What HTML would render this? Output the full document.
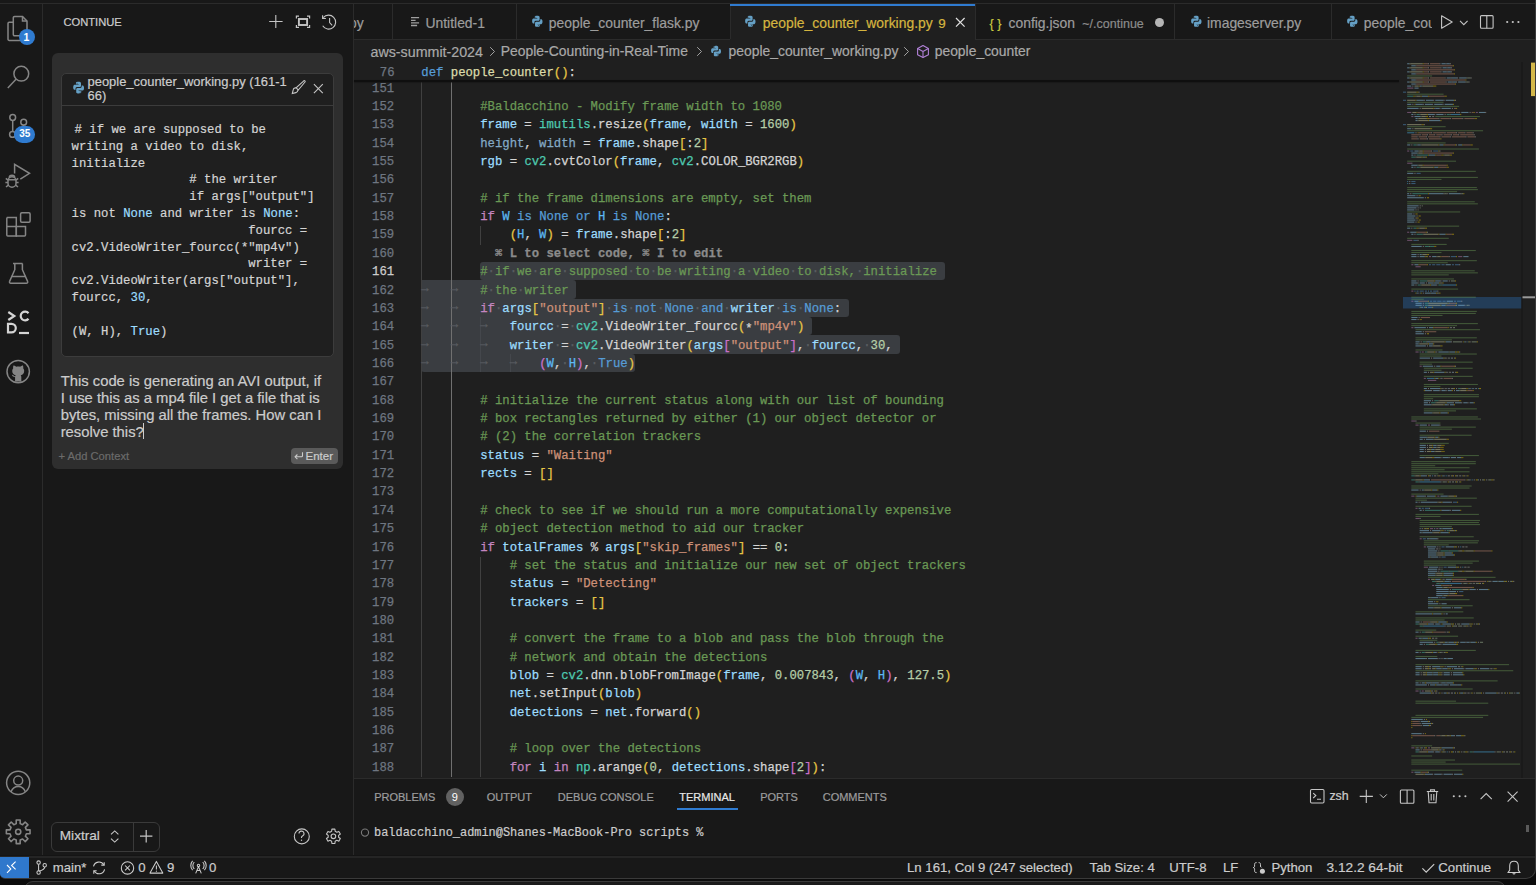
<!DOCTYPE html>
<html><head><meta charset="utf-8">
<style>
*{box-sizing:border-box;margin:0;padding:0}
html,body{width:1536px;height:885px;overflow:hidden;background:#0c0c0c;font-family:"Liberation Sans",sans-serif}
.abs{position:absolute}
#win{position:absolute;left:0;top:0;width:1536px;height:879px;background:#181818;border-bottom-left-radius:5px;border-bottom-right-radius:10px;overflow:hidden;border-right:1px solid #3a3a3a;border-bottom:1px solid #3a3a3a}
#behind{position:absolute;left:24px;top:881px;width:1482px;height:20px;background:#1b1b1b;border:1px solid #3a3a3a;border-radius:9px}
.hl{position:absolute;height:1px;background:#2b2b2b}
.vl{position:absolute;width:1px;background:#2b2b2b}
.ui{position:absolute;white-space:pre;font-family:"Liberation Sans",sans-serif;line-height:1}
.mono{font-family:"Liberation Mono",monospace}
#editor{position:absolute;left:354px;top:62px;width:1182px;height:716px;background:#1f1f1f;overflow:hidden}
.cl,.ln{position:absolute;white-space:pre;font-family:"Liberation Mono",monospace;font-size:12.28px;height:18.356px;line-height:18.356px}
.cl{left:421.3px;color:#d4d4d4;-webkit-text-stroke:0.25px currentColor}
.ln{left:353.2px;width:41px;text-align:right;color:#6e7681;-webkit-text-stroke:0.25px currentColor}
.ln.act{color:#cccccc}
.sel{position:absolute;background:#3a3d41;border-radius:3px}
.ig,.iga{position:absolute;width:1px;background:#404040}
.iga{background:#707070}
.ws{color:#5a5d62}
.arw{position:relative;top:-1.8px}
.igs{position:absolute;width:1px;background:#44474c}
.hint{color:#8b8b8b;font-weight:bold}
svg{position:absolute;overflow:visible}
.t{position:absolute;white-space:pre;line-height:1;-webkit-text-stroke:0.2px currentColor}
.r{position:absolute}
.badge{position:absolute;background:#2f7bd0;color:#fff;font-weight:bold;font-size:10.5px;text-align:center;line-height:16px;font-family:"Liberation Sans",sans-serif}
</style></head>
<body>
<div id="behind"></div>
<div id="win">
  <div class="hl" style="left:0;top:3px;width:1536px"></div>
  <div class="vl" style="left:42px;top:4px;height:852px"></div>
  <div class="vl" style="left:353px;top:4px;height:852px"></div>
<svg style="left:6px;top:15px;" width="24" height="28" viewBox="0 0 24 28"><g fill="none" stroke="#858585" stroke-width="1.5"><path d="M8.5 1.5h8l4.5 4.5v13.5a1.2 1.2 0 0 1-1.2 1.2H8.5a1.2 1.2 0 0 1-1.2-1.2V2.7a1.2 1.2 0 0 1 1.2-1.2z"/><path d="M16.5 1.5v4.5h4.5"/><path d="M7.3 7.2H3.2a1.2 1.2 0 0 0-1.2 1.2v15.8a1.2 1.2 0 0 0 1.2 1.2h11.4a1.2 1.2 0 0 0 1.2-1.2v-3"/></g></svg>
<div class="badge" style="left:18.5px;top:28.6px;width:16px;height:16px;border-radius:8px">1</div>
<svg style="left:0px;top:55px;" width="42" height="40" viewBox="0 55 42 40"><g fill="none" stroke="#858585" stroke-width="1.5"><circle cx="21.3" cy="73.7" r="7.4"/><path d="M16 79.3L7.8 88"/></g></svg>
<svg style="left:0px;top:105px;" width="42" height="45" viewBox="0 105 42 45"><g fill="none" stroke="#858585" stroke-width="1.5"><circle cx="12.7" cy="117.5" r="2.9"/><circle cx="23.7" cy="122.2" r="2.9"/><circle cx="12.5" cy="134.4" r="2.9"/><path d="M12.7 120.4v11.1"/><path d="M23.7 125.1c0 4-4 5.5-9 7.5"/></g></svg>
<div class="badge" style="left:14.4px;top:126.2px;width:20.6px;height:16.6px;border-radius:8.3px;font-size:10px;line-height:16.6px">35</div>
<svg style="left:0px;top:158px;" width="42" height="35" viewBox="0 158 42 35"><g fill="none" stroke="#858585" stroke-width="1.5"><path d="M14.6 173.6V164.4L29.5 173.3 20.3 179.2"/><path d="M8 180.8a4 4 0 0 1 8 0v2.4a4 4 0 0 1-8 0z"/><path d="M9.3 177.6a2.7 2.4 0 0 1 5.4 0M8 179.8h8M8 180.2l-2.2-1.8M16 180.2l2.2-1.8M8 182.6h-2.6M16 182.6h2.6M8.3 185.2l-2.3 1.8M15.7 185.2l2.3 1.8"/></g></svg>
<svg style="left:0px;top:208px;" width="42" height="32" viewBox="0 208 42 32"><g fill="none" stroke="#858585" stroke-width="1.5"><path d="M6.8 226.5h9.5v9.5H7.8a1 1 0 0 1-1-1zM6.8 217.5h9.5v9H6.8v-8a1 1 0 0 1 1-1z"/><path d="M16.3 226.5h9.2v8.5a1 1 0 0 1-1 1h-8.2z"/><rect x="20.6" y="212.8" width="9.5" height="9.5" rx="1.2"/></g></svg>
<svg style="left:0px;top:258px;" width="42" height="30" viewBox="0 258 42 30"><g fill="none" stroke="#858585" stroke-width="1.5"><path d="M13 263.5h9.5M14.8 263.5v6.2L9.6 281.3a1.3 1.3 0 0 0 1.2 1.9h15.6a1.3 1.3 0 0 0 1.2-1.9l-5.2-11.6v-6.2"/><path d="M11.5 276.5h14.5"/></g></svg>
<svg style="left:0px;top:305px;" width="42" height="34" viewBox="0 305 42 34"><g fill="none" stroke="#d4d4d4" stroke-width="2.2"><path d="M8.3 312l6 4-6 4"/><path d="M28.5 313.2a4.4 4.4 0 1 0 0 5.6"/><path d="M8 323.8h3.5a4.3 4.3 0 0 1 0 8.6H8z"/><path d="M19 333h10"/></g></svg>
<svg style="left:0px;top:355px;" width="42" height="34" viewBox="0 355 42 34"><defs><clipPath id="ghc"><circle cx="18.2" cy="371.6" r="11.2"/></clipPath></defs><circle cx="18.2" cy="371.6" r="11.2" fill="none" stroke="#858585" stroke-width="1.5"/><g clip-path="url(#ghc)"><path fill="#858585" transform="translate(8.2 361.6) scale(1.25)" d="M5.5 16V12.6C3.8 12.3 3.1 11.5 2.9 10.6L4 10.8C4.5 11.6 5 11.9 5.6 11.8C5.7 11.4 5.8 11.1 6 10.9C4.2 10.6 3.2 9.4 3.2 7.4C3.2 6.6 3.5 5.9 4 5.3C3.9 4.9 3.8 4.1 4.2 3.1C5 3.1 5.8 3.6 6.4 4.1C7.4 3.8 8.6 3.8 9.6 4.1C10.2 3.6 11 3.1 11.8 3.1C12.2 4.1 12.1 4.9 12 5.3C12.5 5.9 12.8 6.6 12.8 7.4C12.8 9.4 11.8 10.6 10 10.9C10.3 11.2 10.5 11.7 10.5 12.3V16Z"/></g></svg>
<svg style="left:0px;top:765px;" width="42" height="36" viewBox="0 765 42 36"><g fill="none" stroke="#858585" stroke-width="1.5"><circle cx="18.2" cy="782.8" r="11.6"/><circle cx="18.2" cy="780.6" r="4.5"/><path d="M11 792c1.3-3.4 4-5.4 7.2-5.4s5.9 2 7.2 5.4"/></g></svg>
<svg style="left:0px;top:815px;" width="42" height="36" viewBox="0 815 42 36"><g fill="none" stroke="#858585" stroke-width="1.6" stroke-linejoin="round"><circle cx="18.2" cy="831.8" r="2.6"/><path d="M16.24 823.63 L16.23 819.96 L20.17 819.96 L20.16 823.63 L22.59 824.64 L25.18 822.04 L27.96 824.82 L25.36 827.41 L26.37 829.84 L30.04 829.83 L30.04 833.77 L26.37 833.76 L25.36 836.19 L27.96 838.78 L25.18 841.56 L22.59 838.96 L20.16 839.97 L20.17 843.64 L16.23 843.64 L16.24 839.97 L13.81 838.96 L11.22 841.56 L8.44 838.78 L11.04 836.19 L10.03 833.76 L6.36 833.77 L6.36 829.83 L10.03 829.84 L11.04 827.41 L8.44 824.82 L11.22 822.04 L13.81 824.64Z"/></g></svg>
<div class="t" style="left:63.40px;top:17.12px;font-size:11.2px;color:#cccccc;font-family:"Liberation Sans",sans-serif;">CONTINUE</div>
<svg style="left:266px;top:12px;" width="20" height="20" viewBox="266 12 20 20"><g fill="none" stroke="#c5c5c5" stroke-width="1.1"><path d="M275.8 15v13M269.2 21.5h13.4"/></g></svg>
<svg style="left:292px;top:12px;" width="22" height="20" viewBox="292 12 22 20"><g fill="none" stroke="#c5c5c5" stroke-width="1.2"><path d="M296.4 18.6v-2.4h2.6M307 16.2h2.6v2.4M309.6 25v2.4H307M299 27.4h-2.6V25"/></g><rect x="298.9" y="19" width="8.2" height="6" fill="none" stroke="#c5c5c5" stroke-width="1.9"/></svg>
<svg style="left:318px;top:12px;" width="22" height="20" viewBox="318 12 22 20"><g fill="none" stroke="#c5c5c5" stroke-width="1.1"><path d="M323.3 17.6a7 7 0 1 1-0.6 8.2"/><path d="M322.6 15.2v3.3h3.3"/><path d="M329.6 18v4.5l2.6 2.8"/></g></svg>
<div class="r" style="left:52.2px;top:53px;width:290.8px;height:416px;background:#2e2e2e;border-radius:6px"></div>
<div class="r" style="left:60.5px;top:72.6px;width:273.5px;height:284.6px;background:#1f1f1f;border:1px solid #3c3c3c;border-radius:5px"></div>
<div class="r" style="left:61.5px;top:105.3px;width:271.5px;height:1px;background:#3c3c3c;"></div>
<svg style="left:71.965px;top:80.865px" width="13.225" height="13.225" viewBox="0 0 16 16"><path fill="#65a0c5" d="M7.9 1C4.6 1 4.8 2.4 4.8 2.4V3.9h3.2v.5H3.5S1.4 4.2 1.4 7.5s1.8 3.2 1.8 3.2h1.1V9.2s-.1-1.8 1.8-1.8h3.1s1.7 0 1.7-1.7V2.8S11.2 1 7.9 1zM6.1 2.1c.3 0 .6.3.6.6s-.3.6-.6.6-.6-.3-.6-.6.3-.6.6-.6z"/><path fill="#65a0c5" d="M8.1 15c3.3 0 3.1-1.4 3.1-1.4v-1.5H8v-.5h4.5s2.1.2 2.1-3.1-1.8-3.2-1.8-3.2h-1.1v1.5s.1 1.8-1.8 1.8H6.8s-1.7 0-1.7 1.7v2.9S4.8 15 8.1 15zm1.8-1.1c-.3 0-.6-.3-.6-.6s.3-.6.6-.6.6.3.6.6-.3.6-.6.6z"/></svg>
<div class="t" style="left:87.50px;top:76.24px;font-size:12.95px;color:#cccccc;font-family:"Liberation Sans",sans-serif;">people_counter_working.py (161-1</div>
<div class="t" style="left:87.50px;top:90.44px;font-size:12.95px;color:#cccccc;font-family:"Liberation Sans",sans-serif;">66)</div>
<svg style="left:288px;top:78px;" width="20" height="20" viewBox="288 78 20 20"><g fill="none" stroke="#c5c5c5" stroke-width="1.1"><path d="M303.8 80.8c.8-.6 1.8.4 1.2 1.2l-6.7 8-2.2-2.2z"/><path d="M296 87.9c-1.2-.3-2.6.6-2.8 2l-.9 3.6 3.6-.9c1.3-.3 2.2-1.7 1.9-2.9"/></g></svg>
<svg style="left:310px;top:82px;" width="14" height="14" viewBox="310 82 14 14"><g fill="none" stroke="#c5c5c5" stroke-width="1.1"><path d="M313.9 84.2l8.9 8.9M322.8 84.2l-8.9 8.9"/></g></svg>
<div class="t mono" style="left:74.60px;top:121.00px;height:18px;line-height:18px;font-size:12.28px;color:#d4d4d4"># if we are supposed to be</div>
<div class="t mono" style="left:71.60px;top:137.80px;height:18px;line-height:18px;font-size:12.28px;color:#d4d4d4">writing a video to disk,</div>
<div class="t mono" style="left:71.60px;top:154.60px;height:18px;line-height:18px;font-size:12.28px;color:#d4d4d4">initialize</div>
<div class="t mono" style="left:71.60px;top:171.40px;height:18px;line-height:18px;font-size:12.28px;color:#d4d4d4">                # the writer</div>
<div class="t mono" style="left:71.60px;top:188.20px;height:18px;line-height:18px;font-size:12.28px;color:#d4d4d4">                if args["output"]</div>
<div class="t mono" style="left:71.60px;top:205.00px;height:18px;line-height:18px;font-size:12.28px;color:#d4d4d4">is not </div>
<div class="t mono" style="left:123.19px;top:205.00px;height:18px;line-height:18px;font-size:12.28px;color:#9cdcfe">None</div>
<div class="t mono" style="left:152.67px;top:205.00px;height:18px;line-height:18px;font-size:12.28px;color:#d4d4d4"> and writer is </div>
<div class="t mono" style="left:263.22px;top:205.00px;height:18px;line-height:18px;font-size:12.28px;color:#9cdcfe">None</div>
<div class="t mono" style="left:292.70px;top:205.00px;height:18px;line-height:18px;font-size:12.28px;color:#d4d4d4">:</div>
<div class="t mono" style="left:71.60px;top:221.80px;height:18px;line-height:18px;font-size:12.28px;color:#d4d4d4">                        fourcc =</div>
<div class="t mono" style="left:71.60px;top:238.60px;height:18px;line-height:18px;font-size:12.28px;color:#d4d4d4">cv2.VideoWriter_fourcc(*"mp4v")</div>
<div class="t mono" style="left:71.60px;top:255.40px;height:18px;line-height:18px;font-size:12.28px;color:#d4d4d4">                        writer =</div>
<div class="t mono" style="left:71.60px;top:272.20px;height:18px;line-height:18px;font-size:12.28px;color:#d4d4d4">cv2.VideoWriter(args["output"],</div>
<div class="t mono" style="left:71.60px;top:289.00px;height:18px;line-height:18px;font-size:12.28px;color:#d4d4d4">fourcc, </div>
<div class="t mono" style="left:130.56px;top:289.00px;height:18px;line-height:18px;font-size:12.28px;color:#9cdcfe">30</div>
<div class="t mono" style="left:145.30px;top:289.00px;height:18px;line-height:18px;font-size:12.28px;color:#d4d4d4">,</div>
<div class="t mono" style="left:71.60px;top:322.60px;height:18px;line-height:18px;font-size:12.28px;color:#d4d4d4">(W, H), </div>
<div class="t mono" style="left:130.56px;top:322.60px;height:18px;line-height:18px;font-size:12.28px;color:#9cdcfe">True</div>
<div class="t mono" style="left:160.04px;top:322.60px;height:18px;line-height:18px;font-size:12.28px;color:#d4d4d4">)</div>
<div class="t" style="left:60.70px;top:374.47px;font-size:14.8px;color:#cccccc;font-family:"Liberation Sans",sans-serif;">This code is generating an AVI output, if</div>
<div class="t" style="left:60.70px;top:391.27px;font-size:14.8px;color:#cccccc;font-family:"Liberation Sans",sans-serif;">I use this as a mp4 file I get a file that is</div>
<div class="t" style="left:60.70px;top:408.07px;font-size:14.8px;color:#cccccc;font-family:"Liberation Sans",sans-serif;">bytes, missing all the frames. How can I</div>
<div class="t" style="left:60.70px;top:424.87px;font-size:14.8px;color:#cccccc;font-family:"Liberation Sans",sans-serif;">resolve this?</div>
<div class="r" style="left:143px;top:423px;width:1px;height:16px;background:#cccccc;"></div>
<div class="t" style="left:58.50px;top:450.52px;font-size:11.2px;color:#6b6b6b;font-family:"Liberation Sans",sans-serif;">+ Add Context</div>
<div class="r" style="left:291px;top:448.3px;width:47px;height:15.7px;background:#5a5a5a;border-radius:4px"></div>
<div class="t" style="left:305.50px;top:450.57px;font-size:11.5px;color:#cccccc;font-family:"Liberation Sans",sans-serif;">Enter</div>
<svg style="left:293px;top:450px;" width="12" height="12" viewBox="293 450 12 12"><g fill="none" stroke="#cccccc" stroke-width="1.1"><path d="M302.5 452.2v3.6a1 1 0 0 1-1 1h-6.4"/><path d="M297.4 454.5l-2.3 2.3 2.3 2.3"/></g></svg>
<div class="r" style="left:51px;top:821.6px;width:108.8px;height:30.2px;background:transparent;border:1px solid #3a3a3a;border-radius:6px"></div>
<div class="r" style="left:133.3px;top:822px;width:1px;height:29px;background:#3a3a3a;"></div>
<div class="t" style="left:59.80px;top:829.49px;font-size:13.6px;color:#cccccc;font-family:"Liberation Sans",sans-serif;">Mixtral</div>
<svg style="left:108px;top:826px;" width="14" height="20" viewBox="108 826 14 20"><g fill="none" stroke="#c5c5c5" stroke-width="1.1"><path d="M111 834.4l3.7-3.5 3.7 3.5M111 838.6l3.7 3.5 3.7-3.5"/></g></svg>
<svg style="left:138px;top:828px;" width="16" height="16" viewBox="138 828 16 16"><g fill="none" stroke="#c5c5c5" stroke-width="1.2"><path d="M146.2 830v12.4M140 836.2h12.4"/></g></svg>
<svg style="left:292px;top:826px;" width="20" height="20" viewBox="292 826 20 20"><circle cx="301.8" cy="836.4" r="7.5" fill="none" stroke="#c5c5c5" stroke-width="1.1"/><path d="M299 833.6a2.5 2.5 0 1 1 3.5 2.3c-.8.4-1 .9-1 1.6v.6" fill="none" stroke="#c5c5c5" stroke-width="1.1"/><circle cx="301.5" cy="840.3" r=".7" fill="#c5c5c5"/></svg>
<svg style="left:324px;top:826px;" width="20" height="20" viewBox="324 826 20 20"><g fill="none" stroke="#c5c5c5" stroke-width="1.1" stroke-linejoin="round"><circle cx="333.4" cy="836.3" r="2.3"/><path d="M331.63 831.30 L331.88 829.16 L334.92 829.16 L335.17 831.30 L336.84 832.27 L338.82 831.42 L340.34 834.04 L338.61 835.33 L338.61 837.27 L340.34 838.56 L338.82 841.18 L336.84 840.33 L335.17 841.30 L334.92 843.44 L331.88 843.44 L331.63 841.30 L329.96 840.33 L327.98 841.18 L326.46 838.56 L328.19 837.27 L328.19 835.33 L326.46 834.04 L327.98 831.42 L329.96 832.27Z"/></g></svg>
  <div class="abs" style="left:354px;top:40px;width:1182px;height:738px;background:#1f1f1f"></div>
  <div class="abs" style="left:354px;top:4px;width:1182px;height:35px;background:#181818"></div>
  <div class="hl" style="left:354px;top:39px;width:1182px"></div>
<div style="position:absolute;left:354px;top:0;width:1182px;height:40px;overflow:hidden"><div style="position:absolute;left:-354px;top:0;width:1536px;height:40px">
<div class="r" style="left:392px;top:4px;width:1px;height:35px;background:#2b2b2b;"></div>
<div class="r" style="left:515.5px;top:4px;width:1px;height:35px;background:#2b2b2b;"></div>
<div class="r" style="left:1174px;top:4px;width:1px;height:35px;background:#2b2b2b;"></div>
<div class="r" style="left:1330.5px;top:4px;width:1px;height:35px;background:#2b2b2b;"></div>
<div class="r" style="left:730px;top:4px;width:245px;height:36px;background:#1f1f1f;"></div>
<div class="r" style="left:729.5px;top:4px;width:1px;height:35px;background:#2b2b2b;"></div>
<div class="r" style="left:974.5px;top:4px;width:1px;height:35px;background:#2b2b2b;"></div>
<div class="r" style="left:730px;top:4px;width:245px;height:1.5px;background:#2f7bd0;"></div>
<div class="t" style="left:349.00px;top:17.03px;font-size:13.9px;color:#9d9d9d;font-family:"Liberation Sans",sans-serif;">py</div>
<svg style="left:410px;top:16px;" width="10" height="11" viewBox="410 16 10 11"><g stroke="#a0a0a0" stroke-width="1.3"><path d="M411 17.6h8.1M411 20.3h4.6M411 22.9h8.1M411 25.5h6.1"/></g></svg>
<div class="t" style="left:425.50px;top:17.03px;font-size:13.9px;color:#9d9d9d;font-family:"Liberation Sans",sans-serif;">Untitled-1</div>
<svg style="left:531.01px;top:14.91px" width="12.649999999999999" height="12.649999999999999" viewBox="0 0 16 16"><path fill="#65a0c5" d="M7.9 1C4.6 1 4.8 2.4 4.8 2.4V3.9h3.2v.5H3.5S1.4 4.2 1.4 7.5s1.8 3.2 1.8 3.2h1.1V9.2s-.1-1.8 1.8-1.8h3.1s1.7 0 1.7-1.7V2.8S11.2 1 7.9 1zM6.1 2.1c.3 0 .6.3.6.6s-.3.6-.6.6-.6-.3-.6-.6.3-.6.6-.6z"/><path fill="#65a0c5" d="M8.1 15c3.3 0 3.1-1.4 3.1-1.4v-1.5H8v-.5h4.5s2.1.2 2.1-3.1-1.8-3.2-1.8-3.2h-1.1v1.5s.1 1.8-1.8 1.8H6.8s-1.7 0-1.7 1.7v2.9S4.8 15 8.1 15zm1.8-1.1c-.3 0-.6-.3-.6-.6s.3-.6.6-.6.6.3.6.6-.3.6-.6.6z"/></svg>
<div class="t" style="left:548.80px;top:17.03px;font-size:13.9px;color:#9d9d9d;font-family:"Liberation Sans",sans-serif;">people_counter_flask.py</div>
<svg style="left:744.31px;top:14.91px" width="12.649999999999999" height="12.649999999999999" viewBox="0 0 16 16"><path fill="#65a0c5" d="M7.9 1C4.6 1 4.8 2.4 4.8 2.4V3.9h3.2v.5H3.5S1.4 4.2 1.4 7.5s1.8 3.2 1.8 3.2h1.1V9.2s-.1-1.8 1.8-1.8h3.1s1.7 0 1.7-1.7V2.8S11.2 1 7.9 1zM6.1 2.1c.3 0 .6.3.6.6s-.3.6-.6.6-.6-.3-.6-.6.3-.6.6-.6z"/><path fill="#65a0c5" d="M8.1 15c3.3 0 3.1-1.4 3.1-1.4v-1.5H8v-.5h4.5s2.1.2 2.1-3.1-1.8-3.2-1.8-3.2h-1.1v1.5s.1 1.8-1.8 1.8H6.8s-1.7 0-1.7 1.7v2.9S4.8 15 8.1 15zm1.8-1.1c-.3 0-.6-.3-.6-.6s.3-.6.6-.6.6.3.6.6-.3.6-.6.6z"/></svg>
<div class="t" style="left:762.80px;top:17.03px;font-size:13.9px;color:#d5b53f;font-family:"Liberation Sans",sans-serif;">people_counter_working.py</div>
<div class="t" style="left:938.30px;top:17.46px;font-size:13.4px;color:#d5b53f;font-family:"Liberation Sans",sans-serif;">9</div>
<svg style="left:953px;top:15px;" width="14" height="14" viewBox="953 15 14 14"><g fill="none" stroke="#e0e0e0" stroke-width="1.2"><path d="M956 18l8.6 8.6M964.6 18L956 26.6"/></g></svg>
<div class="t" style="left:989.50px;top:17.72px;font-size:12.5px;color:#cbcb41;font-family:"Liberation Sans",sans-serif;font-weight:bold;letter-spacing:-1px">{ }</div>
<div class="t" style="left:1008.50px;top:17.03px;font-size:13.9px;color:#9d9d9d;font-family:"Liberation Sans",sans-serif;">config.json</div>
<div class="t" style="left:1082.30px;top:18.22px;font-size:12.5px;color:#8b8b8b;font-family:"Liberation Sans",sans-serif;">~/.continue</div>
<div class="r" style="left:1155px;top:18px;width:9px;height:9px;background:#b5b5b5;border-radius:50%"></div>
<svg style="left:1189.51px;top:14.91px" width="12.649999999999999" height="12.649999999999999" viewBox="0 0 16 16"><path fill="#65a0c5" d="M7.9 1C4.6 1 4.8 2.4 4.8 2.4V3.9h3.2v.5H3.5S1.4 4.2 1.4 7.5s1.8 3.2 1.8 3.2h1.1V9.2s-.1-1.8 1.8-1.8h3.1s1.7 0 1.7-1.7V2.8S11.2 1 7.9 1zM6.1 2.1c.3 0 .6.3.6.6s-.3.6-.6.6-.6-.3-.6-.6.3-.6.6-.6z"/><path fill="#65a0c5" d="M8.1 15c3.3 0 3.1-1.4 3.1-1.4v-1.5H8v-.5h4.5s2.1.2 2.1-3.1-1.8-3.2-1.8-3.2h-1.1v1.5s.1 1.8-1.8 1.8H6.8s-1.7 0-1.7 1.7v2.9S4.8 15 8.1 15zm1.8-1.1c-.3 0-.6-.3-.6-.6s.3-.6.6-.6.6.3.6.6-.3.6-.6.6z"/></svg>
<div class="t" style="left:1207.00px;top:17.03px;font-size:13.9px;color:#9d9d9d;font-family:"Liberation Sans",sans-serif;">imageserver.py</div>
<svg style="left:1345.51px;top:14.91px" width="12.649999999999999" height="12.649999999999999" viewBox="0 0 16 16"><path fill="#65a0c5" d="M7.9 1C4.6 1 4.8 2.4 4.8 2.4V3.9h3.2v.5H3.5S1.4 4.2 1.4 7.5s1.8 3.2 1.8 3.2h1.1V9.2s-.1-1.8 1.8-1.8h3.1s1.7 0 1.7-1.7V2.8S11.2 1 7.9 1zM6.1 2.1c.3 0 .6.3.6.6s-.3.6-.6.6-.6-.3-.6-.6.3-.6.6-.6z"/><path fill="#65a0c5" d="M8.1 15c3.3 0 3.1-1.4 3.1-1.4v-1.5H8v-.5h4.5s2.1.2 2.1-3.1-1.8-3.2-1.8-3.2h-1.1v1.5s.1 1.8-1.8 1.8H6.8s-1.7 0-1.7 1.7v2.9S4.8 15 8.1 15zm1.8-1.1c-.3 0-.6-.3-.6-.6s.3-.6.6-.6.6.3.6.6-.3.6-.6.6z"/></svg>
<div class="t" style="left:1363.8px;top:17.03px;font-size:13.9px;color:#9d9d9d;width:68px;overflow:hidden">people_counter</div>
<div class="r" style="left:1432px;top:4px;width:104px;height:35px;background:#181818;"></div>
<svg style="left:1438px;top:14px;" width="18" height="18" viewBox="1438 14 18 18"><path d="M1441.6 15.8v12.4l10.6-6.2z" fill="none" stroke="#c5c5c5" stroke-width="1.1" stroke-linejoin="round"/></svg>
<svg style="left:1458px;top:18px;" width="12" height="10" viewBox="1458 18 12 10"><path d="M1460 20.8l3.8 3.8 3.8-3.8" fill="none" stroke="#c5c5c5" stroke-width="1.1"/></svg>
<svg style="left:1478px;top:14px;" width="18" height="18" viewBox="1478 14 18 18"><g fill="none" stroke="#c5c5c5" stroke-width="1.1"><rect x="1480.5" y="15.6" width="12.6" height="12.6" rx="1"/><path d="M1486.8 15.6v12.6"/></g></svg>
<svg style="left:1504px;top:18px;" width="18" height="8" viewBox="1504 18 18 8"><g fill="#c5c5c5"><circle cx="1507.2" cy="22" r="1.1"/><circle cx="1512.8" cy="22" r="1.1"/><circle cx="1518.4" cy="22" r="1.1"/></g></svg>
</div></div>
<div class="t" style="left:370.50px;top:44.84px;font-size:14.25px;color:#a9a9a9;font-family:"Liberation Sans",sans-serif;">aws-summit-2024</div>
<svg style="left:489px;top:45px;" width="8" height="12" viewBox="489 45 8 12"><path d="M490.2 47.2l4.3 4.3-4.3 4.3" fill="none" stroke="#a9a9a9" stroke-width="0.95"/></svg>
<div class="t" style="left:500.80px;top:45.13px;font-size:13.9px;color:#a9a9a9;font-family:"Liberation Sans",sans-serif;">People-Counting-in-Real-Time</div>
<svg style="left:696px;top:45px;" width="8" height="12" viewBox="696 45 8 12"><path d="M697.2 47.2l4.3 4.3-4.3 4.3" fill="none" stroke="#a9a9a9" stroke-width="0.95"/></svg>
<svg style="left:709.8549999999999px;top:44.855px" width="12.075" height="12.075" viewBox="0 0 16 16"><path fill="#65a0c5" d="M7.9 1C4.6 1 4.8 2.4 4.8 2.4V3.9h3.2v.5H3.5S1.4 4.2 1.4 7.5s1.8 3.2 1.8 3.2h1.1V9.2s-.1-1.8 1.8-1.8h3.1s1.7 0 1.7-1.7V2.8S11.2 1 7.9 1zM6.1 2.1c.3 0 .6.3.6.6s-.3.6-.6.6-.6-.3-.6-.6.3-.6.6-.6z"/><path fill="#65a0c5" d="M8.1 15c3.3 0 3.1-1.4 3.1-1.4v-1.5H8v-.5h4.5s2.1.2 2.1-3.1-1.8-3.2-1.8-3.2h-1.1v1.5s.1 1.8-1.8 1.8H6.8s-1.7 0-1.7 1.7v2.9S4.8 15 8.1 15zm1.8-1.1c-.3 0-.6-.3-.6-.6s.3-.6.6-.6.6.3.6.6-.3.6-.6.6z"/></svg>
<div class="t" style="left:728.50px;top:45.13px;font-size:13.9px;color:#a9a9a9;font-family:"Liberation Sans",sans-serif;">people_counter_working.py</div>
<svg style="left:903px;top:45px;" width="8" height="12" viewBox="903 45 8 12"><path d="M904.2 47.2l4.3 4.3-4.3 4.3" fill="none" stroke="#a9a9a9" stroke-width="0.95"/></svg>
<svg style="left:915px;top:44px;" width="16" height="16" viewBox="915 44 16 16"><g fill="none" stroke="#b180d7" stroke-width="1.1" stroke-linejoin="round"><path d="M923 45.6l5.4 2.9v6.2l-5.4 2.9-5.4-2.9v-6.2z"/><path d="M917.6 48.5l5.4 3 5.4-3M923 51.5v6.1"/></g></svg>
<div class="t" style="left:934.70px;top:45.13px;font-size:13.9px;color:#a9a9a9;font-family:"Liberation Sans",sans-serif;">people_counter</div>
<div class="sel" style="left:480.26px;top:261.86px;width:464.31px;height:18.36px;border-radius:3px 3px 3px 3px"></div>
<div class="sel" style="left:421.30px;top:280.22px;width:154.77px;height:18.36px;border-radius:0 3px 3px 0"></div>
<div class="sel" style="left:421.30px;top:298.57px;width:427.46px;height:18.36px;border-radius:0 3px 3px 0"></div>
<div class="sel" style="left:421.30px;top:316.93px;width:390.61px;height:18.36px;border-radius:0 3px 3px 0"></div>
<div class="sel" style="left:421.30px;top:335.28px;width:479.05px;height:18.36px;border-radius:0 3px 3px 0"></div>
<div class="sel" style="left:421.30px;top:353.64px;width:213.73px;height:18.36px;border-radius:0 3px 3px 3px"></div>
<div class="ig" style="left:421.30px;top:79.60px;height:697.53px"></div>
<div class="iga" style="left:450.78px;top:79.60px;height:697.53px"></div>
<div class="ig" style="left:480.26px;top:226.45px;height:18.36px"></div>
<div class="ig" style="left:480.26px;top:556.86px;height:220.27px"></div>
<div class="igs" style="left:480.26px;top:316.93px;height:55.07px"></div>
<div class="igs" style="left:509.74px;top:353.64px;height:18.36px"></div>
<div class="ln" style="top:79.60px">151</div>
<div class="ln" style="top:97.96px">152</div>
<div class="cl" style="top:97.96px"><span style="color:#D4D4D4">        </span><span style="color:#6A9955">#Baldacchino - Modify frame width to 1080</span></div>
<div class="ln" style="top:116.31px">153</div>
<div class="cl" style="top:116.31px"><span style="color:#D4D4D4">        </span><span style="color:#9CDCFE">frame</span><span style="color:#D4D4D4"> = </span><span style="color:#4EC9B0">imutils</span><span style="color:#D4D4D4">.resize</span><span style="color:#e6c646">(</span><span style="color:#9CDCFE">frame</span><span style="color:#D4D4D4">, </span><span style="color:#9CDCFE">width</span><span style="color:#D4D4D4"> = </span><span style="color:#B5CEA8">1600</span><span style="color:#e6c646">)</span></div>
<div class="ln" style="top:134.67px">154</div>
<div class="cl" style="top:134.67px"><span style="color:#D4D4D4">        </span><span style="color:#84aac6">height</span><span style="color:#D4D4D4">, </span><span style="color:#84aac6">width</span><span style="color:#D4D4D4"> = </span><span style="color:#9CDCFE">frame</span><span style="color:#D4D4D4">.shape</span><span style="color:#e6c646">[</span><span style="color:#D4D4D4">:</span><span style="color:#B5CEA8">2</span><span style="color:#e6c646">]</span></div>
<div class="ln" style="top:153.02px">155</div>
<div class="cl" style="top:153.02px"><span style="color:#D4D4D4">        </span><span style="color:#9CDCFE">rgb</span><span style="color:#D4D4D4"> = </span><span style="color:#4EC9B0">cv2</span><span style="color:#D4D4D4">.cvtColor</span><span style="color:#e6c646">(</span><span style="color:#9CDCFE">frame</span><span style="color:#D4D4D4">, </span><span style="color:#4EC9B0">cv2</span><span style="color:#D4D4D4">.COLOR_BGR2RGB</span><span style="color:#e6c646">)</span></div>
<div class="ln" style="top:171.38px">156</div>
<div class="ln" style="top:189.74px">157</div>
<div class="cl" style="top:189.74px"><span style="color:#D4D4D4">        </span><span style="color:#6A9955"># if the frame dimensions are empty, set them</span></div>
<div class="ln" style="top:208.09px">158</div>
<div class="cl" style="top:208.09px"><span style="color:#D4D4D4">        </span><span style="color:#C586C0">if</span><span style="color:#D4D4D4"> </span><span style="color:#5cb8f2">W</span><span style="color:#D4D4D4"> </span><span style="color:#569CD6">is</span><span style="color:#D4D4D4"> </span><span style="color:#569CD6">None</span><span style="color:#D4D4D4"> </span><span style="color:#569CD6">or</span><span style="color:#D4D4D4"> </span><span style="color:#5cb8f2">H</span><span style="color:#D4D4D4"> </span><span style="color:#569CD6">is</span><span style="color:#D4D4D4"> </span><span style="color:#569CD6">None</span><span style="color:#D4D4D4">:</span></div>
<div class="ln" style="top:226.45px">159</div>
<div class="cl" style="top:226.45px"><span style="color:#D4D4D4">            </span><span style="color:#e6c646">(</span><span style="color:#5cb8f2">H</span><span style="color:#D4D4D4">, </span><span style="color:#5cb8f2">W</span><span style="color:#e6c646">)</span><span style="color:#D4D4D4"> = </span><span style="color:#9CDCFE">frame</span><span style="color:#D4D4D4">.shape</span><span style="color:#e6c646">[</span><span style="color:#D4D4D4">:</span><span style="color:#B5CEA8">2</span><span style="color:#e6c646">]</span></div>
<div class="ln" style="top:244.80px">160</div>
<div class="ln act" style="top:263.16px">161</div>
<div class="cl" style="top:263.16px">        <span style="color:#6A9955">#<span class="ws">·</span>if<span class="ws">·</span>we<span class="ws">·</span>are<span class="ws">·</span>supposed<span class="ws">·</span>to<span class="ws">·</span>be<span class="ws">·</span>writing<span class="ws">·</span>a<span class="ws">·</span>video<span class="ws">·</span>to<span class="ws">·</span>disk,<span class="ws">·</span>initialize</span></div>
<div class="ln" style="top:281.52px">162</div>
<div class="cl" style="top:281.52px"><span class="ws arw">→</span>   <span class="ws arw">→</span>   <span style="color:#6A9955">#<span class="ws">·</span>the<span class="ws">·</span>writer</span></div>
<div class="ln" style="top:299.87px">163</div>
<div class="cl" style="top:299.87px"><span class="ws arw">→</span>   <span class="ws arw">→</span>   <span style="color:#C586C0">if</span><span style="color:#D4D4D4"><span class="ws">·</span></span><span style="color:#9CDCFE">args</span><span style="color:#e6c646">[</span><span style="color:#CE9178">&quot;output&quot;</span><span style="color:#e6c646">]</span><span style="color:#D4D4D4"><span class="ws">·</span></span><span style="color:#569CD6">is</span><span style="color:#D4D4D4"><span class="ws">·</span></span><span style="color:#569CD6">not</span><span style="color:#D4D4D4"><span class="ws">·</span></span><span style="color:#569CD6">None</span><span style="color:#D4D4D4"><span class="ws">·</span></span><span style="color:#569CD6">and</span><span style="color:#D4D4D4"><span class="ws">·</span></span><span style="color:#9CDCFE">writer</span><span style="color:#D4D4D4"><span class="ws">·</span></span><span style="color:#569CD6">is</span><span style="color:#D4D4D4"><span class="ws">·</span></span><span style="color:#569CD6">None</span><span style="color:#D4D4D4">:</span></div>
<div class="ln" style="top:318.23px">164</div>
<div class="cl" style="top:318.23px"><span class="ws arw">→</span>   <span class="ws arw">→</span>   <span class="ws arw">→</span>   <span style="color:#9CDCFE">fourcc</span><span style="color:#D4D4D4"><span class="ws">·</span>=<span class="ws">·</span></span><span style="color:#4EC9B0">cv2</span><span style="color:#D4D4D4">.VideoWriter_fourcc</span><span style="color:#e6c646">(</span><span style="color:#D4D4D4;position:relative;top:2.2px">*</span><span style="color:#CE9178">&quot;mp4v&quot;</span><span style="color:#e6c646">)</span></div>
<div class="ln" style="top:336.58px">165</div>
<div class="cl" style="top:336.58px"><span class="ws arw">→</span>   <span class="ws arw">→</span>   <span class="ws arw">→</span>   <span style="color:#9CDCFE">writer</span><span style="color:#D4D4D4"><span class="ws">·</span>=<span class="ws">·</span></span><span style="color:#4EC9B0">cv2</span><span style="color:#D4D4D4">.VideoWriter</span><span style="color:#e6c646">(</span><span style="color:#9CDCFE">args</span><span style="color:#cb70c9">[</span><span style="color:#CE9178">&quot;output&quot;</span><span style="color:#cb70c9">]</span><span style="color:#D4D4D4">,<span class="ws">·</span></span><span style="color:#9CDCFE">fourcc</span><span style="color:#D4D4D4">,<span class="ws">·</span></span><span style="color:#B5CEA8">30</span><span style="color:#D4D4D4">,</span></div>
<div class="ln" style="top:354.94px">166</div>
<div class="cl" style="top:354.94px"><span class="ws arw">→</span>   <span class="ws arw">→</span>   <span class="ws arw">→</span>   <span class="ws arw">→</span>   <span style="color:#cb70c9">(</span><span style="color:#5cb8f2">W</span><span style="color:#D4D4D4">,<span class="ws">·</span></span><span style="color:#5cb8f2">H</span><span style="color:#cb70c9">)</span><span style="color:#D4D4D4">,<span class="ws">·</span></span><span style="color:#569CD6">True</span><span style="color:#e6c646">)</span></div>
<div class="ln" style="top:373.30px">167</div>
<div class="ln" style="top:391.65px">168</div>
<div class="cl" style="top:391.65px"><span style="color:#D4D4D4">        </span><span style="color:#6A9955"># initialize the current status along with our list of bounding</span></div>
<div class="ln" style="top:410.01px">169</div>
<div class="cl" style="top:410.01px"><span style="color:#D4D4D4">        </span><span style="color:#6A9955"># box rectangles returned by either (1) our object detector or</span></div>
<div class="ln" style="top:428.36px">170</div>
<div class="cl" style="top:428.36px"><span style="color:#D4D4D4">        </span><span style="color:#6A9955"># (2) the correlation trackers</span></div>
<div class="ln" style="top:446.72px">171</div>
<div class="cl" style="top:446.72px"><span style="color:#D4D4D4">        </span><span style="color:#9CDCFE">status</span><span style="color:#D4D4D4"> = </span><span style="color:#CE9178">&quot;Waiting&quot;</span></div>
<div class="ln" style="top:465.08px">172</div>
<div class="cl" style="top:465.08px"><span style="color:#D4D4D4">        </span><span style="color:#9CDCFE">rects</span><span style="color:#D4D4D4"> = </span><span style="color:#e6c646">[]</span></div>
<div class="ln" style="top:483.43px">173</div>
<div class="ln" style="top:501.79px">174</div>
<div class="cl" style="top:501.79px"><span style="color:#D4D4D4">        </span><span style="color:#6A9955"># check to see if we should run a more computationally expensive</span></div>
<div class="ln" style="top:520.14px">175</div>
<div class="cl" style="top:520.14px"><span style="color:#D4D4D4">        </span><span style="color:#6A9955"># object detection method to aid our tracker</span></div>
<div class="ln" style="top:538.50px">176</div>
<div class="cl" style="top:538.50px"><span style="color:#D4D4D4">        </span><span style="color:#C586C0">if</span><span style="color:#D4D4D4"> </span><span style="color:#9CDCFE">totalFrames</span><span style="color:#D4D4D4"> % </span><span style="color:#9CDCFE">args</span><span style="color:#e6c646">[</span><span style="color:#CE9178">&quot;skip_frames&quot;</span><span style="color:#e6c646">]</span><span style="color:#D4D4D4"> == </span><span style="color:#B5CEA8">0</span><span style="color:#D4D4D4">:</span></div>
<div class="ln" style="top:556.86px">177</div>
<div class="cl" style="top:556.86px"><span style="color:#D4D4D4">            </span><span style="color:#6A9955"># set the status and initialize our new set of object trackers</span></div>
<div class="ln" style="top:575.21px">178</div>
<div class="cl" style="top:575.21px"><span style="color:#D4D4D4">            </span><span style="color:#9CDCFE">status</span><span style="color:#D4D4D4"> = </span><span style="color:#CE9178">&quot;Detecting&quot;</span></div>
<div class="ln" style="top:593.57px">179</div>
<div class="cl" style="top:593.57px"><span style="color:#D4D4D4">            </span><span style="color:#9CDCFE">trackers</span><span style="color:#D4D4D4"> = </span><span style="color:#e6c646">[]</span></div>
<div class="ln" style="top:611.92px">180</div>
<div class="ln" style="top:630.28px">181</div>
<div class="cl" style="top:630.28px"><span style="color:#D4D4D4">            </span><span style="color:#6A9955"># convert the frame to a blob and pass the blob through the</span></div>
<div class="ln" style="top:648.64px">182</div>
<div class="cl" style="top:648.64px"><span style="color:#D4D4D4">            </span><span style="color:#6A9955"># network and obtain the detections</span></div>
<div class="ln" style="top:666.99px">183</div>
<div class="cl" style="top:666.99px"><span style="color:#D4D4D4">            </span><span style="color:#9CDCFE">blob</span><span style="color:#D4D4D4"> = </span><span style="color:#4EC9B0">cv2</span><span style="color:#D4D4D4">.dnn.blobFromImage</span><span style="color:#e6c646">(</span><span style="color:#9CDCFE">frame</span><span style="color:#D4D4D4">, </span><span style="color:#B5CEA8">0.007843</span><span style="color:#D4D4D4">, </span><span style="color:#cb70c9">(</span><span style="color:#5cb8f2">W</span><span style="color:#D4D4D4">, </span><span style="color:#5cb8f2">H</span><span style="color:#cb70c9">)</span><span style="color:#D4D4D4">, </span><span style="color:#B5CEA8">127.5</span><span style="color:#e6c646">)</span></div>
<div class="ln" style="top:685.35px">184</div>
<div class="cl" style="top:685.35px"><span style="color:#D4D4D4">            </span><span style="color:#9CDCFE">net</span><span style="color:#D4D4D4">.setInput</span><span style="color:#e6c646">(</span><span style="color:#9CDCFE">blob</span><span style="color:#e6c646">)</span></div>
<div class="ln" style="top:703.70px">185</div>
<div class="cl" style="top:703.70px"><span style="color:#D4D4D4">            </span><span style="color:#9CDCFE">detections</span><span style="color:#D4D4D4"> = </span><span style="color:#9CDCFE">net</span><span style="color:#D4D4D4">.forward</span><span style="color:#e6c646">()</span></div>
<div class="ln" style="top:722.06px">186</div>
<div class="ln" style="top:740.42px">187</div>
<div class="cl" style="top:740.42px"><span style="color:#D4D4D4">            </span><span style="color:#6A9955"># loop over the detections</span></div>
<div class="ln" style="top:758.77px">188</div>
<div class="cl" style="top:758.77px"><span style="color:#D4D4D4">            </span><span style="color:#C586C0">for</span><span style="color:#D4D4D4"> </span><span style="color:#9CDCFE">i</span><span style="color:#D4D4D4"> </span><span style="color:#C586C0">in</span><span style="color:#D4D4D4"> </span><span style="color:#4EC9B0">np</span><span style="color:#D4D4D4">.arange</span><span style="color:#e6c646">(</span><span style="color:#B5CEA8">0</span><span style="color:#D4D4D4">, </span><span style="color:#9CDCFE">detections</span><span style="color:#D4D4D4">.shape</span><span style="color:#cb70c9">[</span><span style="color:#B5CEA8">2</span><span style="color:#cb70c9">]</span><span style="color:#e6c646">)</span><span style="color:#D4D4D4">:</span></div>
<div class="cl hint" style="top:244.80px">          ⌘ L to select code, ⌘ I to edit</div>
<div class="r" style="left:354px;top:62px;width:1045px;height:18.8px;background:#1f1f1f;"></div>
<div class="r" style="left:354px;top:80.4px;width:1045px;height:1.8px;background:#0f0f0f;box-shadow:0 0.5px 1px #151515"></div>
<div class="ln" style="top:63.9px;left:353.6px">76</div>
<div class="cl" style="top:63.9px"><span style="color:#569CD6">def</span> <span style="color:#DCDCAA">people_counter</span><span style="color:#e6c646">()</span>:</div>
<svg style="left:0;top:0" width="1536" height="885" viewBox="0 0 1536 885"><rect x="1403" y="297" width="118.5" height="11.5" fill="#264f78" opacity="0.65"/><g opacity="0.45"><rect x="1407.16" y="63.20" width="2.08" height="1.1" fill="#9CDCFE"/><rect x="1409.24" y="63.20" width="1.04" height="1.1" fill="#B5CEA8"/><rect x="1410.28" y="63.20" width="12.48" height="1.1" fill="#DCDCAA"/><rect x="1422.76" y="63.20" width="1.04" height="1.1" fill="#FFD700"/><rect x="1423.80" y="63.20" width="4.16" height="1.1" fill="#CE9178"/><rect x="1427.96" y="63.20" width="1.04" height="1.1" fill="#D4D4D4"/><rect x="1430.04" y="63.20" width="9.36" height="1.1" fill="#CE9178"/><rect x="1439.40" y="63.20" width="1.04" height="1.1" fill="#D4D4D4"/><rect x="1441.48" y="63.20" width="4.16" height="1.1" fill="#9CDCFE"/><rect x="1445.64" y="63.20" width="1.04" height="1.1" fill="#D4D4D4"/><rect x="1446.68" y="63.20" width="3.12" height="1.1" fill="#9CDCFE"/><rect x="1449.80" y="63.20" width="1.04" height="1.1" fill="#D4D4D4"/><rect x="1411.32" y="65.23" width="4.16" height="1.1" fill="#9CDCFE"/><rect x="1415.48" y="65.23" width="1.04" height="1.1" fill="#D4D4D4"/><rect x="1416.52" y="65.23" width="36.40" height="1.1" fill="#CE9178"/><rect x="1452.92" y="65.23" width="1.04" height="1.1" fill="#FFD700"/><rect x="1407.16" y="67.26" width="2.08" height="1.1" fill="#9CDCFE"/><rect x="1409.24" y="67.26" width="1.04" height="1.1" fill="#B5CEA8"/><rect x="1410.28" y="67.26" width="12.48" height="1.1" fill="#DCDCAA"/><rect x="1422.76" y="67.26" width="1.04" height="1.1" fill="#FFD700"/><rect x="1423.80" y="67.26" width="4.16" height="1.1" fill="#CE9178"/><rect x="1427.96" y="67.26" width="1.04" height="1.1" fill="#D4D4D4"/><rect x="1430.04" y="67.26" width="10.40" height="1.1" fill="#CE9178"/><rect x="1440.44" y="67.26" width="1.04" height="1.1" fill="#D4D4D4"/><rect x="1442.52" y="67.26" width="4.16" height="1.1" fill="#9CDCFE"/><rect x="1446.68" y="67.26" width="1.04" height="1.1" fill="#D4D4D4"/><rect x="1447.72" y="67.26" width="3.12" height="1.1" fill="#9CDCFE"/><rect x="1450.84" y="67.26" width="1.04" height="1.1" fill="#D4D4D4"/><rect x="1411.32" y="69.29" width="4.16" height="1.1" fill="#9CDCFE"/><rect x="1415.48" y="69.29" width="1.04" height="1.1" fill="#D4D4D4"/><rect x="1416.52" y="69.29" width="37.44" height="1.1" fill="#CE9178"/><rect x="1453.96" y="69.29" width="1.04" height="1.1" fill="#FFD700"/><rect x="1407.16" y="71.32" width="2.08" height="1.1" fill="#9CDCFE"/><rect x="1409.24" y="71.32" width="1.04" height="1.1" fill="#B5CEA8"/><rect x="1410.28" y="71.32" width="12.48" height="1.1" fill="#DCDCAA"/><rect x="1422.76" y="71.32" width="1.04" height="1.1" fill="#FFD700"/><rect x="1423.80" y="71.32" width="4.16" height="1.1" fill="#CE9178"/><rect x="1427.96" y="71.32" width="1.04" height="1.1" fill="#D4D4D4"/><rect x="1430.04" y="71.32" width="10.40" height="1.1" fill="#CE9178"/><rect x="1440.44" y="71.32" width="1.04" height="1.1" fill="#D4D4D4"/><rect x="1442.52" y="71.32" width="4.16" height="1.1" fill="#9CDCFE"/><rect x="1446.68" y="71.32" width="1.04" height="1.1" fill="#D4D4D4"/><rect x="1447.72" y="71.32" width="3.12" height="1.1" fill="#9CDCFE"/><rect x="1450.84" y="71.32" width="1.04" height="1.1" fill="#D4D4D4"/><rect x="1411.32" y="73.35" width="4.16" height="1.1" fill="#9CDCFE"/><rect x="1415.48" y="73.35" width="1.04" height="1.1" fill="#D4D4D4"/><rect x="1416.52" y="73.35" width="37.44" height="1.1" fill="#CE9178"/><rect x="1453.96" y="73.35" width="1.04" height="1.1" fill="#FFD700"/><rect x="1407.16" y="75.38" width="24.96" height="1.1" fill="#6A9955"/><rect x="1407.16" y="77.41" width="2.08" height="1.1" fill="#9CDCFE"/><rect x="1409.24" y="77.41" width="1.04" height="1.1" fill="#B5CEA8"/><rect x="1410.28" y="77.41" width="12.48" height="1.1" fill="#DCDCAA"/><rect x="1422.76" y="77.41" width="1.04" height="1.1" fill="#FFD700"/><rect x="1423.80" y="77.41" width="4.16" height="1.1" fill="#CE9178"/><rect x="1427.96" y="77.41" width="1.04" height="1.1" fill="#D4D4D4"/><rect x="1430.04" y="77.41" width="14.56" height="1.1" fill="#CE9178"/><rect x="1444.60" y="77.41" width="1.04" height="1.1" fill="#D4D4D4"/><rect x="1446.68" y="77.41" width="4.16" height="1.1" fill="#9CDCFE"/><rect x="1450.84" y="77.41" width="1.04" height="1.1" fill="#D4D4D4"/><rect x="1451.88" y="77.41" width="5.20" height="1.1" fill="#9CDCFE"/><rect x="1457.08" y="77.41" width="1.04" height="1.1" fill="#D4D4D4"/><rect x="1459.16" y="77.41" width="7.28" height="1.1" fill="#9CDCFE"/><rect x="1466.44" y="77.41" width="1.04" height="1.1" fill="#D4D4D4"/><rect x="1467.48" y="77.41" width="3.12" height="1.1" fill="#B5CEA8"/><rect x="1470.60" y="77.41" width="1.04" height="1.1" fill="#D4D4D4"/><rect x="1411.32" y="79.44" width="4.16" height="1.1" fill="#9CDCFE"/><rect x="1415.48" y="79.44" width="1.04" height="1.1" fill="#D4D4D4"/><rect x="1416.52" y="79.44" width="48.88" height="1.1" fill="#CE9178"/><rect x="1465.40" y="79.44" width="1.04" height="1.1" fill="#FFD700"/><rect x="1407.16" y="81.47" width="2.08" height="1.1" fill="#9CDCFE"/><rect x="1409.24" y="81.47" width="1.04" height="1.1" fill="#B5CEA8"/><rect x="1410.28" y="81.47" width="12.48" height="1.1" fill="#DCDCAA"/><rect x="1422.76" y="81.47" width="1.04" height="1.1" fill="#FFD700"/><rect x="1423.80" y="81.47" width="4.16" height="1.1" fill="#CE9178"/><rect x="1427.96" y="81.47" width="1.04" height="1.1" fill="#D4D4D4"/><rect x="1430.04" y="81.47" width="15.60" height="1.1" fill="#CE9178"/><rect x="1445.64" y="81.47" width="1.04" height="1.1" fill="#D4D4D4"/><rect x="1447.72" y="81.47" width="4.16" height="1.1" fill="#9CDCFE"/><rect x="1451.88" y="81.47" width="1.04" height="1.1" fill="#D4D4D4"/><rect x="1452.92" y="81.47" width="3.12" height="1.1" fill="#9CDCFE"/><rect x="1456.04" y="81.47" width="1.04" height="1.1" fill="#D4D4D4"/><rect x="1458.12" y="81.47" width="7.28" height="1.1" fill="#9CDCFE"/><rect x="1465.40" y="81.47" width="1.04" height="1.1" fill="#D4D4D4"/><rect x="1466.44" y="81.47" width="2.08" height="1.1" fill="#B5CEA8"/><rect x="1468.52" y="81.47" width="1.04" height="1.1" fill="#D4D4D4"/><rect x="1411.32" y="83.50" width="4.16" height="1.1" fill="#9CDCFE"/><rect x="1415.48" y="83.50" width="1.04" height="1.1" fill="#D4D4D4"/><rect x="1416.52" y="83.50" width="38.48" height="1.1" fill="#CE9178"/><rect x="1455.00" y="83.50" width="1.04" height="1.1" fill="#FFD700"/><rect x="1407.16" y="85.53" width="4.16" height="1.1" fill="#9CDCFE"/><rect x="1412.36" y="85.53" width="1.04" height="1.1" fill="#D4D4D4"/><rect x="1414.44" y="85.53" width="4.16" height="1.1" fill="#DCDCAA"/><rect x="1418.60" y="85.53" width="1.04" height="1.1" fill="#FFD700"/><rect x="1419.64" y="85.53" width="2.08" height="1.1" fill="#9CDCFE"/><rect x="1421.72" y="85.53" width="1.04" height="1.1" fill="#B5CEA8"/><rect x="1422.76" y="85.53" width="10.40" height="1.1" fill="#DCDCAA"/><rect x="1433.16" y="85.53" width="1.04" height="1.1" fill="#FFD700"/><rect x="1434.20" y="85.53" width="1.04" height="1.1" fill="#FFD700"/><rect x="1435.24" y="85.53" width="1.04" height="1.1" fill="#FFD700"/><rect x="1407.16" y="87.56" width="6.24" height="1.1" fill="#C586C0"/><rect x="1414.44" y="87.56" width="4.16" height="1.1" fill="#9CDCFE"/><rect x="1403.00" y="91.62" width="3.12" height="1.1" fill="#569CD6"/><rect x="1407.16" y="91.62" width="9.36" height="1.1" fill="#DCDCAA"/><rect x="1416.52" y="91.62" width="1.04" height="1.1" fill="#FFD700"/><rect x="1417.56" y="91.62" width="1.04" height="1.1" fill="#FFD700"/><rect x="1418.60" y="91.62" width="1.04" height="1.1" fill="#D4D4D4"/><rect x="1407.16" y="93.65" width="36.40" height="1.1" fill="#6A9955"/><rect x="1407.16" y="95.68" width="6.24" height="1.1" fill="#4EC9B0"/><rect x="1413.40" y="95.68" width="1.04" height="1.1" fill="#FFD700"/><rect x="1414.44" y="95.68" width="1.04" height="1.1" fill="#FFD700"/><rect x="1415.48" y="95.68" width="1.04" height="1.1" fill="#B5CEA8"/><rect x="1416.52" y="95.68" width="4.16" height="1.1" fill="#DCDCAA"/><rect x="1420.68" y="95.68" width="1.04" height="1.1" fill="#FFD700"/><rect x="1421.72" y="95.68" width="6.24" height="1.1" fill="#9CDCFE"/><rect x="1427.96" y="95.68" width="1.04" height="1.1" fill="#FFD700"/><rect x="1429.00" y="95.68" width="15.60" height="1.1" fill="#CE9178"/><rect x="1444.60" y="95.68" width="1.04" height="1.1" fill="#FFD700"/><rect x="1445.64" y="95.68" width="1.04" height="1.1" fill="#FFD700"/><rect x="1403.00" y="99.74" width="3.12" height="1.1" fill="#569CD6"/><rect x="1407.16" y="99.74" width="8.32" height="1.1" fill="#DCDCAA"/><rect x="1415.48" y="99.74" width="1.04" height="1.1" fill="#FFD700"/><rect x="1416.52" y="99.74" width="7.28" height="1.1" fill="#9CDCFE"/><rect x="1423.80" y="99.74" width="1.04" height="1.1" fill="#D4D4D4"/><rect x="1425.88" y="99.74" width="7.28" height="1.1" fill="#9CDCFE"/><rect x="1433.16" y="99.74" width="1.04" height="1.1" fill="#D4D4D4"/><rect x="1435.24" y="99.74" width="8.32" height="1.1" fill="#9CDCFE"/><rect x="1443.56" y="99.74" width="1.04" height="1.1" fill="#D4D4D4"/><rect x="1445.64" y="99.74" width="8.32" height="1.1" fill="#9CDCFE"/><rect x="1453.96" y="99.74" width="1.04" height="1.1" fill="#FFD700"/><rect x="1455.00" y="99.74" width="1.04" height="1.1" fill="#D4D4D4"/><rect x="1407.16" y="101.77" width="36.40" height="1.1" fill="#6A9955"/><rect x="1407.16" y="103.80" width="4.16" height="1.1" fill="#9CDCFE"/><rect x="1412.36" y="103.80" width="1.04" height="1.1" fill="#D4D4D4"/><rect x="1414.44" y="103.80" width="1.04" height="1.1" fill="#FFD700"/><rect x="1415.48" y="103.80" width="7.28" height="1.1" fill="#9CDCFE"/><rect x="1422.76" y="103.80" width="1.04" height="1.1" fill="#D4D4D4"/><rect x="1424.84" y="103.80" width="7.28" height="1.1" fill="#9CDCFE"/><rect x="1432.12" y="103.80" width="1.04" height="1.1" fill="#D4D4D4"/><rect x="1434.20" y="103.80" width="8.32" height="1.1" fill="#9CDCFE"/><rect x="1442.52" y="103.80" width="1.04" height="1.1" fill="#D4D4D4"/><rect x="1444.60" y="103.80" width="8.32" height="1.1" fill="#9CDCFE"/><rect x="1452.92" y="103.80" width="1.04" height="1.1" fill="#FFD700"/><rect x="1407.16" y="105.83" width="52.00" height="1.1" fill="#6A9955"/><rect x="1407.16" y="107.86" width="11.44" height="1.1" fill="#9CDCFE"/><rect x="1419.64" y="107.86" width="1.04" height="1.1" fill="#D4D4D4"/><rect x="1421.72" y="107.86" width="11.44" height="1.1" fill="#DCDCAA"/><rect x="1433.16" y="107.86" width="1.04" height="1.1" fill="#FFD700"/><rect x="1434.20" y="107.86" width="1.04" height="1.1" fill="#D4D4D4"/><rect x="1435.24" y="107.86" width="4.16" height="1.1" fill="#9CDCFE"/><rect x="1439.40" y="107.86" width="1.04" height="1.1" fill="#D4D4D4"/><rect x="1441.48" y="107.86" width="9.36" height="1.1" fill="#9CDCFE"/><rect x="1451.88" y="107.86" width="1.04" height="1.1" fill="#D4D4D4"/><rect x="1453.96" y="107.86" width="2.08" height="1.1" fill="#CE9178"/><rect x="1456.04" y="107.86" width="1.04" height="1.1" fill="#FFD700"/><rect x="1407.16" y="111.92" width="4.16" height="1.1" fill="#C586C0"/><rect x="1412.36" y="111.92" width="4.16" height="1.1" fill="#DCDCAA"/><rect x="1416.52" y="111.92" width="1.04" height="1.1" fill="#FFD700"/><rect x="1417.56" y="111.92" width="36.40" height="1.1" fill="#CE9178"/><rect x="1453.96" y="111.92" width="1.04" height="1.1" fill="#D4D4D4"/><rect x="1456.04" y="111.92" width="3.12" height="1.1" fill="#CE9178"/><rect x="1459.16" y="111.92" width="1.04" height="1.1" fill="#D4D4D4"/><rect x="1461.24" y="111.92" width="7.28" height="1.1" fill="#9CDCFE"/><rect x="1469.56" y="111.92" width="1.04" height="1.1" fill="#D4D4D4"/><rect x="1471.64" y="111.92" width="2.08" height="1.1" fill="#CE9178"/><rect x="1473.72" y="111.92" width="1.04" height="1.1" fill="#FFD700"/><rect x="1475.80" y="111.92" width="2.08" height="1.1" fill="#C586C0"/><rect x="1478.92" y="111.92" width="6.24" height="1.1" fill="#9CDCFE"/><rect x="1485.16" y="111.92" width="1.04" height="1.1" fill="#D4D4D4"/><rect x="1411.32" y="113.95" width="2.08" height="1.1" fill="#9CDCFE"/><rect x="1414.44" y="113.95" width="1.04" height="1.1" fill="#D4D4D4"/><rect x="1416.52" y="113.95" width="3.12" height="1.1" fill="#4EC9B0"/><rect x="1419.64" y="113.95" width="1.04" height="1.1" fill="#B5CEA8"/><rect x="1420.68" y="113.95" width="6.24" height="1.1" fill="#DCDCAA"/><rect x="1426.92" y="113.95" width="1.04" height="1.1" fill="#FFD700"/><rect x="1427.96" y="113.95" width="6.24" height="1.1" fill="#9CDCFE"/><rect x="1434.20" y="113.95" width="1.04" height="1.1" fill="#D4D4D4"/><rect x="1436.28" y="113.95" width="7.28" height="1.1" fill="#9CDCFE"/><rect x="1444.60" y="113.95" width="1.04" height="1.1" fill="#D4D4D4"/><rect x="1446.68" y="113.95" width="3.12" height="1.1" fill="#4EC9B0"/><rect x="1449.80" y="113.95" width="1.04" height="1.1" fill="#B5CEA8"/><rect x="1450.84" y="113.95" width="9.36" height="1.1" fill="#4FC1FF"/><rect x="1460.20" y="113.95" width="1.04" height="1.1" fill="#FFD700"/><rect x="1411.32" y="115.98" width="2.08" height="1.1" fill="#C586C0"/><rect x="1414.44" y="115.98" width="6.24" height="1.1" fill="#9CDCFE"/><rect x="1420.68" y="115.98" width="1.04" height="1.1" fill="#B5CEA8"/><rect x="1421.72" y="115.98" width="4.16" height="1.1" fill="#DCDCAA"/><rect x="1425.88" y="115.98" width="1.04" height="1.1" fill="#FFD700"/><rect x="1426.92" y="115.98" width="1.04" height="1.1" fill="#FFD700"/><rect x="1429.00" y="115.98" width="1.04" height="1.1" fill="#D4D4D4"/><rect x="1430.04" y="115.98" width="1.04" height="1.1" fill="#D4D4D4"/><rect x="1432.12" y="115.98" width="1.04" height="1.1" fill="#B5CEA8"/><rect x="1433.16" y="115.98" width="1.04" height="1.1" fill="#D4D4D4"/><rect x="1435.24" y="115.98" width="44.72" height="1.1" fill="#6A9955"/><rect x="1415.48" y="118.01" width="2.08" height="1.1" fill="#9CDCFE"/><rect x="1417.56" y="118.01" width="1.04" height="1.1" fill="#B5CEA8"/><rect x="1418.60" y="118.01" width="8.32" height="1.1" fill="#DCDCAA"/><rect x="1426.92" y="118.01" width="1.04" height="1.1" fill="#FFD700"/><rect x="1427.96" y="118.01" width="1.04" height="1.1" fill="#FFD700"/><rect x="1429.00" y="118.01" width="9.36" height="1.1" fill="#CE9178"/><rect x="1438.36" y="118.01" width="1.04" height="1.1" fill="#D4D4D4"/><rect x="1440.44" y="118.01" width="9.36" height="1.1" fill="#CE9178"/><rect x="1449.80" y="118.01" width="1.04" height="1.1" fill="#D4D4D4"/><rect x="1451.88" y="118.01" width="10.40" height="1.1" fill="#CE9178"/><rect x="1462.28" y="118.01" width="1.04" height="1.1" fill="#D4D4D4"/><rect x="1464.36" y="118.01" width="10.40" height="1.1" fill="#CE9178"/><rect x="1474.76" y="118.01" width="1.04" height="1.1" fill="#FFD700"/><rect x="1475.80" y="118.01" width="1.04" height="1.1" fill="#FFD700"/><rect x="1415.48" y="120.04" width="2.08" height="1.1" fill="#9CDCFE"/><rect x="1417.56" y="120.04" width="1.04" height="1.1" fill="#B5CEA8"/><rect x="1418.60" y="120.04" width="9.36" height="1.1" fill="#DCDCAA"/><rect x="1427.96" y="120.04" width="1.04" height="1.1" fill="#FFD700"/><rect x="1429.00" y="120.04" width="11.44" height="1.1" fill="#9CDCFE"/><rect x="1440.44" y="120.04" width="1.04" height="1.1" fill="#FFD700"/><rect x="1403.00" y="124.10" width="3.12" height="1.1" fill="#569CD6"/><rect x="1407.16" y="124.10" width="14.56" height="1.1" fill="#DCDCAA"/><rect x="1421.72" y="124.10" width="1.04" height="1.1" fill="#FFD700"/><rect x="1422.76" y="124.10" width="1.04" height="1.1" fill="#FFD700"/><rect x="1423.80" y="124.10" width="1.04" height="1.1" fill="#D4D4D4"/><rect x="1407.16" y="126.13" width="38.48" height="1.1" fill="#6A9955"/><rect x="1407.16" y="128.16" width="4.16" height="1.1" fill="#9CDCFE"/><rect x="1412.36" y="128.16" width="1.04" height="1.1" fill="#D4D4D4"/><rect x="1414.44" y="128.16" width="15.60" height="1.1" fill="#DCDCAA"/><rect x="1430.04" y="128.16" width="1.04" height="1.1" fill="#FFD700"/><rect x="1431.08" y="128.16" width="1.04" height="1.1" fill="#FFD700"/><rect x="1407.16" y="130.19" width="75.92" height="1.1" fill="#6A9955"/><rect x="1407.16" y="132.22" width="7.28" height="1.1" fill="#4FC1FF"/><rect x="1415.48" y="132.22" width="1.04" height="1.1" fill="#D4D4D4"/><rect x="1417.56" y="132.22" width="1.04" height="1.1" fill="#FFD700"/><rect x="1418.60" y="132.22" width="12.48" height="1.1" fill="#CE9178"/><rect x="1431.08" y="132.22" width="1.04" height="1.1" fill="#D4D4D4"/><rect x="1433.16" y="132.22" width="11.44" height="1.1" fill="#CE9178"/><rect x="1444.60" y="132.22" width="1.04" height="1.1" fill="#D4D4D4"/><rect x="1446.68" y="132.22" width="9.36" height="1.1" fill="#CE9178"/><rect x="1456.04" y="132.22" width="1.04" height="1.1" fill="#D4D4D4"/><rect x="1458.12" y="132.22" width="6.24" height="1.1" fill="#CE9178"/><rect x="1464.36" y="132.22" width="1.04" height="1.1" fill="#D4D4D4"/><rect x="1466.44" y="132.22" width="6.24" height="1.1" fill="#CE9178"/><rect x="1472.68" y="132.22" width="1.04" height="1.1" fill="#D4D4D4"/><rect x="1411.32" y="134.25" width="8.32" height="1.1" fill="#CE9178"/><rect x="1419.64" y="134.25" width="1.04" height="1.1" fill="#D4D4D4"/><rect x="1421.72" y="134.25" width="5.20" height="1.1" fill="#CE9178"/><rect x="1426.92" y="134.25" width="1.04" height="1.1" fill="#D4D4D4"/><rect x="1429.00" y="134.25" width="5.20" height="1.1" fill="#CE9178"/><rect x="1434.20" y="134.25" width="1.04" height="1.1" fill="#D4D4D4"/><rect x="1436.28" y="134.25" width="5.20" height="1.1" fill="#CE9178"/><rect x="1441.48" y="134.25" width="1.04" height="1.1" fill="#D4D4D4"/><rect x="1443.56" y="134.25" width="7.28" height="1.1" fill="#CE9178"/><rect x="1450.84" y="134.25" width="1.04" height="1.1" fill="#D4D4D4"/><rect x="1452.92" y="134.25" width="5.20" height="1.1" fill="#CE9178"/><rect x="1458.12" y="134.25" width="1.04" height="1.1" fill="#D4D4D4"/><rect x="1460.20" y="134.25" width="13.52" height="1.1" fill="#CE9178"/><rect x="1473.72" y="134.25" width="1.04" height="1.1" fill="#D4D4D4"/><rect x="1411.32" y="136.28" width="5.20" height="1.1" fill="#CE9178"/><rect x="1416.52" y="136.28" width="1.04" height="1.1" fill="#D4D4D4"/><rect x="1418.60" y="136.28" width="7.28" height="1.1" fill="#CE9178"/><rect x="1425.88" y="136.28" width="1.04" height="1.1" fill="#D4D4D4"/><rect x="1427.96" y="136.28" width="11.44" height="1.1" fill="#CE9178"/><rect x="1439.40" y="136.28" width="1.04" height="1.1" fill="#D4D4D4"/><rect x="1441.48" y="136.28" width="8.32" height="1.1" fill="#CE9178"/><rect x="1449.80" y="136.28" width="1.04" height="1.1" fill="#D4D4D4"/><rect x="1451.88" y="136.28" width="13.52" height="1.1" fill="#CE9178"/><rect x="1465.40" y="136.28" width="1.04" height="1.1" fill="#D4D4D4"/><rect x="1467.48" y="136.28" width="7.28" height="1.1" fill="#CE9178"/><rect x="1474.76" y="136.28" width="1.04" height="1.1" fill="#D4D4D4"/><rect x="1411.32" y="138.31" width="6.24" height="1.1" fill="#CE9178"/><rect x="1417.56" y="138.31" width="1.04" height="1.1" fill="#D4D4D4"/><rect x="1419.64" y="138.31" width="7.28" height="1.1" fill="#CE9178"/><rect x="1426.92" y="138.31" width="1.04" height="1.1" fill="#D4D4D4"/><rect x="1429.00" y="138.31" width="11.44" height="1.1" fill="#CE9178"/><rect x="1440.44" y="138.31" width="1.04" height="1.1" fill="#FFD700"/><rect x="1407.16" y="142.37" width="38.48" height="1.1" fill="#6A9955"/><rect x="1407.16" y="144.40" width="3.12" height="1.1" fill="#9CDCFE"/><rect x="1411.32" y="144.40" width="1.04" height="1.1" fill="#D4D4D4"/><rect x="1413.40" y="144.40" width="3.12" height="1.1" fill="#4EC9B0"/><rect x="1416.52" y="144.40" width="1.04" height="1.1" fill="#B5CEA8"/><rect x="1417.56" y="144.40" width="3.12" height="1.1" fill="#9CDCFE"/><rect x="1420.68" y="144.40" width="1.04" height="1.1" fill="#B5CEA8"/><rect x="1421.72" y="144.40" width="16.64" height="1.1" fill="#DCDCAA"/><rect x="1438.36" y="144.40" width="1.04" height="1.1" fill="#FFD700"/><rect x="1439.40" y="144.40" width="4.16" height="1.1" fill="#9CDCFE"/><rect x="1443.56" y="144.40" width="1.04" height="1.1" fill="#FFD700"/><rect x="1444.60" y="144.40" width="10.40" height="1.1" fill="#CE9178"/><rect x="1455.00" y="144.40" width="1.04" height="1.1" fill="#FFD700"/><rect x="1456.04" y="144.40" width="1.04" height="1.1" fill="#D4D4D4"/><rect x="1458.12" y="144.40" width="4.16" height="1.1" fill="#9CDCFE"/><rect x="1462.28" y="144.40" width="1.04" height="1.1" fill="#FFD700"/><rect x="1463.32" y="144.40" width="7.28" height="1.1" fill="#CE9178"/><rect x="1470.60" y="144.40" width="1.04" height="1.1" fill="#FFD700"/><rect x="1471.64" y="144.40" width="1.04" height="1.1" fill="#FFD700"/><rect x="1407.16" y="148.46" width="71.76" height="1.1" fill="#6A9955"/><rect x="1407.16" y="150.49" width="2.08" height="1.1" fill="#C586C0"/><rect x="1410.28" y="150.49" width="3.12" height="1.1" fill="#569CD6"/><rect x="1414.44" y="150.49" width="4.16" height="1.1" fill="#9CDCFE"/><rect x="1418.60" y="150.49" width="1.04" height="1.1" fill="#B5CEA8"/><rect x="1419.64" y="150.49" width="3.12" height="1.1" fill="#DCDCAA"/><rect x="1422.76" y="150.49" width="1.04" height="1.1" fill="#FFD700"/><rect x="1423.80" y="150.49" width="7.28" height="1.1" fill="#CE9178"/><rect x="1431.08" y="150.49" width="1.04" height="1.1" fill="#D4D4D4"/><rect x="1433.16" y="150.49" width="5.20" height="1.1" fill="#569CD6"/><rect x="1438.36" y="150.49" width="1.04" height="1.1" fill="#FFD700"/><rect x="1439.40" y="150.49" width="1.04" height="1.1" fill="#D4D4D4"/><rect x="1411.32" y="152.52" width="6.24" height="1.1" fill="#9CDCFE"/><rect x="1417.56" y="152.52" width="1.04" height="1.1" fill="#B5CEA8"/><rect x="1418.60" y="152.52" width="4.16" height="1.1" fill="#DCDCAA"/><rect x="1422.76" y="152.52" width="1.04" height="1.1" fill="#FFD700"/><rect x="1423.80" y="152.52" width="29.12" height="1.1" fill="#CE9178"/><rect x="1452.92" y="152.52" width="1.04" height="1.1" fill="#FFD700"/><rect x="1411.32" y="154.55" width="2.08" height="1.1" fill="#9CDCFE"/><rect x="1414.44" y="154.55" width="1.04" height="1.1" fill="#D4D4D4"/><rect x="1416.52" y="154.55" width="11.44" height="1.1" fill="#4EC9B0"/><rect x="1427.96" y="154.55" width="1.04" height="1.1" fill="#FFD700"/><rect x="1429.00" y="154.55" width="6.24" height="1.1" fill="#9CDCFE"/><rect x="1435.24" y="154.55" width="1.04" height="1.1" fill="#FFD700"/><rect x="1436.28" y="154.55" width="5.20" height="1.1" fill="#CE9178"/><rect x="1441.48" y="154.55" width="1.04" height="1.1" fill="#FFD700"/><rect x="1442.52" y="154.55" width="1.04" height="1.1" fill="#FFD700"/><rect x="1443.56" y="154.55" width="1.04" height="1.1" fill="#B5CEA8"/><rect x="1444.60" y="154.55" width="5.20" height="1.1" fill="#DCDCAA"/><rect x="1449.80" y="154.55" width="1.04" height="1.1" fill="#FFD700"/><rect x="1450.84" y="154.55" width="1.04" height="1.1" fill="#FFD700"/><rect x="1411.32" y="156.58" width="4.16" height="1.1" fill="#4EC9B0"/><rect x="1415.48" y="156.58" width="1.04" height="1.1" fill="#B5CEA8"/><rect x="1416.52" y="156.58" width="5.20" height="1.1" fill="#DCDCAA"/><rect x="1421.72" y="156.58" width="1.04" height="1.1" fill="#FFD700"/><rect x="1422.76" y="156.58" width="3.12" height="1.1" fill="#B5CEA8"/><rect x="1425.88" y="156.58" width="1.04" height="1.1" fill="#FFD700"/><rect x="1407.16" y="160.64" width="48.88" height="1.1" fill="#6A9955"/><rect x="1407.16" y="162.67" width="4.16" height="1.1" fill="#C586C0"/><rect x="1411.32" y="162.67" width="1.04" height="1.1" fill="#D4D4D4"/><rect x="1411.32" y="164.70" width="6.24" height="1.1" fill="#9CDCFE"/><rect x="1417.56" y="164.70" width="1.04" height="1.1" fill="#B5CEA8"/><rect x="1418.60" y="164.70" width="4.16" height="1.1" fill="#DCDCAA"/><rect x="1422.76" y="164.70" width="1.04" height="1.1" fill="#FFD700"/><rect x="1423.80" y="164.70" width="22.88" height="1.1" fill="#CE9178"/><rect x="1446.68" y="164.70" width="1.04" height="1.1" fill="#FFD700"/><rect x="1411.32" y="166.73" width="2.08" height="1.1" fill="#9CDCFE"/><rect x="1414.44" y="166.73" width="1.04" height="1.1" fill="#D4D4D4"/><rect x="1416.52" y="166.73" width="3.12" height="1.1" fill="#4EC9B0"/><rect x="1419.64" y="166.73" width="1.04" height="1.1" fill="#B5CEA8"/><rect x="1420.68" y="166.73" width="12.48" height="1.1" fill="#DCDCAA"/><rect x="1433.16" y="166.73" width="1.04" height="1.1" fill="#FFD700"/><rect x="1434.20" y="166.73" width="4.16" height="1.1" fill="#9CDCFE"/><rect x="1438.36" y="166.73" width="1.04" height="1.1" fill="#FFD700"/><rect x="1439.40" y="166.73" width="7.28" height="1.1" fill="#CE9178"/><rect x="1446.68" y="166.73" width="1.04" height="1.1" fill="#FFD700"/><rect x="1447.72" y="166.73" width="1.04" height="1.1" fill="#FFD700"/><rect x="1407.16" y="170.79" width="68.64" height="1.1" fill="#6A9955"/><rect x="1407.16" y="172.82" width="6.24" height="1.1" fill="#9CDCFE"/><rect x="1414.44" y="172.82" width="1.04" height="1.1" fill="#D4D4D4"/><rect x="1416.52" y="172.82" width="4.16" height="1.1" fill="#569CD6"/><rect x="1407.16" y="176.88" width="70.72" height="1.1" fill="#6A9955"/><rect x="1407.16" y="178.91" width="34.32" height="1.1" fill="#6A9955"/><rect x="1407.16" y="180.94" width="1.04" height="1.1" fill="#4FC1FF"/><rect x="1409.24" y="180.94" width="1.04" height="1.1" fill="#D4D4D4"/><rect x="1411.32" y="180.94" width="4.16" height="1.1" fill="#569CD6"/><rect x="1407.16" y="182.97" width="1.04" height="1.1" fill="#4FC1FF"/><rect x="1409.24" y="182.97" width="1.04" height="1.1" fill="#D4D4D4"/><rect x="1411.32" y="182.97" width="4.16" height="1.1" fill="#569CD6"/><rect x="1407.16" y="187.03" width="69.68" height="1.1" fill="#6A9955"/><rect x="1407.16" y="189.06" width="70.72" height="1.1" fill="#6A9955"/><rect x="1407.16" y="191.09" width="49.92" height="1.1" fill="#6A9955"/><rect x="1407.16" y="193.12" width="2.08" height="1.1" fill="#9CDCFE"/><rect x="1410.28" y="193.12" width="1.04" height="1.1" fill="#D4D4D4"/><rect x="1412.36" y="193.12" width="15.60" height="1.1" fill="#4EC9B0"/><rect x="1427.96" y="193.12" width="1.04" height="1.1" fill="#FFD700"/><rect x="1429.00" y="193.12" width="14.56" height="1.1" fill="#9CDCFE"/><rect x="1443.56" y="193.12" width="1.04" height="1.1" fill="#D4D4D4"/><rect x="1444.60" y="193.12" width="2.08" height="1.1" fill="#B5CEA8"/><rect x="1446.68" y="193.12" width="1.04" height="1.1" fill="#D4D4D4"/><rect x="1448.76" y="193.12" width="11.44" height="1.1" fill="#9CDCFE"/><rect x="1460.20" y="193.12" width="1.04" height="1.1" fill="#D4D4D4"/><rect x="1461.24" y="193.12" width="2.08" height="1.1" fill="#B5CEA8"/><rect x="1463.32" y="193.12" width="1.04" height="1.1" fill="#FFD700"/><rect x="1407.16" y="195.15" width="8.32" height="1.1" fill="#9CDCFE"/><rect x="1416.52" y="195.15" width="1.04" height="1.1" fill="#D4D4D4"/><rect x="1418.60" y="195.15" width="1.04" height="1.1" fill="#FFD700"/><rect x="1419.64" y="195.15" width="1.04" height="1.1" fill="#FFD700"/><rect x="1407.16" y="197.18" width="16.64" height="1.1" fill="#9CDCFE"/><rect x="1424.84" y="197.18" width="1.04" height="1.1" fill="#D4D4D4"/><rect x="1426.92" y="197.18" width="1.04" height="1.1" fill="#FFD700"/><rect x="1427.96" y="197.18" width="1.04" height="1.1" fill="#FFD700"/><rect x="1407.16" y="201.24" width="67.60" height="1.1" fill="#6A9955"/><rect x="1407.16" y="203.27" width="70.72" height="1.1" fill="#6A9955"/><rect x="1407.16" y="205.30" width="11.44" height="1.1" fill="#9CDCFE"/><rect x="1419.64" y="205.30" width="1.04" height="1.1" fill="#D4D4D4"/><rect x="1421.72" y="205.30" width="1.04" height="1.1" fill="#B5CEA8"/><rect x="1407.16" y="207.33" width="9.36" height="1.1" fill="#9CDCFE"/><rect x="1417.56" y="207.33" width="1.04" height="1.1" fill="#D4D4D4"/><rect x="1419.64" y="207.33" width="1.04" height="1.1" fill="#B5CEA8"/><rect x="1407.16" y="209.36" width="7.28" height="1.1" fill="#9CDCFE"/><rect x="1415.48" y="209.36" width="1.04" height="1.1" fill="#D4D4D4"/><rect x="1417.56" y="209.36" width="1.04" height="1.1" fill="#B5CEA8"/><rect x="1407.16" y="211.39" width="53.04" height="1.1" fill="#6A9955"/><rect x="1407.16" y="213.42" width="5.20" height="1.1" fill="#9CDCFE"/><rect x="1413.40" y="213.42" width="1.04" height="1.1" fill="#D4D4D4"/><rect x="1415.48" y="213.42" width="1.04" height="1.1" fill="#FFD700"/><rect x="1416.52" y="213.42" width="1.04" height="1.1" fill="#FFD700"/><rect x="1407.16" y="215.45" width="8.32" height="1.1" fill="#9CDCFE"/><rect x="1416.52" y="215.45" width="1.04" height="1.1" fill="#D4D4D4"/><rect x="1418.60" y="215.45" width="1.04" height="1.1" fill="#FFD700"/><rect x="1419.64" y="215.45" width="1.04" height="1.1" fill="#FFD700"/><rect x="1407.16" y="217.48" width="7.28" height="1.1" fill="#9CDCFE"/><rect x="1415.48" y="217.48" width="1.04" height="1.1" fill="#D4D4D4"/><rect x="1416.52" y="217.48" width="1.04" height="1.1" fill="#FFD700"/><rect x="1417.56" y="217.48" width="1.04" height="1.1" fill="#FFD700"/><rect x="1407.16" y="219.51" width="8.32" height="1.1" fill="#9CDCFE"/><rect x="1416.52" y="219.51" width="1.04" height="1.1" fill="#D4D4D4"/><rect x="1418.60" y="219.51" width="1.04" height="1.1" fill="#FFD700"/><rect x="1419.64" y="219.51" width="1.04" height="1.1" fill="#FFD700"/><rect x="1407.16" y="221.54" width="7.28" height="1.1" fill="#9CDCFE"/><rect x="1415.48" y="221.54" width="1.04" height="1.1" fill="#D4D4D4"/><rect x="1417.56" y="221.54" width="1.04" height="1.1" fill="#FFD700"/><rect x="1418.60" y="221.54" width="1.04" height="1.1" fill="#FFD700"/><rect x="1407.16" y="225.60" width="52.00" height="1.1" fill="#6A9955"/><rect x="1407.16" y="227.63" width="3.12" height="1.1" fill="#9CDCFE"/><rect x="1411.32" y="227.63" width="1.04" height="1.1" fill="#D4D4D4"/><rect x="1413.40" y="227.63" width="3.12" height="1.1" fill="#4EC9B0"/><rect x="1416.52" y="227.63" width="1.04" height="1.1" fill="#FFD700"/><rect x="1417.56" y="227.63" width="1.04" height="1.1" fill="#FFD700"/><rect x="1418.60" y="227.63" width="1.04" height="1.1" fill="#B5CEA8"/><rect x="1419.64" y="227.63" width="5.20" height="1.1" fill="#DCDCAA"/><rect x="1424.84" y="227.63" width="1.04" height="1.1" fill="#FFD700"/><rect x="1425.88" y="227.63" width="1.04" height="1.1" fill="#FFD700"/><rect x="1407.16" y="231.69" width="2.08" height="1.1" fill="#C586C0"/><rect x="1410.28" y="231.69" width="6.24" height="1.1" fill="#9CDCFE"/><rect x="1416.52" y="231.69" width="1.04" height="1.1" fill="#FFD700"/><rect x="1417.56" y="231.69" width="8.32" height="1.1" fill="#CE9178"/><rect x="1425.88" y="231.69" width="1.04" height="1.1" fill="#FFD700"/><rect x="1426.92" y="231.69" width="1.04" height="1.1" fill="#D4D4D4"/><rect x="1411.32" y="233.72" width="2.08" height="1.1" fill="#9CDCFE"/><rect x="1414.44" y="233.72" width="1.04" height="1.1" fill="#D4D4D4"/><rect x="1416.52" y="233.72" width="6.24" height="1.1" fill="#4EC9B0"/><rect x="1422.76" y="233.72" width="1.04" height="1.1" fill="#B5CEA8"/><rect x="1423.80" y="233.72" width="14.56" height="1.1" fill="#DCDCAA"/><rect x="1438.36" y="233.72" width="1.04" height="1.1" fill="#FFD700"/><rect x="1439.40" y="233.72" width="6.24" height="1.1" fill="#9CDCFE"/><rect x="1445.64" y="233.72" width="1.04" height="1.1" fill="#FFD700"/><rect x="1446.68" y="233.72" width="5.20" height="1.1" fill="#CE9178"/><rect x="1451.88" y="233.72" width="1.04" height="1.1" fill="#FFD700"/><rect x="1452.92" y="233.72" width="1.04" height="1.1" fill="#FFD700"/><rect x="1407.16" y="237.78" width="41.60" height="1.1" fill="#6A9955"/><rect x="1407.16" y="239.81" width="5.20" height="1.1" fill="#C586C0"/><rect x="1413.40" y="239.81" width="4.16" height="1.1" fill="#569CD6"/><rect x="1417.56" y="239.81" width="1.04" height="1.1" fill="#D4D4D4"/><rect x="1411.32" y="243.87" width="35.36" height="1.1" fill="#6A9955"/><rect x="1411.32" y="245.90" width="10.40" height="1.1" fill="#9CDCFE"/><rect x="1422.76" y="245.90" width="1.04" height="1.1" fill="#D4D4D4"/><rect x="1424.84" y="245.90" width="4.16" height="1.1" fill="#4EC9B0"/><rect x="1429.00" y="245.90" width="1.04" height="1.1" fill="#B5CEA8"/><rect x="1430.04" y="245.90" width="4.16" height="1.1" fill="#4EC9B0"/><rect x="1434.20" y="245.90" width="1.04" height="1.1" fill="#FFD700"/><rect x="1435.24" y="245.90" width="1.04" height="1.1" fill="#FFD700"/><rect x="1411.32" y="249.96" width="64.48" height="1.1" fill="#6A9955"/><rect x="1411.32" y="251.99" width="30.16" height="1.1" fill="#6A9955"/><rect x="1411.32" y="254.02" width="5.20" height="1.1" fill="#9CDCFE"/><rect x="1417.56" y="254.02" width="1.04" height="1.1" fill="#D4D4D4"/><rect x="1419.64" y="254.02" width="2.08" height="1.1" fill="#9CDCFE"/><rect x="1421.72" y="254.02" width="1.04" height="1.1" fill="#B5CEA8"/><rect x="1422.76" y="254.02" width="4.16" height="1.1" fill="#DCDCAA"/><rect x="1426.92" y="254.02" width="1.04" height="1.1" fill="#FFD700"/><rect x="1427.96" y="254.02" width="1.04" height="1.1" fill="#FFD700"/><rect x="1411.32" y="256.05" width="5.20" height="1.1" fill="#9CDCFE"/><rect x="1417.56" y="256.05" width="1.04" height="1.1" fill="#D4D4D4"/><rect x="1419.64" y="256.05" width="5.20" height="1.1" fill="#9CDCFE"/><rect x="1424.84" y="256.05" width="1.04" height="1.1" fill="#FFD700"/><rect x="1425.88" y="256.05" width="1.04" height="1.1" fill="#B5CEA8"/><rect x="1426.92" y="256.05" width="1.04" height="1.1" fill="#FFD700"/><rect x="1429.00" y="256.05" width="2.08" height="1.1" fill="#C586C0"/><rect x="1432.12" y="256.05" width="4.16" height="1.1" fill="#9CDCFE"/><rect x="1436.28" y="256.05" width="1.04" height="1.1" fill="#B5CEA8"/><rect x="1437.32" y="256.05" width="3.12" height="1.1" fill="#DCDCAA"/><rect x="1440.44" y="256.05" width="1.04" height="1.1" fill="#FFD700"/><rect x="1441.48" y="256.05" width="7.28" height="1.1" fill="#CE9178"/><rect x="1448.76" y="256.05" width="1.04" height="1.1" fill="#D4D4D4"/><rect x="1450.84" y="256.05" width="5.20" height="1.1" fill="#569CD6"/><rect x="1456.04" y="256.05" width="1.04" height="1.1" fill="#FFD700"/><rect x="1458.12" y="256.05" width="4.16" height="1.1" fill="#C586C0"/><rect x="1463.32" y="256.05" width="5.20" height="1.1" fill="#9CDCFE"/><rect x="1411.32" y="260.11" width="65.52" height="1.1" fill="#6A9955"/><rect x="1411.32" y="262.14" width="36.40" height="1.1" fill="#6A9955"/><rect x="1411.32" y="264.17" width="2.08" height="1.1" fill="#C586C0"/><rect x="1414.44" y="264.17" width="4.16" height="1.1" fill="#9CDCFE"/><rect x="1418.60" y="264.17" width="1.04" height="1.1" fill="#FFD700"/><rect x="1419.64" y="264.17" width="7.28" height="1.1" fill="#CE9178"/><rect x="1426.92" y="264.17" width="1.04" height="1.1" fill="#FFD700"/><rect x="1429.00" y="264.17" width="2.08" height="1.1" fill="#569CD6"/><rect x="1432.12" y="264.17" width="3.12" height="1.1" fill="#569CD6"/><rect x="1436.28" y="264.17" width="4.16" height="1.1" fill="#569CD6"/><rect x="1441.48" y="264.17" width="3.12" height="1.1" fill="#569CD6"/><rect x="1445.64" y="264.17" width="5.20" height="1.1" fill="#9CDCFE"/><rect x="1451.88" y="264.17" width="2.08" height="1.1" fill="#569CD6"/><rect x="1455.00" y="264.17" width="4.16" height="1.1" fill="#569CD6"/><rect x="1459.16" y="264.17" width="1.04" height="1.1" fill="#D4D4D4"/><rect x="1415.48" y="266.20" width="5.20" height="1.1" fill="#C586C0"/><rect x="1411.32" y="270.26" width="63.44" height="1.1" fill="#6A9955"/><rect x="1411.32" y="272.29" width="66.56" height="1.1" fill="#6A9955"/><rect x="1411.32" y="274.32" width="37.44" height="1.1" fill="#6A9955"/><rect x="1411.32" y="278.38" width="42.64" height="1.1" fill="#6A9955"/><rect x="1411.32" y="280.41" width="5.20" height="1.1" fill="#9CDCFE"/><rect x="1417.56" y="280.41" width="1.04" height="1.1" fill="#D4D4D4"/><rect x="1419.64" y="280.41" width="7.28" height="1.1" fill="#4EC9B0"/><rect x="1426.92" y="280.41" width="1.04" height="1.1" fill="#B5CEA8"/><rect x="1427.96" y="280.41" width="6.24" height="1.1" fill="#DCDCAA"/><rect x="1434.20" y="280.41" width="1.04" height="1.1" fill="#FFD700"/><rect x="1435.24" y="280.41" width="5.20" height="1.1" fill="#9CDCFE"/><rect x="1440.44" y="280.41" width="1.04" height="1.1" fill="#D4D4D4"/><rect x="1442.52" y="280.41" width="5.20" height="1.1" fill="#9CDCFE"/><rect x="1448.76" y="280.41" width="1.04" height="1.1" fill="#D4D4D4"/><rect x="1450.84" y="280.41" width="4.16" height="1.1" fill="#B5CEA8"/><rect x="1455.00" y="280.41" width="1.04" height="1.1" fill="#FFD700"/><rect x="1411.32" y="282.44" width="6.24" height="1.1" fill="#9CDCFE"/><rect x="1417.56" y="282.44" width="1.04" height="1.1" fill="#D4D4D4"/><rect x="1419.64" y="282.44" width="5.20" height="1.1" fill="#9CDCFE"/><rect x="1425.88" y="282.44" width="1.04" height="1.1" fill="#D4D4D4"/><rect x="1427.96" y="282.44" width="5.20" height="1.1" fill="#9CDCFE"/><rect x="1433.16" y="282.44" width="1.04" height="1.1" fill="#B5CEA8"/><rect x="1434.20" y="282.44" width="5.20" height="1.1" fill="#9CDCFE"/><rect x="1439.40" y="282.44" width="1.04" height="1.1" fill="#FFD700"/><rect x="1440.44" y="282.44" width="1.04" height="1.1" fill="#D4D4D4"/><rect x="1441.48" y="282.44" width="1.04" height="1.1" fill="#B5CEA8"/><rect x="1442.52" y="282.44" width="1.04" height="1.1" fill="#FFD700"/><rect x="1411.32" y="284.47" width="3.12" height="1.1" fill="#9CDCFE"/><rect x="1415.48" y="284.47" width="1.04" height="1.1" fill="#D4D4D4"/><rect x="1417.56" y="284.47" width="3.12" height="1.1" fill="#4EC9B0"/><rect x="1420.68" y="284.47" width="1.04" height="1.1" fill="#B5CEA8"/><rect x="1421.72" y="284.47" width="8.32" height="1.1" fill="#DCDCAA"/><rect x="1430.04" y="284.47" width="1.04" height="1.1" fill="#FFD700"/><rect x="1431.08" y="284.47" width="5.20" height="1.1" fill="#9CDCFE"/><rect x="1436.28" y="284.47" width="1.04" height="1.1" fill="#D4D4D4"/><rect x="1438.36" y="284.47" width="3.12" height="1.1" fill="#4EC9B0"/><rect x="1441.48" y="284.47" width="1.04" height="1.1" fill="#B5CEA8"/><rect x="1442.52" y="284.47" width="13.52" height="1.1" fill="#4FC1FF"/><rect x="1456.04" y="284.47" width="1.04" height="1.1" fill="#FFD700"/><rect x="1411.32" y="288.53" width="46.80" height="1.1" fill="#6A9955"/><rect x="1411.32" y="290.56" width="2.08" height="1.1" fill="#C586C0"/><rect x="1414.44" y="290.56" width="1.04" height="1.1" fill="#4FC1FF"/><rect x="1416.52" y="290.56" width="2.08" height="1.1" fill="#569CD6"/><rect x="1419.64" y="290.56" width="4.16" height="1.1" fill="#569CD6"/><rect x="1424.84" y="290.56" width="2.08" height="1.1" fill="#569CD6"/><rect x="1427.96" y="290.56" width="1.04" height="1.1" fill="#4FC1FF"/><rect x="1430.04" y="290.56" width="2.08" height="1.1" fill="#569CD6"/><rect x="1433.16" y="290.56" width="4.16" height="1.1" fill="#569CD6"/><rect x="1437.32" y="290.56" width="1.04" height="1.1" fill="#D4D4D4"/><rect x="1415.48" y="292.59" width="1.04" height="1.1" fill="#FFD700"/><rect x="1416.52" y="292.59" width="1.04" height="1.1" fill="#4FC1FF"/><rect x="1417.56" y="292.59" width="1.04" height="1.1" fill="#D4D4D4"/><rect x="1419.64" y="292.59" width="1.04" height="1.1" fill="#4FC1FF"/><rect x="1420.68" y="292.59" width="1.04" height="1.1" fill="#FFD700"/><rect x="1422.76" y="292.59" width="1.04" height="1.1" fill="#D4D4D4"/><rect x="1424.84" y="292.59" width="5.20" height="1.1" fill="#9CDCFE"/><rect x="1430.04" y="292.59" width="1.04" height="1.1" fill="#B5CEA8"/><rect x="1431.08" y="292.59" width="5.20" height="1.1" fill="#9CDCFE"/><rect x="1436.28" y="292.59" width="1.04" height="1.1" fill="#FFD700"/><rect x="1437.32" y="292.59" width="1.04" height="1.1" fill="#D4D4D4"/><rect x="1438.36" y="292.59" width="1.04" height="1.1" fill="#B5CEA8"/><rect x="1439.40" y="292.59" width="1.04" height="1.1" fill="#FFD700"/><rect x="1411.32" y="296.65" width="64.48" height="1.1" fill="#6A9955"/><rect x="1411.32" y="298.68" width="12.48" height="1.1" fill="#6A9955"/><rect x="1411.32" y="300.71" width="2.08" height="1.1" fill="#C586C0"/><rect x="1414.44" y="300.71" width="4.16" height="1.1" fill="#9CDCFE"/><rect x="1418.60" y="300.71" width="1.04" height="1.1" fill="#FFD700"/><rect x="1419.64" y="300.71" width="8.32" height="1.1" fill="#CE9178"/><rect x="1427.96" y="300.71" width="1.04" height="1.1" fill="#FFD700"/><rect x="1430.04" y="300.71" width="2.08" height="1.1" fill="#569CD6"/><rect x="1433.16" y="300.71" width="3.12" height="1.1" fill="#569CD6"/><rect x="1437.32" y="300.71" width="4.16" height="1.1" fill="#569CD6"/><rect x="1442.52" y="300.71" width="3.12" height="1.1" fill="#569CD6"/><rect x="1446.68" y="300.71" width="6.24" height="1.1" fill="#9CDCFE"/><rect x="1453.96" y="300.71" width="2.08" height="1.1" fill="#569CD6"/><rect x="1457.08" y="300.71" width="4.16" height="1.1" fill="#569CD6"/><rect x="1461.24" y="300.71" width="1.04" height="1.1" fill="#D4D4D4"/><rect x="1415.48" y="302.74" width="6.24" height="1.1" fill="#9CDCFE"/><rect x="1422.76" y="302.74" width="1.04" height="1.1" fill="#D4D4D4"/><rect x="1424.84" y="302.74" width="3.12" height="1.1" fill="#4EC9B0"/><rect x="1427.96" y="302.74" width="1.04" height="1.1" fill="#B5CEA8"/><rect x="1429.00" y="302.74" width="18.72" height="1.1" fill="#DCDCAA"/><rect x="1447.72" y="302.74" width="1.04" height="1.1" fill="#FFD700"/><rect x="1448.76" y="302.74" width="1.04" height="1.1" fill="#D4D4D4"/><rect x="1449.80" y="302.74" width="6.24" height="1.1" fill="#CE9178"/><rect x="1456.04" y="302.74" width="1.04" height="1.1" fill="#FFD700"/><rect x="1415.48" y="304.77" width="6.24" height="1.1" fill="#9CDCFE"/><rect x="1422.76" y="304.77" width="1.04" height="1.1" fill="#D4D4D4"/><rect x="1424.84" y="304.77" width="3.12" height="1.1" fill="#4EC9B0"/><rect x="1427.96" y="304.77" width="1.04" height="1.1" fill="#B5CEA8"/><rect x="1429.00" y="304.77" width="11.44" height="1.1" fill="#DCDCAA"/><rect x="1440.44" y="304.77" width="1.04" height="1.1" fill="#FFD700"/><rect x="1441.48" y="304.77" width="4.16" height="1.1" fill="#9CDCFE"/><rect x="1445.64" y="304.77" width="1.04" height="1.1" fill="#FFD700"/><rect x="1446.68" y="304.77" width="8.32" height="1.1" fill="#CE9178"/><rect x="1455.00" y="304.77" width="1.04" height="1.1" fill="#FFD700"/><rect x="1456.04" y="304.77" width="1.04" height="1.1" fill="#D4D4D4"/><rect x="1458.12" y="304.77" width="6.24" height="1.1" fill="#9CDCFE"/><rect x="1464.36" y="304.77" width="1.04" height="1.1" fill="#D4D4D4"/><rect x="1466.44" y="304.77" width="2.08" height="1.1" fill="#B5CEA8"/><rect x="1468.52" y="304.77" width="1.04" height="1.1" fill="#D4D4D4"/><rect x="1419.64" y="306.80" width="1.04" height="1.1" fill="#FFD700"/><rect x="1420.68" y="306.80" width="1.04" height="1.1" fill="#4FC1FF"/><rect x="1421.72" y="306.80" width="1.04" height="1.1" fill="#D4D4D4"/><rect x="1423.80" y="306.80" width="1.04" height="1.1" fill="#4FC1FF"/><rect x="1424.84" y="306.80" width="1.04" height="1.1" fill="#FFD700"/><rect x="1425.88" y="306.80" width="1.04" height="1.1" fill="#D4D4D4"/><rect x="1427.96" y="306.80" width="4.16" height="1.1" fill="#569CD6"/><rect x="1432.12" y="306.80" width="1.04" height="1.1" fill="#FFD700"/><rect x="1411.32" y="310.86" width="65.52" height="1.1" fill="#6A9955"/><rect x="1411.32" y="312.89" width="64.48" height="1.1" fill="#6A9955"/><rect x="1411.32" y="314.92" width="31.20" height="1.1" fill="#6A9955"/><rect x="1411.32" y="316.95" width="6.24" height="1.1" fill="#9CDCFE"/><rect x="1418.60" y="316.95" width="1.04" height="1.1" fill="#D4D4D4"/><rect x="1420.68" y="316.95" width="9.36" height="1.1" fill="#CE9178"/><rect x="1411.32" y="318.98" width="5.20" height="1.1" fill="#9CDCFE"/><rect x="1417.56" y="318.98" width="1.04" height="1.1" fill="#D4D4D4"/><rect x="1419.64" y="318.98" width="1.04" height="1.1" fill="#FFD700"/><rect x="1420.68" y="318.98" width="1.04" height="1.1" fill="#FFD700"/><rect x="1411.32" y="323.04" width="66.56" height="1.1" fill="#6A9955"/><rect x="1411.32" y="325.07" width="45.76" height="1.1" fill="#6A9955"/><rect x="1411.32" y="327.10" width="2.08" height="1.1" fill="#C586C0"/><rect x="1414.44" y="327.10" width="11.44" height="1.1" fill="#9CDCFE"/><rect x="1426.92" y="327.10" width="1.04" height="1.1" fill="#D4D4D4"/><rect x="1429.00" y="327.10" width="4.16" height="1.1" fill="#9CDCFE"/><rect x="1433.16" y="327.10" width="1.04" height="1.1" fill="#FFD700"/><rect x="1434.20" y="327.10" width="13.52" height="1.1" fill="#CE9178"/><rect x="1447.72" y="327.10" width="1.04" height="1.1" fill="#FFD700"/><rect x="1449.80" y="327.10" width="1.04" height="1.1" fill="#D4D4D4"/><rect x="1450.84" y="327.10" width="1.04" height="1.1" fill="#D4D4D4"/><rect x="1452.92" y="327.10" width="1.04" height="1.1" fill="#B5CEA8"/><rect x="1453.96" y="327.10" width="1.04" height="1.1" fill="#D4D4D4"/><rect x="1415.48" y="329.13" width="64.48" height="1.1" fill="#6A9955"/><rect x="1415.48" y="331.16" width="6.24" height="1.1" fill="#9CDCFE"/><rect x="1422.76" y="331.16" width="1.04" height="1.1" fill="#D4D4D4"/><rect x="1424.84" y="331.16" width="11.44" height="1.1" fill="#CE9178"/><rect x="1415.48" y="333.19" width="8.32" height="1.1" fill="#9CDCFE"/><rect x="1424.84" y="333.19" width="1.04" height="1.1" fill="#D4D4D4"/><rect x="1426.92" y="333.19" width="1.04" height="1.1" fill="#FFD700"/><rect x="1427.96" y="333.19" width="1.04" height="1.1" fill="#FFD700"/><rect x="1415.48" y="337.25" width="61.36" height="1.1" fill="#6A9955"/><rect x="1415.48" y="339.28" width="36.40" height="1.1" fill="#6A9955"/><rect x="1415.48" y="341.31" width="4.16" height="1.1" fill="#9CDCFE"/><rect x="1420.68" y="341.31" width="1.04" height="1.1" fill="#D4D4D4"/><rect x="1422.76" y="341.31" width="3.12" height="1.1" fill="#4EC9B0"/><rect x="1425.88" y="341.31" width="1.04" height="1.1" fill="#B5CEA8"/><rect x="1426.92" y="341.31" width="3.12" height="1.1" fill="#9CDCFE"/><rect x="1430.04" y="341.31" width="1.04" height="1.1" fill="#B5CEA8"/><rect x="1431.08" y="341.31" width="13.52" height="1.1" fill="#DCDCAA"/><rect x="1444.60" y="341.31" width="1.04" height="1.1" fill="#FFD700"/><rect x="1445.64" y="341.31" width="5.20" height="1.1" fill="#9CDCFE"/><rect x="1450.84" y="341.31" width="1.04" height="1.1" fill="#D4D4D4"/><rect x="1452.92" y="341.31" width="8.32" height="1.1" fill="#B5CEA8"/><rect x="1461.24" y="341.31" width="1.04" height="1.1" fill="#D4D4D4"/><rect x="1463.32" y="341.31" width="1.04" height="1.1" fill="#FFD700"/><rect x="1464.36" y="341.31" width="1.04" height="1.1" fill="#4FC1FF"/><rect x="1465.40" y="341.31" width="1.04" height="1.1" fill="#D4D4D4"/><rect x="1467.48" y="341.31" width="1.04" height="1.1" fill="#4FC1FF"/><rect x="1468.52" y="341.31" width="1.04" height="1.1" fill="#FFD700"/><rect x="1469.56" y="341.31" width="1.04" height="1.1" fill="#D4D4D4"/><rect x="1471.64" y="341.31" width="5.20" height="1.1" fill="#B5CEA8"/><rect x="1476.84" y="341.31" width="1.04" height="1.1" fill="#FFD700"/><rect x="1415.48" y="343.34" width="3.12" height="1.1" fill="#9CDCFE"/><rect x="1418.60" y="343.34" width="1.04" height="1.1" fill="#B5CEA8"/><rect x="1419.64" y="343.34" width="8.32" height="1.1" fill="#DCDCAA"/><rect x="1427.96" y="343.34" width="1.04" height="1.1" fill="#FFD700"/><rect x="1429.00" y="343.34" width="4.16" height="1.1" fill="#9CDCFE"/><rect x="1433.16" y="343.34" width="1.04" height="1.1" fill="#FFD700"/><rect x="1415.48" y="345.37" width="10.40" height="1.1" fill="#9CDCFE"/><rect x="1426.92" y="345.37" width="1.04" height="1.1" fill="#D4D4D4"/><rect x="1429.00" y="345.37" width="3.12" height="1.1" fill="#9CDCFE"/><rect x="1432.12" y="345.37" width="1.04" height="1.1" fill="#B5CEA8"/><rect x="1433.16" y="345.37" width="7.28" height="1.1" fill="#DCDCAA"/><rect x="1440.44" y="345.37" width="1.04" height="1.1" fill="#FFD700"/><rect x="1441.48" y="345.37" width="1.04" height="1.1" fill="#FFD700"/><rect x="1415.48" y="349.43" width="27.04" height="1.1" fill="#6A9955"/><rect x="1415.48" y="351.46" width="3.12" height="1.1" fill="#C586C0"/><rect x="1419.64" y="351.46" width="1.04" height="1.1" fill="#9CDCFE"/><rect x="1421.72" y="351.46" width="2.08" height="1.1" fill="#C586C0"/><rect x="1424.84" y="351.46" width="2.08" height="1.1" fill="#4EC9B0"/><rect x="1426.92" y="351.46" width="1.04" height="1.1" fill="#B5CEA8"/><rect x="1427.96" y="351.46" width="6.24" height="1.1" fill="#DCDCAA"/><rect x="1434.20" y="351.46" width="1.04" height="1.1" fill="#FFD700"/><rect x="1435.24" y="351.46" width="1.04" height="1.1" fill="#B5CEA8"/><rect x="1436.28" y="351.46" width="1.04" height="1.1" fill="#D4D4D4"/><rect x="1438.36" y="351.46" width="10.40" height="1.1" fill="#9CDCFE"/><rect x="1448.76" y="351.46" width="1.04" height="1.1" fill="#B5CEA8"/><rect x="1449.80" y="351.46" width="5.20" height="1.1" fill="#9CDCFE"/><rect x="1455.00" y="351.46" width="1.04" height="1.1" fill="#FFD700"/><rect x="1456.04" y="351.46" width="1.04" height="1.1" fill="#B5CEA8"/><rect x="1457.08" y="351.46" width="1.04" height="1.1" fill="#FFD700"/><rect x="1458.12" y="351.46" width="1.04" height="1.1" fill="#FFD700"/><rect x="1459.16" y="351.46" width="1.04" height="1.1" fill="#D4D4D4"/><rect x="1419.64" y="353.49" width="57.20" height="1.1" fill="#6A9955"/><rect x="1419.64" y="355.52" width="21.84" height="1.1" fill="#6A9955"/><rect x="1419.64" y="357.55" width="10.40" height="1.1" fill="#9CDCFE"/><rect x="1431.08" y="357.55" width="1.04" height="1.1" fill="#D4D4D4"/><rect x="1433.16" y="357.55" width="10.40" height="1.1" fill="#9CDCFE"/><rect x="1443.56" y="357.55" width="1.04" height="1.1" fill="#FFD700"/><rect x="1444.60" y="357.55" width="1.04" height="1.1" fill="#B5CEA8"/><rect x="1445.64" y="357.55" width="1.04" height="1.1" fill="#D4D4D4"/><rect x="1447.72" y="357.55" width="1.04" height="1.1" fill="#B5CEA8"/><rect x="1448.76" y="357.55" width="1.04" height="1.1" fill="#D4D4D4"/><rect x="1450.84" y="357.55" width="1.04" height="1.1" fill="#9CDCFE"/><rect x="1451.88" y="357.55" width="1.04" height="1.1" fill="#D4D4D4"/><rect x="1453.96" y="357.55" width="1.04" height="1.1" fill="#B5CEA8"/><rect x="1455.00" y="357.55" width="1.04" height="1.1" fill="#FFD700"/><rect x="1419.64" y="361.61" width="53.04" height="1.1" fill="#6A9955"/><rect x="1419.64" y="363.64" width="12.48" height="1.1" fill="#6A9955"/><rect x="1419.64" y="365.67" width="2.08" height="1.1" fill="#C586C0"/><rect x="1422.76" y="365.67" width="10.40" height="1.1" fill="#9CDCFE"/><rect x="1434.20" y="365.67" width="1.04" height="1.1" fill="#D4D4D4"/><rect x="1436.28" y="365.67" width="4.16" height="1.1" fill="#9CDCFE"/><rect x="1440.44" y="365.67" width="1.04" height="1.1" fill="#FFD700"/><rect x="1441.48" y="365.67" width="12.48" height="1.1" fill="#CE9178"/><rect x="1453.96" y="365.67" width="1.04" height="1.1" fill="#FFD700"/><rect x="1455.00" y="365.67" width="1.04" height="1.1" fill="#D4D4D4"/><rect x="1423.80" y="367.70" width="48.88" height="1.1" fill="#6A9955"/><rect x="1423.80" y="369.73" width="17.68" height="1.1" fill="#6A9955"/><rect x="1423.80" y="371.76" width="3.12" height="1.1" fill="#9CDCFE"/><rect x="1427.96" y="371.76" width="1.04" height="1.1" fill="#D4D4D4"/><rect x="1430.04" y="371.76" width="3.12" height="1.1" fill="#DCDCAA"/><rect x="1433.16" y="371.76" width="1.04" height="1.1" fill="#FFD700"/><rect x="1434.20" y="371.76" width="10.40" height="1.1" fill="#9CDCFE"/><rect x="1444.60" y="371.76" width="1.04" height="1.1" fill="#FFD700"/><rect x="1445.64" y="371.76" width="1.04" height="1.1" fill="#B5CEA8"/><rect x="1446.68" y="371.76" width="1.04" height="1.1" fill="#D4D4D4"/><rect x="1448.76" y="371.76" width="1.04" height="1.1" fill="#B5CEA8"/><rect x="1449.80" y="371.76" width="1.04" height="1.1" fill="#D4D4D4"/><rect x="1451.88" y="371.76" width="1.04" height="1.1" fill="#9CDCFE"/><rect x="1452.92" y="371.76" width="1.04" height="1.1" fill="#D4D4D4"/><rect x="1455.00" y="371.76" width="1.04" height="1.1" fill="#B5CEA8"/><rect x="1456.04" y="371.76" width="1.04" height="1.1" fill="#FFD700"/><rect x="1457.08" y="371.76" width="1.04" height="1.1" fill="#FFD700"/><rect x="1423.80" y="375.82" width="48.88" height="1.1" fill="#6A9955"/><rect x="1423.80" y="377.85" width="2.08" height="1.1" fill="#C586C0"/><rect x="1426.92" y="377.85" width="7.28" height="1.1" fill="#4FC1FF"/><rect x="1434.20" y="377.85" width="1.04" height="1.1" fill="#FFD700"/><rect x="1435.24" y="377.85" width="3.12" height="1.1" fill="#9CDCFE"/><rect x="1438.36" y="377.85" width="1.04" height="1.1" fill="#FFD700"/><rect x="1440.44" y="377.85" width="1.04" height="1.1" fill="#D4D4D4"/><rect x="1441.48" y="377.85" width="1.04" height="1.1" fill="#D4D4D4"/><rect x="1443.56" y="377.85" width="8.32" height="1.1" fill="#CE9178"/><rect x="1451.88" y="377.85" width="1.04" height="1.1" fill="#D4D4D4"/><rect x="1427.96" y="379.88" width="8.32" height="1.1" fill="#C586C0"/><rect x="1423.80" y="383.94" width="54.08" height="1.1" fill="#6A9955"/><rect x="1423.80" y="385.97" width="16.64" height="1.1" fill="#6A9955"/><rect x="1423.80" y="388.00" width="3.12" height="1.1" fill="#9CDCFE"/><rect x="1427.96" y="388.00" width="1.04" height="1.1" fill="#D4D4D4"/><rect x="1430.04" y="388.00" width="10.40" height="1.1" fill="#9CDCFE"/><rect x="1440.44" y="388.00" width="1.04" height="1.1" fill="#FFD700"/><rect x="1441.48" y="388.00" width="1.04" height="1.1" fill="#B5CEA8"/><rect x="1442.52" y="388.00" width="1.04" height="1.1" fill="#D4D4D4"/><rect x="1444.60" y="388.00" width="1.04" height="1.1" fill="#B5CEA8"/><rect x="1445.64" y="388.00" width="1.04" height="1.1" fill="#D4D4D4"/><rect x="1447.72" y="388.00" width="1.04" height="1.1" fill="#9CDCFE"/><rect x="1448.76" y="388.00" width="1.04" height="1.1" fill="#D4D4D4"/><rect x="1450.84" y="388.00" width="1.04" height="1.1" fill="#B5CEA8"/><rect x="1451.88" y="388.00" width="1.04" height="1.1" fill="#D4D4D4"/><rect x="1452.92" y="388.00" width="1.04" height="1.1" fill="#B5CEA8"/><rect x="1453.96" y="388.00" width="1.04" height="1.1" fill="#FFD700"/><rect x="1456.04" y="388.00" width="1.04" height="1.1" fill="#D4D4D4"/><rect x="1458.12" y="388.00" width="2.08" height="1.1" fill="#4EC9B0"/><rect x="1460.20" y="388.00" width="1.04" height="1.1" fill="#B5CEA8"/><rect x="1461.24" y="388.00" width="5.20" height="1.1" fill="#DCDCAA"/><rect x="1466.44" y="388.00" width="1.04" height="1.1" fill="#FFD700"/><rect x="1467.48" y="388.00" width="1.04" height="1.1" fill="#FFD700"/><rect x="1468.52" y="388.00" width="1.04" height="1.1" fill="#4FC1FF"/><rect x="1469.56" y="388.00" width="1.04" height="1.1" fill="#D4D4D4"/><rect x="1471.64" y="388.00" width="1.04" height="1.1" fill="#4FC1FF"/><rect x="1472.68" y="388.00" width="1.04" height="1.1" fill="#D4D4D4"/><rect x="1474.76" y="388.00" width="1.04" height="1.1" fill="#4FC1FF"/><rect x="1475.80" y="388.00" width="1.04" height="1.1" fill="#D4D4D4"/><rect x="1477.88" y="388.00" width="1.04" height="1.1" fill="#4FC1FF"/><rect x="1478.92" y="388.00" width="1.04" height="1.1" fill="#FFD700"/><rect x="1479.96" y="388.00" width="1.04" height="1.1" fill="#FFD700"/><rect x="1423.80" y="390.03" width="1.04" height="1.1" fill="#FFD700"/><rect x="1424.84" y="390.03" width="6.24" height="1.1" fill="#9CDCFE"/><rect x="1431.08" y="390.03" width="1.04" height="1.1" fill="#D4D4D4"/><rect x="1433.16" y="390.03" width="6.24" height="1.1" fill="#9CDCFE"/><rect x="1439.40" y="390.03" width="1.04" height="1.1" fill="#D4D4D4"/><rect x="1441.48" y="390.03" width="4.16" height="1.1" fill="#9CDCFE"/><rect x="1445.64" y="390.03" width="1.04" height="1.1" fill="#D4D4D4"/><rect x="1447.72" y="390.03" width="4.16" height="1.1" fill="#9CDCFE"/><rect x="1451.88" y="390.03" width="1.04" height="1.1" fill="#FFD700"/><rect x="1453.96" y="390.03" width="1.04" height="1.1" fill="#D4D4D4"/><rect x="1456.04" y="390.03" width="3.12" height="1.1" fill="#9CDCFE"/><rect x="1459.16" y="390.03" width="1.04" height="1.1" fill="#B5CEA8"/><rect x="1460.20" y="390.03" width="6.24" height="1.1" fill="#DCDCAA"/><rect x="1466.44" y="390.03" width="1.04" height="1.1" fill="#FFD700"/><rect x="1467.48" y="390.03" width="5.20" height="1.1" fill="#CE9178"/><rect x="1472.68" y="390.03" width="1.04" height="1.1" fill="#FFD700"/><rect x="1423.80" y="394.09" width="55.12" height="1.1" fill="#6A9955"/><rect x="1423.80" y="396.12" width="55.12" height="1.1" fill="#6A9955"/><rect x="1423.80" y="398.15" width="9.36" height="1.1" fill="#6A9955"/><rect x="1423.80" y="400.18" width="7.28" height="1.1" fill="#9CDCFE"/><rect x="1432.12" y="400.18" width="1.04" height="1.1" fill="#D4D4D4"/><rect x="1434.20" y="400.18" width="4.16" height="1.1" fill="#4EC9B0"/><rect x="1438.36" y="400.18" width="1.04" height="1.1" fill="#B5CEA8"/><rect x="1439.40" y="400.18" width="19.76" height="1.1" fill="#DCDCAA"/><rect x="1459.16" y="400.18" width="1.04" height="1.1" fill="#FFD700"/><rect x="1460.20" y="400.18" width="1.04" height="1.1" fill="#FFD700"/><rect x="1423.80" y="402.21" width="4.16" height="1.1" fill="#9CDCFE"/><rect x="1429.00" y="402.21" width="1.04" height="1.1" fill="#D4D4D4"/><rect x="1431.08" y="402.21" width="4.16" height="1.1" fill="#4EC9B0"/><rect x="1435.24" y="402.21" width="1.04" height="1.1" fill="#B5CEA8"/><rect x="1436.28" y="402.21" width="9.36" height="1.1" fill="#DCDCAA"/><rect x="1445.64" y="402.21" width="1.04" height="1.1" fill="#FFD700"/><rect x="1446.68" y="402.21" width="6.24" height="1.1" fill="#9CDCFE"/><rect x="1452.92" y="402.21" width="1.04" height="1.1" fill="#D4D4D4"/><rect x="1455.00" y="402.21" width="6.24" height="1.1" fill="#9CDCFE"/><rect x="1461.24" y="402.21" width="1.04" height="1.1" fill="#D4D4D4"/><rect x="1463.32" y="402.21" width="4.16" height="1.1" fill="#9CDCFE"/><rect x="1467.48" y="402.21" width="1.04" height="1.1" fill="#D4D4D4"/><rect x="1469.56" y="402.21" width="4.16" height="1.1" fill="#9CDCFE"/><rect x="1473.72" y="402.21" width="1.04" height="1.1" fill="#FFD700"/><rect x="1423.80" y="404.24" width="7.28" height="1.1" fill="#9CDCFE"/><rect x="1431.08" y="404.24" width="1.04" height="1.1" fill="#B5CEA8"/><rect x="1432.12" y="404.24" width="11.44" height="1.1" fill="#DCDCAA"/><rect x="1443.56" y="404.24" width="1.04" height="1.1" fill="#FFD700"/><rect x="1444.60" y="404.24" width="3.12" height="1.1" fill="#9CDCFE"/><rect x="1447.72" y="404.24" width="1.04" height="1.1" fill="#D4D4D4"/><rect x="1449.80" y="404.24" width="4.16" height="1.1" fill="#9CDCFE"/><rect x="1453.96" y="404.24" width="1.04" height="1.1" fill="#FFD700"/><rect x="1423.80" y="408.30" width="53.04" height="1.1" fill="#6A9955"/><rect x="1423.80" y="410.33" width="32.24" height="1.1" fill="#6A9955"/><rect x="1423.80" y="412.36" width="8.32" height="1.1" fill="#9CDCFE"/><rect x="1432.12" y="412.36" width="1.04" height="1.1" fill="#B5CEA8"/><rect x="1433.16" y="412.36" width="6.24" height="1.1" fill="#DCDCAA"/><rect x="1439.40" y="412.36" width="1.04" height="1.1" fill="#FFD700"/><rect x="1440.44" y="412.36" width="7.28" height="1.1" fill="#9CDCFE"/><rect x="1447.72" y="412.36" width="1.04" height="1.1" fill="#FFD700"/><rect x="1411.32" y="416.42" width="66.56" height="1.1" fill="#6A9955"/><rect x="1411.32" y="418.45" width="69.68" height="1.1" fill="#6A9955"/><rect x="1411.32" y="420.48" width="4.16" height="1.1" fill="#C586C0"/><rect x="1415.48" y="420.48" width="1.04" height="1.1" fill="#D4D4D4"/><rect x="1415.48" y="422.51" width="24.96" height="1.1" fill="#6A9955"/><rect x="1415.48" y="424.54" width="3.12" height="1.1" fill="#C586C0"/><rect x="1419.64" y="424.54" width="7.28" height="1.1" fill="#9CDCFE"/><rect x="1427.96" y="424.54" width="2.08" height="1.1" fill="#C586C0"/><rect x="1431.08" y="424.54" width="8.32" height="1.1" fill="#9CDCFE"/><rect x="1439.40" y="424.54" width="1.04" height="1.1" fill="#D4D4D4"/><rect x="1419.64" y="426.57" width="56.16" height="1.1" fill="#6A9955"/><rect x="1419.64" y="428.60" width="32.24" height="1.1" fill="#6A9955"/><rect x="1419.64" y="430.63" width="6.24" height="1.1" fill="#9CDCFE"/><rect x="1426.92" y="430.63" width="1.04" height="1.1" fill="#D4D4D4"/><rect x="1429.00" y="430.63" width="10.40" height="1.1" fill="#CE9178"/><rect x="1419.64" y="434.69" width="52.00" height="1.1" fill="#6A9955"/><rect x="1419.64" y="436.72" width="7.28" height="1.1" fill="#9CDCFE"/><rect x="1426.92" y="436.72" width="1.04" height="1.1" fill="#B5CEA8"/><rect x="1427.96" y="436.72" width="6.24" height="1.1" fill="#DCDCAA"/><rect x="1434.20" y="436.72" width="1.04" height="1.1" fill="#FFD700"/><rect x="1435.24" y="436.72" width="3.12" height="1.1" fill="#9CDCFE"/><rect x="1438.36" y="436.72" width="1.04" height="1.1" fill="#FFD700"/><rect x="1419.64" y="438.75" width="3.12" height="1.1" fill="#9CDCFE"/><rect x="1423.80" y="438.75" width="1.04" height="1.1" fill="#D4D4D4"/><rect x="1425.88" y="438.75" width="7.28" height="1.1" fill="#9CDCFE"/><rect x="1433.16" y="438.75" width="1.04" height="1.1" fill="#B5CEA8"/><rect x="1434.20" y="438.75" width="12.48" height="1.1" fill="#DCDCAA"/><rect x="1446.68" y="438.75" width="1.04" height="1.1" fill="#FFD700"/><rect x="1447.72" y="438.75" width="1.04" height="1.1" fill="#FFD700"/><rect x="1419.64" y="442.81" width="29.12" height="1.1" fill="#6A9955"/><rect x="1419.64" y="444.84" width="6.24" height="1.1" fill="#9CDCFE"/><rect x="1426.92" y="444.84" width="1.04" height="1.1" fill="#D4D4D4"/><rect x="1429.00" y="444.84" width="3.12" height="1.1" fill="#DCDCAA"/><rect x="1432.12" y="444.84" width="1.04" height="1.1" fill="#FFD700"/><rect x="1433.16" y="444.84" width="3.12" height="1.1" fill="#9CDCFE"/><rect x="1436.28" y="444.84" width="1.04" height="1.1" fill="#B5CEA8"/><rect x="1437.32" y="444.84" width="4.16" height="1.1" fill="#DCDCAA"/><rect x="1441.48" y="444.84" width="1.04" height="1.1" fill="#FFD700"/><rect x="1442.52" y="444.84" width="1.04" height="1.1" fill="#FFD700"/><rect x="1443.56" y="444.84" width="1.04" height="1.1" fill="#FFD700"/><rect x="1419.64" y="446.87" width="6.24" height="1.1" fill="#9CDCFE"/><rect x="1426.92" y="446.87" width="1.04" height="1.1" fill="#D4D4D4"/><rect x="1429.00" y="446.87" width="3.12" height="1.1" fill="#DCDCAA"/><rect x="1432.12" y="446.87" width="1.04" height="1.1" fill="#FFD700"/><rect x="1433.16" y="446.87" width="3.12" height="1.1" fill="#9CDCFE"/><rect x="1436.28" y="446.87" width="1.04" height="1.1" fill="#B5CEA8"/><rect x="1437.32" y="446.87" width="3.12" height="1.1" fill="#DCDCAA"/><rect x="1440.44" y="446.87" width="1.04" height="1.1" fill="#FFD700"/><rect x="1441.48" y="446.87" width="1.04" height="1.1" fill="#FFD700"/><rect x="1442.52" y="446.87" width="1.04" height="1.1" fill="#FFD700"/><rect x="1419.64" y="448.90" width="4.16" height="1.1" fill="#9CDCFE"/><rect x="1424.84" y="448.90" width="1.04" height="1.1" fill="#D4D4D4"/><rect x="1426.92" y="448.90" width="3.12" height="1.1" fill="#DCDCAA"/><rect x="1430.04" y="448.90" width="1.04" height="1.1" fill="#FFD700"/><rect x="1431.08" y="448.90" width="3.12" height="1.1" fill="#9CDCFE"/><rect x="1434.20" y="448.90" width="1.04" height="1.1" fill="#B5CEA8"/><rect x="1435.24" y="448.90" width="5.20" height="1.1" fill="#DCDCAA"/><rect x="1440.44" y="448.90" width="1.04" height="1.1" fill="#FFD700"/><rect x="1441.48" y="448.90" width="1.04" height="1.1" fill="#FFD700"/><rect x="1442.52" y="448.90" width="1.04" height="1.1" fill="#FFD700"/><rect x="1419.64" y="450.93" width="4.16" height="1.1" fill="#9CDCFE"/><rect x="1424.84" y="450.93" width="1.04" height="1.1" fill="#D4D4D4"/><rect x="1426.92" y="450.93" width="3.12" height="1.1" fill="#DCDCAA"/><rect x="1430.04" y="450.93" width="1.04" height="1.1" fill="#FFD700"/><rect x="1431.08" y="450.93" width="3.12" height="1.1" fill="#9CDCFE"/><rect x="1434.20" y="450.93" width="1.04" height="1.1" fill="#B5CEA8"/><rect x="1435.24" y="450.93" width="6.24" height="1.1" fill="#DCDCAA"/><rect x="1441.48" y="450.93" width="1.04" height="1.1" fill="#FFD700"/><rect x="1442.52" y="450.93" width="1.04" height="1.1" fill="#FFD700"/><rect x="1443.56" y="450.93" width="1.04" height="1.1" fill="#FFD700"/><rect x="1419.64" y="454.99" width="59.28" height="1.1" fill="#6A9955"/><rect x="1419.64" y="457.02" width="5.20" height="1.1" fill="#9CDCFE"/><rect x="1424.84" y="457.02" width="1.04" height="1.1" fill="#B5CEA8"/><rect x="1425.88" y="457.02" width="6.24" height="1.1" fill="#DCDCAA"/><rect x="1432.12" y="457.02" width="1.04" height="1.1" fill="#FFD700"/><rect x="1433.16" y="457.02" width="1.04" height="1.1" fill="#FFD700"/><rect x="1434.20" y="457.02" width="6.24" height="1.1" fill="#9CDCFE"/><rect x="1440.44" y="457.02" width="1.04" height="1.1" fill="#D4D4D4"/><rect x="1442.52" y="457.02" width="6.24" height="1.1" fill="#9CDCFE"/><rect x="1448.76" y="457.02" width="1.04" height="1.1" fill="#D4D4D4"/><rect x="1450.84" y="457.02" width="4.16" height="1.1" fill="#9CDCFE"/><rect x="1455.00" y="457.02" width="1.04" height="1.1" fill="#D4D4D4"/><rect x="1457.08" y="457.02" width="4.16" height="1.1" fill="#9CDCFE"/><rect x="1461.24" y="457.02" width="1.04" height="1.1" fill="#FFD700"/><rect x="1462.28" y="457.02" width="1.04" height="1.1" fill="#FFD700"/><rect x="1411.32" y="461.08" width="64.48" height="1.1" fill="#6A9955"/><rect x="1411.32" y="463.11" width="64.48" height="1.1" fill="#6A9955"/><rect x="1411.32" y="465.14" width="23.92" height="1.1" fill="#6A9955"/><rect x="1411.32" y="467.17" width="58.24" height="1.1" fill="#6A9955"/><rect x="1411.32" y="469.20" width="33.28" height="1.1" fill="#6A9955"/><rect x="1411.32" y="471.23" width="58.24" height="1.1" fill="#6A9955"/><rect x="1411.32" y="473.26" width="27.04" height="1.1" fill="#6A9955"/><rect x="1411.32" y="475.29" width="3.12" height="1.1" fill="#4EC9B0"/><rect x="1414.44" y="475.29" width="1.04" height="1.1" fill="#B5CEA8"/><rect x="1415.48" y="475.29" width="4.16" height="1.1" fill="#DCDCAA"/><rect x="1419.64" y="475.29" width="1.04" height="1.1" fill="#FFD700"/><rect x="1420.68" y="475.29" width="5.20" height="1.1" fill="#9CDCFE"/><rect x="1425.88" y="475.29" width="1.04" height="1.1" fill="#D4D4D4"/><rect x="1427.96" y="475.29" width="1.04" height="1.1" fill="#FFD700"/><rect x="1429.00" y="475.29" width="1.04" height="1.1" fill="#B5CEA8"/><rect x="1430.04" y="475.29" width="1.04" height="1.1" fill="#D4D4D4"/><rect x="1432.12" y="475.29" width="1.04" height="1.1" fill="#4FC1FF"/><rect x="1434.20" y="475.29" width="1.04" height="1.1" fill="#D4D4D4"/><rect x="1435.24" y="475.29" width="1.04" height="1.1" fill="#D4D4D4"/><rect x="1437.32" y="475.29" width="1.04" height="1.1" fill="#B5CEA8"/><rect x="1438.36" y="475.29" width="1.04" height="1.1" fill="#FFD700"/><rect x="1439.40" y="475.29" width="1.04" height="1.1" fill="#D4D4D4"/><rect x="1441.48" y="475.29" width="1.04" height="1.1" fill="#FFD700"/><rect x="1442.52" y="475.29" width="1.04" height="1.1" fill="#4FC1FF"/><rect x="1443.56" y="475.29" width="1.04" height="1.1" fill="#D4D4D4"/><rect x="1445.64" y="475.29" width="1.04" height="1.1" fill="#4FC1FF"/><rect x="1447.72" y="475.29" width="1.04" height="1.1" fill="#D4D4D4"/><rect x="1448.76" y="475.29" width="1.04" height="1.1" fill="#D4D4D4"/><rect x="1450.84" y="475.29" width="1.04" height="1.1" fill="#B5CEA8"/><rect x="1451.88" y="475.29" width="1.04" height="1.1" fill="#FFD700"/><rect x="1452.92" y="475.29" width="1.04" height="1.1" fill="#D4D4D4"/><rect x="1455.00" y="475.29" width="1.04" height="1.1" fill="#FFD700"/><rect x="1456.04" y="475.29" width="1.04" height="1.1" fill="#B5CEA8"/><rect x="1457.08" y="475.29" width="1.04" height="1.1" fill="#D4D4D4"/><rect x="1459.16" y="475.29" width="1.04" height="1.1" fill="#B5CEA8"/><rect x="1460.20" y="475.29" width="1.04" height="1.1" fill="#D4D4D4"/><rect x="1462.28" y="475.29" width="1.04" height="1.1" fill="#B5CEA8"/><rect x="1463.32" y="475.29" width="1.04" height="1.1" fill="#FFD700"/><rect x="1464.36" y="475.29" width="1.04" height="1.1" fill="#D4D4D4"/><rect x="1466.44" y="475.29" width="1.04" height="1.1" fill="#B5CEA8"/><rect x="1467.48" y="475.29" width="1.04" height="1.1" fill="#FFD700"/><rect x="1411.32" y="479.35" width="3.12" height="1.1" fill="#4EC9B0"/><rect x="1414.44" y="479.35" width="1.04" height="1.1" fill="#B5CEA8"/><rect x="1415.48" y="479.35" width="7.28" height="1.1" fill="#DCDCAA"/><rect x="1422.76" y="479.35" width="1.04" height="1.1" fill="#FFD700"/><rect x="1423.80" y="479.35" width="5.20" height="1.1" fill="#9CDCFE"/><rect x="1429.00" y="479.35" width="1.04" height="1.1" fill="#D4D4D4"/><rect x="1431.08" y="479.35" width="33.28" height="1.1" fill="#CE9178"/><rect x="1464.36" y="479.35" width="1.04" height="1.1" fill="#D4D4D4"/><rect x="1466.44" y="479.35" width="1.04" height="1.1" fill="#FFD700"/><rect x="1467.48" y="479.35" width="2.08" height="1.1" fill="#B5CEA8"/><rect x="1469.56" y="479.35" width="1.04" height="1.1" fill="#D4D4D4"/><rect x="1471.64" y="479.35" width="1.04" height="1.1" fill="#4FC1FF"/><rect x="1473.72" y="479.35" width="1.04" height="1.1" fill="#D4D4D4"/><rect x="1475.80" y="479.35" width="1.04" height="1.1" fill="#FFD700"/><rect x="1476.84" y="479.35" width="1.04" height="1.1" fill="#FFD700"/><rect x="1477.88" y="479.35" width="1.04" height="1.1" fill="#9CDCFE"/><rect x="1479.96" y="479.35" width="1.04" height="1.1" fill="#D4D4D4"/><rect x="1482.04" y="479.35" width="2.08" height="1.1" fill="#B5CEA8"/><rect x="1484.12" y="479.35" width="1.04" height="1.1" fill="#FFD700"/><rect x="1486.20" y="479.35" width="1.04" height="1.1" fill="#D4D4D4"/><rect x="1488.28" y="479.35" width="3.12" height="1.1" fill="#B5CEA8"/><rect x="1491.40" y="479.35" width="1.04" height="1.1" fill="#FFD700"/><rect x="1492.44" y="479.35" width="1.04" height="1.1" fill="#FFD700"/><rect x="1493.48" y="479.35" width="1.04" height="1.1" fill="#D4D4D4"/><rect x="1415.48" y="481.38" width="3.12" height="1.1" fill="#4EC9B0"/><rect x="1418.60" y="481.38" width="1.04" height="1.1" fill="#B5CEA8"/><rect x="1419.64" y="481.38" width="20.80" height="1.1" fill="#4FC1FF"/><rect x="1440.44" y="481.38" width="1.04" height="1.1" fill="#D4D4D4"/><rect x="1442.52" y="481.38" width="3.12" height="1.1" fill="#B5CEA8"/><rect x="1445.64" y="481.38" width="1.04" height="1.1" fill="#D4D4D4"/><rect x="1447.72" y="481.38" width="1.04" height="1.1" fill="#FFD700"/><rect x="1448.76" y="481.38" width="1.04" height="1.1" fill="#B5CEA8"/><rect x="1449.80" y="481.38" width="1.04" height="1.1" fill="#D4D4D4"/><rect x="1451.88" y="481.38" width="1.04" height="1.1" fill="#B5CEA8"/><rect x="1452.92" y="481.38" width="1.04" height="1.1" fill="#D4D4D4"/><rect x="1455.00" y="481.38" width="1.04" height="1.1" fill="#B5CEA8"/><rect x="1456.04" y="481.38" width="1.04" height="1.1" fill="#FFD700"/><rect x="1457.08" y="481.38" width="1.04" height="1.1" fill="#D4D4D4"/><rect x="1459.16" y="481.38" width="1.04" height="1.1" fill="#B5CEA8"/><rect x="1460.20" y="481.38" width="1.04" height="1.1" fill="#FFD700"/><rect x="1411.32" y="485.44" width="60.32" height="1.1" fill="#6A9955"/><rect x="1411.32" y="487.47" width="58.24" height="1.1" fill="#6A9955"/><rect x="1411.32" y="489.50" width="7.28" height="1.1" fill="#9CDCFE"/><rect x="1419.64" y="489.50" width="1.04" height="1.1" fill="#D4D4D4"/><rect x="1421.72" y="489.50" width="2.08" height="1.1" fill="#9CDCFE"/><rect x="1423.80" y="489.50" width="1.04" height="1.1" fill="#B5CEA8"/><rect x="1424.84" y="489.50" width="6.24" height="1.1" fill="#DCDCAA"/><rect x="1431.08" y="489.50" width="1.04" height="1.1" fill="#FFD700"/><rect x="1432.12" y="489.50" width="5.20" height="1.1" fill="#9CDCFE"/><rect x="1437.32" y="489.50" width="1.04" height="1.1" fill="#FFD700"/><rect x="1411.32" y="493.56" width="32.24" height="1.1" fill="#6A9955"/><rect x="1411.32" y="495.59" width="3.12" height="1.1" fill="#C586C0"/><rect x="1415.48" y="495.59" width="1.04" height="1.1" fill="#FFD700"/><rect x="1416.52" y="495.59" width="8.32" height="1.1" fill="#9CDCFE"/><rect x="1424.84" y="495.59" width="1.04" height="1.1" fill="#D4D4D4"/><rect x="1426.92" y="495.59" width="8.32" height="1.1" fill="#9CDCFE"/><rect x="1435.24" y="495.59" width="1.04" height="1.1" fill="#FFD700"/><rect x="1437.32" y="495.59" width="2.08" height="1.1" fill="#C586C0"/><rect x="1440.44" y="495.59" width="7.28" height="1.1" fill="#9CDCFE"/><rect x="1447.72" y="495.59" width="1.04" height="1.1" fill="#B5CEA8"/><rect x="1448.76" y="495.59" width="5.20" height="1.1" fill="#DCDCAA"/><rect x="1453.96" y="495.59" width="1.04" height="1.1" fill="#FFD700"/><rect x="1455.00" y="495.59" width="1.04" height="1.1" fill="#FFD700"/><rect x="1456.04" y="495.59" width="1.04" height="1.1" fill="#D4D4D4"/><rect x="1415.48" y="497.62" width="61.36" height="1.1" fill="#6A9955"/><rect x="1415.48" y="499.65" width="11.44" height="1.1" fill="#6A9955"/><rect x="1415.48" y="501.68" width="2.08" height="1.1" fill="#9CDCFE"/><rect x="1418.60" y="501.68" width="1.04" height="1.1" fill="#D4D4D4"/><rect x="1420.68" y="501.68" width="16.64" height="1.1" fill="#9CDCFE"/><rect x="1437.32" y="501.68" width="1.04" height="1.1" fill="#B5CEA8"/><rect x="1438.36" y="501.68" width="3.12" height="1.1" fill="#DCDCAA"/><rect x="1441.48" y="501.68" width="1.04" height="1.1" fill="#FFD700"/><rect x="1442.52" y="501.68" width="8.32" height="1.1" fill="#9CDCFE"/><rect x="1450.84" y="501.68" width="1.04" height="1.1" fill="#D4D4D4"/><rect x="1452.92" y="501.68" width="4.16" height="1.1" fill="#569CD6"/><rect x="1457.08" y="501.68" width="1.04" height="1.1" fill="#FFD700"/><rect x="1415.48" y="505.74" width="56.16" height="1.1" fill="#6A9955"/><rect x="1415.48" y="507.77" width="2.08" height="1.1" fill="#C586C0"/><rect x="1418.60" y="507.77" width="2.08" height="1.1" fill="#9CDCFE"/><rect x="1421.72" y="507.77" width="2.08" height="1.1" fill="#569CD6"/><rect x="1424.84" y="507.77" width="4.16" height="1.1" fill="#569CD6"/><rect x="1429.00" y="507.77" width="1.04" height="1.1" fill="#D4D4D4"/><rect x="1419.64" y="509.80" width="2.08" height="1.1" fill="#9CDCFE"/><rect x="1422.76" y="509.80" width="1.04" height="1.1" fill="#D4D4D4"/><rect x="1424.84" y="509.80" width="15.60" height="1.1" fill="#4EC9B0"/><rect x="1440.44" y="509.80" width="1.04" height="1.1" fill="#FFD700"/><rect x="1441.48" y="509.80" width="8.32" height="1.1" fill="#9CDCFE"/><rect x="1449.80" y="509.80" width="1.04" height="1.1" fill="#D4D4D4"/><rect x="1451.88" y="509.80" width="8.32" height="1.1" fill="#9CDCFE"/><rect x="1460.20" y="509.80" width="1.04" height="1.1" fill="#FFD700"/><rect x="1415.48" y="513.86" width="63.44" height="1.1" fill="#6A9955"/><rect x="1415.48" y="515.89" width="24.96" height="1.1" fill="#6A9955"/><rect x="1415.48" y="517.92" width="4.16" height="1.1" fill="#C586C0"/><rect x="1419.64" y="517.92" width="1.04" height="1.1" fill="#D4D4D4"/><rect x="1419.64" y="519.95" width="60.32" height="1.1" fill="#6A9955"/><rect x="1419.64" y="521.98" width="59.28" height="1.1" fill="#6A9955"/><rect x="1419.64" y="524.01" width="60.32" height="1.1" fill="#6A9955"/><rect x="1419.64" y="526.04" width="32.24" height="1.1" fill="#6A9955"/><rect x="1419.64" y="528.07" width="1.04" height="1.1" fill="#9CDCFE"/><rect x="1421.72" y="528.07" width="1.04" height="1.1" fill="#D4D4D4"/><rect x="1423.80" y="528.07" width="1.04" height="1.1" fill="#FFD700"/><rect x="1424.84" y="528.07" width="1.04" height="1.1" fill="#9CDCFE"/><rect x="1425.88" y="528.07" width="1.04" height="1.1" fill="#FFD700"/><rect x="1426.92" y="528.07" width="1.04" height="1.1" fill="#B5CEA8"/><rect x="1427.96" y="528.07" width="1.04" height="1.1" fill="#FFD700"/><rect x="1430.04" y="528.07" width="3.12" height="1.1" fill="#C586C0"/><rect x="1434.20" y="528.07" width="1.04" height="1.1" fill="#9CDCFE"/><rect x="1436.28" y="528.07" width="2.08" height="1.1" fill="#C586C0"/><rect x="1439.40" y="528.07" width="2.08" height="1.1" fill="#9CDCFE"/><rect x="1441.48" y="528.07" width="1.04" height="1.1" fill="#B5CEA8"/><rect x="1442.52" y="528.07" width="9.36" height="1.1" fill="#9CDCFE"/><rect x="1451.88" y="528.07" width="1.04" height="1.1" fill="#FFD700"/><rect x="1419.64" y="530.10" width="9.36" height="1.1" fill="#9CDCFE"/><rect x="1430.04" y="530.10" width="1.04" height="1.1" fill="#D4D4D4"/><rect x="1432.12" y="530.10" width="8.32" height="1.1" fill="#9CDCFE"/><rect x="1440.44" y="530.10" width="1.04" height="1.1" fill="#FFD700"/><rect x="1441.48" y="530.10" width="1.04" height="1.1" fill="#B5CEA8"/><rect x="1442.52" y="530.10" width="1.04" height="1.1" fill="#FFD700"/><rect x="1444.60" y="530.10" width="1.04" height="1.1" fill="#D4D4D4"/><rect x="1446.68" y="530.10" width="2.08" height="1.1" fill="#4EC9B0"/><rect x="1448.76" y="530.10" width="1.04" height="1.1" fill="#B5CEA8"/><rect x="1449.80" y="530.10" width="4.16" height="1.1" fill="#DCDCAA"/><rect x="1453.96" y="530.10" width="1.04" height="1.1" fill="#FFD700"/><rect x="1455.00" y="530.10" width="1.04" height="1.1" fill="#9CDCFE"/><rect x="1456.04" y="530.10" width="1.04" height="1.1" fill="#FFD700"/><rect x="1419.64" y="532.13" width="2.08" height="1.1" fill="#9CDCFE"/><rect x="1421.72" y="532.13" width="1.04" height="1.1" fill="#B5CEA8"/><rect x="1422.76" y="532.13" width="9.36" height="1.1" fill="#9CDCFE"/><rect x="1432.12" y="532.13" width="1.04" height="1.1" fill="#B5CEA8"/><rect x="1433.16" y="532.13" width="6.24" height="1.1" fill="#DCDCAA"/><rect x="1439.40" y="532.13" width="1.04" height="1.1" fill="#FFD700"/><rect x="1440.44" y="532.13" width="8.32" height="1.1" fill="#9CDCFE"/><rect x="1448.76" y="532.13" width="1.04" height="1.1" fill="#FFD700"/><rect x="1419.64" y="536.19" width="54.08" height="1.1" fill="#6A9955"/><rect x="1419.64" y="538.22" width="2.08" height="1.1" fill="#C586C0"/><rect x="1422.76" y="538.22" width="3.12" height="1.1" fill="#569CD6"/><rect x="1426.92" y="538.22" width="2.08" height="1.1" fill="#9CDCFE"/><rect x="1429.00" y="538.22" width="1.04" height="1.1" fill="#B5CEA8"/><rect x="1430.04" y="538.22" width="7.28" height="1.1" fill="#9CDCFE"/><rect x="1437.32" y="538.22" width="1.04" height="1.1" fill="#D4D4D4"/><rect x="1423.80" y="540.25" width="55.12" height="1.1" fill="#6A9955"/><rect x="1423.80" y="542.28" width="54.08" height="1.1" fill="#6A9955"/><rect x="1423.80" y="544.31" width="24.96" height="1.1" fill="#6A9955"/><rect x="1423.80" y="546.34" width="2.08" height="1.1" fill="#C586C0"/><rect x="1426.92" y="546.34" width="9.36" height="1.1" fill="#9CDCFE"/><rect x="1437.32" y="546.34" width="1.04" height="1.1" fill="#D4D4D4"/><rect x="1439.40" y="546.34" width="1.04" height="1.1" fill="#B5CEA8"/><rect x="1441.48" y="546.34" width="3.12" height="1.1" fill="#569CD6"/><rect x="1445.64" y="546.34" width="8.32" height="1.1" fill="#9CDCFE"/><rect x="1453.96" y="546.34" width="1.04" height="1.1" fill="#FFD700"/><rect x="1455.00" y="546.34" width="1.04" height="1.1" fill="#B5CEA8"/><rect x="1456.04" y="546.34" width="1.04" height="1.1" fill="#FFD700"/><rect x="1458.12" y="546.34" width="1.04" height="1.1" fill="#D4D4D4"/><rect x="1460.20" y="546.34" width="1.04" height="1.1" fill="#4FC1FF"/><rect x="1462.28" y="546.34" width="1.04" height="1.1" fill="#D4D4D4"/><rect x="1463.32" y="546.34" width="1.04" height="1.1" fill="#D4D4D4"/><rect x="1465.40" y="546.34" width="1.04" height="1.1" fill="#B5CEA8"/><rect x="1466.44" y="546.34" width="1.04" height="1.1" fill="#D4D4D4"/><rect x="1427.96" y="548.37" width="7.28" height="1.1" fill="#9CDCFE"/><rect x="1436.28" y="548.37" width="1.04" height="1.1" fill="#D4D4D4"/><rect x="1437.32" y="548.37" width="1.04" height="1.1" fill="#D4D4D4"/><rect x="1439.40" y="548.37" width="1.04" height="1.1" fill="#B5CEA8"/><rect x="1427.96" y="550.40" width="9.36" height="1.1" fill="#9CDCFE"/><rect x="1438.36" y="550.40" width="1.04" height="1.1" fill="#D4D4D4"/><rect x="1440.44" y="550.40" width="8.32" height="1.1" fill="#4EC9B0"/><rect x="1448.76" y="550.40" width="1.04" height="1.1" fill="#B5CEA8"/><rect x="1449.80" y="550.40" width="8.32" height="1.1" fill="#4EC9B0"/><rect x="1458.12" y="550.40" width="1.04" height="1.1" fill="#B5CEA8"/><rect x="1459.16" y="550.40" width="3.12" height="1.1" fill="#DCDCAA"/><rect x="1462.28" y="550.40" width="1.04" height="1.1" fill="#FFD700"/><rect x="1463.32" y="550.40" width="1.04" height="1.1" fill="#FFD700"/><rect x="1464.36" y="550.40" width="1.04" height="1.1" fill="#B5CEA8"/><rect x="1465.40" y="550.40" width="8.32" height="1.1" fill="#DCDCAA"/><rect x="1473.72" y="550.40" width="1.04" height="1.1" fill="#FFD700"/><rect x="1474.76" y="550.40" width="16.64" height="1.1" fill="#CE9178"/><rect x="1491.40" y="550.40" width="1.04" height="1.1" fill="#FFD700"/><rect x="1427.96" y="552.43" width="8.32" height="1.1" fill="#9CDCFE"/><rect x="1436.28" y="552.43" width="1.04" height="1.1" fill="#B5CEA8"/><rect x="1437.32" y="552.43" width="6.24" height="1.1" fill="#DCDCAA"/><rect x="1443.56" y="552.43" width="1.04" height="1.1" fill="#FFD700"/><rect x="1444.60" y="552.43" width="7.28" height="1.1" fill="#9CDCFE"/><rect x="1451.88" y="552.43" width="1.04" height="1.1" fill="#FFD700"/><rect x="1427.96" y="554.46" width="8.32" height="1.1" fill="#9CDCFE"/><rect x="1436.28" y="554.46" width="1.04" height="1.1" fill="#B5CEA8"/><rect x="1437.32" y="554.46" width="6.24" height="1.1" fill="#DCDCAA"/><rect x="1443.56" y="554.46" width="1.04" height="1.1" fill="#FFD700"/><rect x="1444.60" y="554.46" width="9.36" height="1.1" fill="#9CDCFE"/><rect x="1453.96" y="554.46" width="1.04" height="1.1" fill="#FFD700"/><rect x="1427.96" y="556.49" width="2.08" height="1.1" fill="#9CDCFE"/><rect x="1430.04" y="556.49" width="1.04" height="1.1" fill="#B5CEA8"/><rect x="1431.08" y="556.49" width="7.28" height="1.1" fill="#9CDCFE"/><rect x="1439.40" y="556.49" width="1.04" height="1.1" fill="#D4D4D4"/><rect x="1441.48" y="556.49" width="4.16" height="1.1" fill="#569CD6"/><rect x="1423.80" y="560.55" width="55.12" height="1.1" fill="#6A9955"/><rect x="1423.80" y="562.58" width="48.88" height="1.1" fill="#6A9955"/><rect x="1423.80" y="564.61" width="32.24" height="1.1" fill="#6A9955"/><rect x="1423.80" y="566.64" width="4.16" height="1.1" fill="#C586C0"/><rect x="1429.00" y="566.64" width="9.36" height="1.1" fill="#9CDCFE"/><rect x="1439.40" y="566.64" width="1.04" height="1.1" fill="#D4D4D4"/><rect x="1441.48" y="566.64" width="1.04" height="1.1" fill="#B5CEA8"/><rect x="1443.56" y="566.64" width="3.12" height="1.1" fill="#569CD6"/><rect x="1447.72" y="566.64" width="8.32" height="1.1" fill="#9CDCFE"/><rect x="1456.04" y="566.64" width="1.04" height="1.1" fill="#FFD700"/><rect x="1457.08" y="566.64" width="1.04" height="1.1" fill="#B5CEA8"/><rect x="1458.12" y="566.64" width="1.04" height="1.1" fill="#FFD700"/><rect x="1460.20" y="566.64" width="1.04" height="1.1" fill="#D4D4D4"/><rect x="1462.28" y="566.64" width="1.04" height="1.1" fill="#4FC1FF"/><rect x="1464.36" y="566.64" width="1.04" height="1.1" fill="#D4D4D4"/><rect x="1465.40" y="566.64" width="1.04" height="1.1" fill="#D4D4D4"/><rect x="1467.48" y="566.64" width="1.04" height="1.1" fill="#B5CEA8"/><rect x="1468.52" y="566.64" width="1.04" height="1.1" fill="#D4D4D4"/><rect x="1427.96" y="568.67" width="9.36" height="1.1" fill="#9CDCFE"/><rect x="1438.36" y="568.67" width="1.04" height="1.1" fill="#D4D4D4"/><rect x="1439.40" y="568.67" width="1.04" height="1.1" fill="#D4D4D4"/><rect x="1441.48" y="568.67" width="1.04" height="1.1" fill="#B5CEA8"/><rect x="1427.96" y="570.70" width="9.36" height="1.1" fill="#9CDCFE"/><rect x="1438.36" y="570.70" width="1.04" height="1.1" fill="#D4D4D4"/><rect x="1440.44" y="570.70" width="8.32" height="1.1" fill="#4EC9B0"/><rect x="1448.76" y="570.70" width="1.04" height="1.1" fill="#B5CEA8"/><rect x="1449.80" y="570.70" width="8.32" height="1.1" fill="#4EC9B0"/><rect x="1458.12" y="570.70" width="1.04" height="1.1" fill="#B5CEA8"/><rect x="1459.16" y="570.70" width="3.12" height="1.1" fill="#DCDCAA"/><rect x="1462.28" y="570.70" width="1.04" height="1.1" fill="#FFD700"/><rect x="1463.32" y="570.70" width="1.04" height="1.1" fill="#FFD700"/><rect x="1464.36" y="570.70" width="1.04" height="1.1" fill="#B5CEA8"/><rect x="1465.40" y="570.70" width="8.32" height="1.1" fill="#DCDCAA"/><rect x="1473.72" y="570.70" width="1.04" height="1.1" fill="#FFD700"/><rect x="1474.76" y="570.70" width="16.64" height="1.1" fill="#CE9178"/><rect x="1491.40" y="570.70" width="1.04" height="1.1" fill="#FFD700"/><rect x="1427.96" y="572.73" width="7.28" height="1.1" fill="#9CDCFE"/><rect x="1435.24" y="572.73" width="1.04" height="1.1" fill="#B5CEA8"/><rect x="1436.28" y="572.73" width="6.24" height="1.1" fill="#DCDCAA"/><rect x="1442.52" y="572.73" width="1.04" height="1.1" fill="#FFD700"/><rect x="1443.56" y="572.73" width="9.36" height="1.1" fill="#9CDCFE"/><rect x="1452.92" y="572.73" width="1.04" height="1.1" fill="#FFD700"/><rect x="1427.96" y="574.76" width="7.28" height="1.1" fill="#9CDCFE"/><rect x="1435.24" y="574.76" width="1.04" height="1.1" fill="#B5CEA8"/><rect x="1436.28" y="574.76" width="6.24" height="1.1" fill="#DCDCAA"/><rect x="1442.52" y="574.76" width="1.04" height="1.1" fill="#FFD700"/><rect x="1443.56" y="574.76" width="9.36" height="1.1" fill="#9CDCFE"/><rect x="1452.92" y="574.76" width="1.04" height="1.1" fill="#FFD700"/><rect x="1427.96" y="576.79" width="67.60" height="1.1" fill="#6A9955"/><rect x="1427.96" y="578.82" width="2.08" height="1.1" fill="#C586C0"/><rect x="1431.08" y="578.82" width="3.12" height="1.1" fill="#DCDCAA"/><rect x="1434.20" y="578.82" width="1.04" height="1.1" fill="#FFD700"/><rect x="1435.24" y="578.82" width="5.20" height="1.1" fill="#9CDCFE"/><rect x="1440.44" y="578.82" width="1.04" height="1.1" fill="#FFD700"/><rect x="1442.52" y="578.82" width="1.04" height="1.1" fill="#D4D4D4"/><rect x="1443.56" y="578.82" width="1.04" height="1.1" fill="#D4D4D4"/><rect x="1445.64" y="578.82" width="6.24" height="1.1" fill="#9CDCFE"/><rect x="1451.88" y="578.82" width="1.04" height="1.1" fill="#FFD700"/><rect x="1452.92" y="578.82" width="11.44" height="1.1" fill="#CE9178"/><rect x="1464.36" y="578.82" width="1.04" height="1.1" fill="#FFD700"/><rect x="1465.40" y="578.82" width="1.04" height="1.1" fill="#D4D4D4"/><rect x="1432.12" y="580.85" width="3.12" height="1.1" fill="#4EC9B0"/><rect x="1435.24" y="580.85" width="1.04" height="1.1" fill="#B5CEA8"/><rect x="1436.28" y="580.85" width="7.28" height="1.1" fill="#DCDCAA"/><rect x="1443.56" y="580.85" width="1.04" height="1.1" fill="#FFD700"/><rect x="1444.60" y="580.85" width="5.20" height="1.1" fill="#9CDCFE"/><rect x="1449.80" y="580.85" width="1.04" height="1.1" fill="#D4D4D4"/><rect x="1451.88" y="580.85" width="33.28" height="1.1" fill="#CE9178"/><rect x="1485.16" y="580.85" width="1.04" height="1.1" fill="#D4D4D4"/><rect x="1487.24" y="580.85" width="1.04" height="1.1" fill="#FFD700"/><rect x="1488.28" y="580.85" width="2.08" height="1.1" fill="#B5CEA8"/><rect x="1490.36" y="580.85" width="1.04" height="1.1" fill="#D4D4D4"/><rect x="1492.44" y="580.85" width="5.20" height="1.1" fill="#9CDCFE"/><rect x="1497.64" y="580.85" width="1.04" height="1.1" fill="#B5CEA8"/><rect x="1498.68" y="580.85" width="5.20" height="1.1" fill="#9CDCFE"/><rect x="1503.88" y="580.85" width="1.04" height="1.1" fill="#FFD700"/><rect x="1504.92" y="580.85" width="1.04" height="1.1" fill="#B5CEA8"/><rect x="1505.96" y="580.85" width="1.04" height="1.1" fill="#FFD700"/><rect x="1508.04" y="580.85" width="1.04" height="1.1" fill="#D4D4D4"/><rect x="1510.12" y="580.85" width="2.08" height="1.1" fill="#B5CEA8"/><rect x="1512.20" y="580.85" width="1.04" height="1.1" fill="#FFD700"/><rect x="1513.24" y="580.85" width="1.04" height="1.1" fill="#D4D4D4"/><rect x="1436.28" y="582.88" width="3.12" height="1.1" fill="#4EC9B0"/><rect x="1439.40" y="582.88" width="1.04" height="1.1" fill="#B5CEA8"/><rect x="1440.44" y="582.88" width="20.80" height="1.1" fill="#4FC1FF"/><rect x="1461.24" y="582.88" width="1.04" height="1.1" fill="#D4D4D4"/><rect x="1463.32" y="582.88" width="3.12" height="1.1" fill="#B5CEA8"/><rect x="1466.44" y="582.88" width="1.04" height="1.1" fill="#D4D4D4"/><rect x="1468.52" y="582.88" width="1.04" height="1.1" fill="#FFD700"/><rect x="1469.56" y="582.88" width="1.04" height="1.1" fill="#B5CEA8"/><rect x="1470.60" y="582.88" width="1.04" height="1.1" fill="#D4D4D4"/><rect x="1472.68" y="582.88" width="1.04" height="1.1" fill="#B5CEA8"/><rect x="1473.72" y="582.88" width="1.04" height="1.1" fill="#D4D4D4"/><rect x="1475.80" y="582.88" width="3.12" height="1.1" fill="#B5CEA8"/><rect x="1478.92" y="582.88" width="1.04" height="1.1" fill="#FFD700"/><rect x="1479.96" y="582.88" width="1.04" height="1.1" fill="#D4D4D4"/><rect x="1482.04" y="582.88" width="1.04" height="1.1" fill="#B5CEA8"/><rect x="1483.08" y="582.88" width="1.04" height="1.1" fill="#FFD700"/><rect x="1432.12" y="584.91" width="2.08" height="1.1" fill="#C586C0"/><rect x="1435.24" y="584.91" width="6.24" height="1.1" fill="#9CDCFE"/><rect x="1441.48" y="584.91" width="1.04" height="1.1" fill="#FFD700"/><rect x="1442.52" y="584.91" width="7.28" height="1.1" fill="#CE9178"/><rect x="1449.80" y="584.91" width="1.04" height="1.1" fill="#FFD700"/><rect x="1450.84" y="584.91" width="1.04" height="1.1" fill="#D4D4D4"/><rect x="1436.28" y="586.94" width="6.24" height="1.1" fill="#9CDCFE"/><rect x="1442.52" y="586.94" width="1.04" height="1.1" fill="#B5CEA8"/><rect x="1443.56" y="586.94" width="4.16" height="1.1" fill="#DCDCAA"/><rect x="1447.72" y="586.94" width="1.04" height="1.1" fill="#FFD700"/><rect x="1448.76" y="586.94" width="23.92" height="1.1" fill="#CE9178"/><rect x="1472.68" y="586.94" width="1.04" height="1.1" fill="#FFD700"/><rect x="1436.28" y="588.97" width="12.48" height="1.1" fill="#9CDCFE"/><rect x="1449.80" y="588.97" width="1.04" height="1.1" fill="#D4D4D4"/><rect x="1451.88" y="588.97" width="9.36" height="1.1" fill="#4EC9B0"/><rect x="1461.24" y="588.97" width="1.04" height="1.1" fill="#B5CEA8"/><rect x="1462.28" y="588.97" width="6.24" height="1.1" fill="#DCDCAA"/><rect x="1468.52" y="588.97" width="1.04" height="1.1" fill="#FFD700"/><rect x="1469.56" y="588.97" width="6.24" height="1.1" fill="#9CDCFE"/><rect x="1476.84" y="588.97" width="1.04" height="1.1" fill="#D4D4D4"/><rect x="1478.92" y="588.97" width="9.36" height="1.1" fill="#9CDCFE"/><rect x="1488.28" y="588.97" width="1.04" height="1.1" fill="#FFD700"/><rect x="1436.28" y="591.00" width="12.48" height="1.1" fill="#9CDCFE"/><rect x="1448.76" y="591.00" width="1.04" height="1.1" fill="#B5CEA8"/><rect x="1449.80" y="591.00" width="6.24" height="1.1" fill="#9CDCFE"/><rect x="1457.08" y="591.00" width="1.04" height="1.1" fill="#D4D4D4"/><rect x="1459.16" y="591.00" width="4.16" height="1.1" fill="#569CD6"/><rect x="1436.28" y="593.03" width="12.48" height="1.1" fill="#9CDCFE"/><rect x="1448.76" y="593.03" width="1.04" height="1.1" fill="#B5CEA8"/><rect x="1449.80" y="593.03" width="5.20" height="1.1" fill="#DCDCAA"/><rect x="1455.00" y="593.03" width="1.04" height="1.1" fill="#FFD700"/><rect x="1456.04" y="593.03" width="1.04" height="1.1" fill="#FFD700"/><rect x="1436.28" y="595.06" width="6.24" height="1.1" fill="#9CDCFE"/><rect x="1442.52" y="595.06" width="1.04" height="1.1" fill="#B5CEA8"/><rect x="1443.56" y="595.06" width="4.16" height="1.1" fill="#DCDCAA"/><rect x="1447.72" y="595.06" width="1.04" height="1.1" fill="#FFD700"/><rect x="1448.76" y="595.06" width="13.52" height="1.1" fill="#CE9178"/><rect x="1462.28" y="595.06" width="1.04" height="1.1" fill="#FFD700"/><rect x="1427.96" y="597.09" width="2.08" height="1.1" fill="#9CDCFE"/><rect x="1430.04" y="597.09" width="1.04" height="1.1" fill="#B5CEA8"/><rect x="1431.08" y="597.09" width="7.28" height="1.1" fill="#9CDCFE"/><rect x="1439.40" y="597.09" width="1.04" height="1.1" fill="#D4D4D4"/><rect x="1441.48" y="597.09" width="4.16" height="1.1" fill="#569CD6"/><rect x="1427.96" y="599.12" width="41.60" height="1.1" fill="#6A9955"/><rect x="1427.96" y="601.15" width="5.20" height="1.1" fill="#9CDCFE"/><rect x="1434.20" y="601.15" width="1.04" height="1.1" fill="#D4D4D4"/><rect x="1436.28" y="601.15" width="1.04" height="1.1" fill="#FFD700"/><rect x="1437.32" y="601.15" width="1.04" height="1.1" fill="#FFD700"/><rect x="1427.96" y="603.18" width="10.40" height="1.1" fill="#9CDCFE"/><rect x="1439.40" y="603.18" width="1.04" height="1.1" fill="#D4D4D4"/><rect x="1441.48" y="603.18" width="5.20" height="1.1" fill="#9CDCFE"/><rect x="1427.96" y="605.21" width="44.72" height="1.1" fill="#6A9955"/><rect x="1427.96" y="607.24" width="5.20" height="1.1" fill="#9CDCFE"/><rect x="1433.16" y="607.24" width="1.04" height="1.1" fill="#B5CEA8"/><rect x="1434.20" y="607.24" width="6.24" height="1.1" fill="#DCDCAA"/><rect x="1440.44" y="607.24" width="1.04" height="1.1" fill="#FFD700"/><rect x="1441.48" y="607.24" width="9.36" height="1.1" fill="#9CDCFE"/><rect x="1451.88" y="607.24" width="1.04" height="1.1" fill="#D4D4D4"/><rect x="1453.96" y="607.24" width="7.28" height="1.1" fill="#9CDCFE"/><rect x="1461.24" y="607.24" width="1.04" height="1.1" fill="#FFD700"/><rect x="1415.48" y="611.30" width="47.84" height="1.1" fill="#6A9955"/><rect x="1415.48" y="613.33" width="16.64" height="1.1" fill="#9CDCFE"/><rect x="1432.12" y="613.33" width="1.04" height="1.1" fill="#FFD700"/><rect x="1433.16" y="613.33" width="8.32" height="1.1" fill="#9CDCFE"/><rect x="1441.48" y="613.33" width="1.04" height="1.1" fill="#FFD700"/><rect x="1443.56" y="613.33" width="1.04" height="1.1" fill="#D4D4D4"/><rect x="1445.64" y="613.33" width="2.08" height="1.1" fill="#9CDCFE"/><rect x="1415.48" y="617.39" width="58.24" height="1.1" fill="#6A9955"/><rect x="1415.48" y="619.42" width="29.12" height="1.1" fill="#6A9955"/><rect x="1415.48" y="621.45" width="4.16" height="1.1" fill="#9CDCFE"/><rect x="1420.68" y="621.45" width="1.04" height="1.1" fill="#D4D4D4"/><rect x="1422.76" y="621.45" width="7.28" height="1.1" fill="#CE9178"/><rect x="1430.04" y="621.45" width="1.04" height="1.1" fill="#B5CEA8"/><rect x="1431.08" y="621.45" width="6.24" height="1.1" fill="#DCDCAA"/><rect x="1437.32" y="621.45" width="1.04" height="1.1" fill="#FFD700"/><rect x="1438.36" y="621.45" width="8.32" height="1.1" fill="#9CDCFE"/><rect x="1446.68" y="621.45" width="1.04" height="1.1" fill="#FFD700"/><rect x="1415.48" y="623.48" width="3.12" height="1.1" fill="#4EC9B0"/><rect x="1418.60" y="623.48" width="1.04" height="1.1" fill="#B5CEA8"/><rect x="1419.64" y="623.48" width="7.28" height="1.1" fill="#DCDCAA"/><rect x="1426.92" y="623.48" width="1.04" height="1.1" fill="#FFD700"/><rect x="1427.96" y="623.48" width="5.20" height="1.1" fill="#9CDCFE"/><rect x="1433.16" y="623.48" width="1.04" height="1.1" fill="#D4D4D4"/><rect x="1435.24" y="623.48" width="4.16" height="1.1" fill="#9CDCFE"/><rect x="1439.40" y="623.48" width="1.04" height="1.1" fill="#D4D4D4"/><rect x="1441.48" y="623.48" width="1.04" height="1.1" fill="#FFD700"/><rect x="1442.52" y="623.48" width="8.32" height="1.1" fill="#9CDCFE"/><rect x="1450.84" y="623.48" width="1.04" height="1.1" fill="#FFD700"/><rect x="1451.88" y="623.48" width="1.04" height="1.1" fill="#B5CEA8"/><rect x="1452.92" y="623.48" width="1.04" height="1.1" fill="#FFD700"/><rect x="1455.00" y="623.48" width="1.04" height="1.1" fill="#D4D4D4"/><rect x="1457.08" y="623.48" width="2.08" height="1.1" fill="#B5CEA8"/><rect x="1459.16" y="623.48" width="1.04" height="1.1" fill="#D4D4D4"/><rect x="1461.24" y="623.48" width="8.32" height="1.1" fill="#9CDCFE"/><rect x="1469.56" y="623.48" width="1.04" height="1.1" fill="#FFD700"/><rect x="1470.60" y="623.48" width="1.04" height="1.1" fill="#B5CEA8"/><rect x="1471.64" y="623.48" width="1.04" height="1.1" fill="#FFD700"/><rect x="1473.72" y="623.48" width="1.04" height="1.1" fill="#D4D4D4"/><rect x="1475.80" y="623.48" width="2.08" height="1.1" fill="#B5CEA8"/><rect x="1477.88" y="623.48" width="1.04" height="1.1" fill="#FFD700"/><rect x="1478.92" y="623.48" width="1.04" height="1.1" fill="#D4D4D4"/><rect x="1419.64" y="625.51" width="3.12" height="1.1" fill="#4EC9B0"/><rect x="1422.76" y="625.51" width="1.04" height="1.1" fill="#B5CEA8"/><rect x="1423.80" y="625.51" width="20.80" height="1.1" fill="#4FC1FF"/><rect x="1444.60" y="625.51" width="1.04" height="1.1" fill="#D4D4D4"/><rect x="1446.68" y="625.51" width="3.12" height="1.1" fill="#B5CEA8"/><rect x="1449.80" y="625.51" width="1.04" height="1.1" fill="#D4D4D4"/><rect x="1451.88" y="625.51" width="1.04" height="1.1" fill="#FFD700"/><rect x="1452.92" y="625.51" width="3.12" height="1.1" fill="#B5CEA8"/><rect x="1456.04" y="625.51" width="1.04" height="1.1" fill="#D4D4D4"/><rect x="1458.12" y="625.51" width="3.12" height="1.1" fill="#B5CEA8"/><rect x="1461.24" y="625.51" width="1.04" height="1.1" fill="#D4D4D4"/><rect x="1463.32" y="625.51" width="3.12" height="1.1" fill="#B5CEA8"/><rect x="1466.44" y="625.51" width="1.04" height="1.1" fill="#FFD700"/><rect x="1467.48" y="625.51" width="1.04" height="1.1" fill="#D4D4D4"/><rect x="1469.56" y="625.51" width="1.04" height="1.1" fill="#B5CEA8"/><rect x="1470.60" y="625.51" width="1.04" height="1.1" fill="#FFD700"/><rect x="1415.48" y="629.57" width="20.80" height="1.1" fill="#6A9955"/><rect x="1415.48" y="631.60" width="3.12" height="1.1" fill="#9CDCFE"/><rect x="1419.64" y="631.60" width="1.04" height="1.1" fill="#D4D4D4"/><rect x="1421.72" y="631.60" width="3.12" height="1.1" fill="#4EC9B0"/><rect x="1424.84" y="631.60" width="1.04" height="1.1" fill="#B5CEA8"/><rect x="1425.88" y="631.60" width="6.24" height="1.1" fill="#DCDCAA"/><rect x="1432.12" y="631.60" width="1.04" height="1.1" fill="#FFD700"/><rect x="1433.16" y="631.60" width="11.44" height="1.1" fill="#CE9178"/><rect x="1444.60" y="631.60" width="1.04" height="1.1" fill="#D4D4D4"/><rect x="1446.68" y="631.60" width="1.04" height="1.1" fill="#D4D4D4"/><rect x="1447.72" y="631.60" width="1.04" height="1.1" fill="#B5CEA8"/><rect x="1448.76" y="631.60" width="1.04" height="1.1" fill="#FFD700"/><rect x="1415.48" y="635.66" width="42.64" height="1.1" fill="#6A9955"/><rect x="1415.48" y="637.69" width="2.08" height="1.1" fill="#C586C0"/><rect x="1418.60" y="637.69" width="3.12" height="1.1" fill="#9CDCFE"/><rect x="1421.72" y="637.69" width="1.04" height="1.1" fill="#B5CEA8"/><rect x="1422.76" y="637.69" width="5.20" height="1.1" fill="#9CDCFE"/><rect x="1427.96" y="637.69" width="1.04" height="1.1" fill="#FFD700"/><rect x="1429.00" y="637.69" width="1.04" height="1.1" fill="#B5CEA8"/><rect x="1430.04" y="637.69" width="1.04" height="1.1" fill="#FFD700"/><rect x="1432.12" y="637.69" width="1.04" height="1.1" fill="#D4D4D4"/><rect x="1433.16" y="637.69" width="1.04" height="1.1" fill="#D4D4D4"/><rect x="1435.24" y="637.69" width="1.04" height="1.1" fill="#B5CEA8"/><rect x="1436.28" y="637.69" width="1.04" height="1.1" fill="#D4D4D4"/><rect x="1419.64" y="639.72" width="17.68" height="1.1" fill="#6A9955"/><rect x="1419.64" y="641.75" width="13.52" height="1.1" fill="#9CDCFE"/><rect x="1434.20" y="641.75" width="1.04" height="1.1" fill="#D4D4D4"/><rect x="1436.28" y="641.75" width="2.08" height="1.1" fill="#4EC9B0"/><rect x="1438.36" y="641.75" width="1.04" height="1.1" fill="#B5CEA8"/><rect x="1439.40" y="641.75" width="4.16" height="1.1" fill="#DCDCAA"/><rect x="1443.56" y="641.75" width="1.04" height="1.1" fill="#FFD700"/><rect x="1444.60" y="641.75" width="3.12" height="1.1" fill="#9CDCFE"/><rect x="1447.72" y="641.75" width="1.04" height="1.1" fill="#B5CEA8"/><rect x="1448.76" y="641.75" width="5.20" height="1.1" fill="#9CDCFE"/><rect x="1453.96" y="641.75" width="1.04" height="1.1" fill="#FFD700"/><rect x="1455.00" y="641.75" width="1.04" height="1.1" fill="#D4D4D4"/><rect x="1456.04" y="641.75" width="1.04" height="1.1" fill="#B5CEA8"/><rect x="1457.08" y="641.75" width="1.04" height="1.1" fill="#FFD700"/><rect x="1458.12" y="641.75" width="1.04" height="1.1" fill="#D4D4D4"/><rect x="1460.20" y="641.75" width="5.20" height="1.1" fill="#9CDCFE"/><rect x="1465.40" y="641.75" width="1.04" height="1.1" fill="#D4D4D4"/><rect x="1466.44" y="641.75" width="3.12" height="1.1" fill="#9CDCFE"/><rect x="1469.56" y="641.75" width="1.04" height="1.1" fill="#B5CEA8"/><rect x="1470.60" y="641.75" width="5.20" height="1.1" fill="#9CDCFE"/><rect x="1475.80" y="641.75" width="1.04" height="1.1" fill="#FFD700"/><rect x="1477.88" y="641.75" width="1.04" height="1.1" fill="#D4D4D4"/><rect x="1479.96" y="641.75" width="3.12" height="1.1" fill="#B5CEA8"/><rect x="1419.64" y="643.78" width="3.12" height="1.1" fill="#9CDCFE"/><rect x="1423.80" y="643.78" width="1.04" height="1.1" fill="#D4D4D4"/><rect x="1425.88" y="643.78" width="3.12" height="1.1" fill="#4EC9B0"/><rect x="1429.00" y="643.78" width="1.04" height="1.1" fill="#B5CEA8"/><rect x="1430.04" y="643.78" width="5.20" height="1.1" fill="#DCDCAA"/><rect x="1435.24" y="643.78" width="1.04" height="1.1" fill="#FFD700"/><rect x="1436.28" y="643.78" width="1.04" height="1.1" fill="#FFD700"/><rect x="1437.32" y="643.78" width="3.12" height="1.1" fill="#9CDCFE"/><rect x="1440.44" y="643.78" width="1.04" height="1.1" fill="#D4D4D4"/><rect x="1442.52" y="643.78" width="13.52" height="1.1" fill="#9CDCFE"/><rect x="1456.04" y="643.78" width="1.04" height="1.1" fill="#FFD700"/><rect x="1457.08" y="643.78" width="1.04" height="1.1" fill="#FFD700"/><rect x="1415.48" y="649.87" width="60.32" height="1.1" fill="#6A9955"/><rect x="1415.48" y="651.90" width="3.12" height="1.1" fill="#9CDCFE"/><rect x="1419.64" y="651.90" width="1.04" height="1.1" fill="#D4D4D4"/><rect x="1421.72" y="651.90" width="3.12" height="1.1" fill="#4EC9B0"/><rect x="1424.84" y="651.90" width="1.04" height="1.1" fill="#B5CEA8"/><rect x="1425.88" y="651.90" width="6.24" height="1.1" fill="#DCDCAA"/><rect x="1432.12" y="651.90" width="1.04" height="1.1" fill="#FFD700"/><rect x="1433.16" y="651.90" width="3.12" height="1.1" fill="#9CDCFE"/><rect x="1436.28" y="651.90" width="1.04" height="1.1" fill="#D4D4D4"/><rect x="1438.36" y="651.90" width="1.04" height="1.1" fill="#FFD700"/><rect x="1439.40" y="651.90" width="2.08" height="1.1" fill="#B5CEA8"/><rect x="1441.48" y="651.90" width="1.04" height="1.1" fill="#D4D4D4"/><rect x="1443.56" y="651.90" width="2.08" height="1.1" fill="#B5CEA8"/><rect x="1445.64" y="651.90" width="1.04" height="1.1" fill="#FFD700"/><rect x="1446.68" y="651.90" width="1.04" height="1.1" fill="#FFD700"/><rect x="1415.48" y="655.96" width="21.84" height="1.1" fill="#6A9955"/><rect x="1415.48" y="657.99" width="10.40" height="1.1" fill="#9CDCFE"/><rect x="1425.88" y="657.99" width="1.04" height="1.1" fill="#D4D4D4"/><rect x="1427.96" y="657.99" width="9.36" height="1.1" fill="#9CDCFE"/><rect x="1437.32" y="657.99" width="1.04" height="1.1" fill="#D4D4D4"/><rect x="1439.40" y="657.99" width="1.04" height="1.1" fill="#9CDCFE"/><rect x="1441.48" y="657.99" width="1.04" height="1.1" fill="#D4D4D4"/><rect x="1443.56" y="657.99" width="3.12" height="1.1" fill="#9CDCFE"/><rect x="1446.68" y="657.99" width="1.04" height="1.1" fill="#B5CEA8"/><rect x="1447.72" y="657.99" width="5.20" height="1.1" fill="#9CDCFE"/><rect x="1415.48" y="664.08" width="93.60" height="1.1" fill="#6A9955"/><rect x="1415.48" y="666.11" width="6.24" height="1.1" fill="#9CDCFE"/><rect x="1422.76" y="666.11" width="1.04" height="1.1" fill="#D4D4D4"/><rect x="1424.84" y="666.11" width="3.12" height="1.1" fill="#DCDCAA"/><rect x="1427.96" y="666.11" width="1.04" height="1.1" fill="#FFD700"/><rect x="1429.00" y="666.11" width="1.04" height="1.1" fill="#B5CEA8"/><rect x="1430.04" y="666.11" width="1.04" height="1.1" fill="#D4D4D4"/><rect x="1432.12" y="666.11" width="8.32" height="1.1" fill="#9CDCFE"/><rect x="1440.44" y="666.11" width="1.04" height="1.1" fill="#FFD700"/><rect x="1441.48" y="666.11" width="1.04" height="1.1" fill="#B5CEA8"/><rect x="1442.52" y="666.11" width="1.04" height="1.1" fill="#FFD700"/><rect x="1444.60" y="666.11" width="1.04" height="1.1" fill="#D4D4D4"/><rect x="1446.68" y="666.11" width="10.40" height="1.1" fill="#9CDCFE"/><rect x="1458.12" y="666.11" width="1.04" height="1.1" fill="#D4D4D4"/><rect x="1459.16" y="666.11" width="1.04" height="1.1" fill="#D4D4D4"/><rect x="1461.24" y="666.11" width="1.04" height="1.1" fill="#B5CEA8"/><rect x="1462.28" y="666.11" width="1.04" height="1.1" fill="#FFD700"/><rect x="1415.48" y="668.14" width="6.24" height="1.1" fill="#9CDCFE"/><rect x="1422.76" y="668.14" width="1.04" height="1.1" fill="#D4D4D4"/><rect x="1424.84" y="668.14" width="3.12" height="1.1" fill="#DCDCAA"/><rect x="1427.96" y="668.14" width="1.04" height="1.1" fill="#FFD700"/><rect x="1429.00" y="668.14" width="1.04" height="1.1" fill="#B5CEA8"/><rect x="1430.04" y="668.14" width="1.04" height="1.1" fill="#D4D4D4"/><rect x="1432.12" y="668.14" width="3.12" height="1.1" fill="#DCDCAA"/><rect x="1435.24" y="668.14" width="1.04" height="1.1" fill="#FFD700"/><rect x="1436.28" y="668.14" width="5.20" height="1.1" fill="#9CDCFE"/><rect x="1441.48" y="668.14" width="1.04" height="1.1" fill="#B5CEA8"/><rect x="1442.52" y="668.14" width="5.20" height="1.1" fill="#9CDCFE"/><rect x="1447.72" y="668.14" width="1.04" height="1.1" fill="#FFD700"/><rect x="1448.76" y="668.14" width="1.04" height="1.1" fill="#B5CEA8"/><rect x="1449.80" y="668.14" width="1.04" height="1.1" fill="#FFD700"/><rect x="1451.88" y="668.14" width="1.04" height="1.1" fill="#D4D4D4"/><rect x="1453.96" y="668.14" width="9.36" height="1.1" fill="#9CDCFE"/><rect x="1463.32" y="668.14" width="1.04" height="1.1" fill="#D4D4D4"/><rect x="1465.40" y="668.14" width="8.32" height="1.1" fill="#9CDCFE"/><rect x="1473.72" y="668.14" width="1.04" height="1.1" fill="#FFD700"/><rect x="1474.76" y="668.14" width="1.04" height="1.1" fill="#B5CEA8"/><rect x="1475.80" y="668.14" width="1.04" height="1.1" fill="#FFD700"/><rect x="1477.88" y="668.14" width="1.04" height="1.1" fill="#D4D4D4"/><rect x="1479.96" y="668.14" width="9.36" height="1.1" fill="#9CDCFE"/><rect x="1490.36" y="668.14" width="1.04" height="1.1" fill="#D4D4D4"/><rect x="1491.40" y="668.14" width="1.04" height="1.1" fill="#D4D4D4"/><rect x="1493.48" y="668.14" width="1.04" height="1.1" fill="#B5CEA8"/><rect x="1494.52" y="668.14" width="1.04" height="1.1" fill="#FFD700"/><rect x="1495.56" y="668.14" width="1.04" height="1.1" fill="#FFD700"/><rect x="1415.48" y="670.17" width="97.76" height="1.1" fill="#6A9955"/><rect x="1415.48" y="672.20" width="4.16" height="1.1" fill="#9CDCFE"/><rect x="1420.68" y="672.20" width="1.04" height="1.1" fill="#D4D4D4"/><rect x="1422.76" y="672.20" width="3.12" height="1.1" fill="#DCDCAA"/><rect x="1425.88" y="672.20" width="1.04" height="1.1" fill="#FFD700"/><rect x="1426.92" y="672.20" width="5.20" height="1.1" fill="#9CDCFE"/><rect x="1432.12" y="672.20" width="1.04" height="1.1" fill="#B5CEA8"/><rect x="1433.16" y="672.20" width="5.20" height="1.1" fill="#9CDCFE"/><rect x="1438.36" y="672.20" width="1.04" height="1.1" fill="#FFD700"/><rect x="1439.40" y="672.20" width="1.04" height="1.1" fill="#B5CEA8"/><rect x="1440.44" y="672.20" width="1.04" height="1.1" fill="#FFD700"/><rect x="1441.48" y="672.20" width="1.04" height="1.1" fill="#D4D4D4"/><rect x="1443.56" y="672.20" width="6.24" height="1.1" fill="#9CDCFE"/><rect x="1450.84" y="672.20" width="1.04" height="1.1" fill="#D4D4D4"/><rect x="1452.92" y="672.20" width="9.36" height="1.1" fill="#9CDCFE"/><rect x="1462.28" y="672.20" width="1.04" height="1.1" fill="#FFD700"/><rect x="1415.48" y="674.23" width="4.16" height="1.1" fill="#9CDCFE"/><rect x="1420.68" y="674.23" width="1.04" height="1.1" fill="#D4D4D4"/><rect x="1422.76" y="674.23" width="3.12" height="1.1" fill="#DCDCAA"/><rect x="1425.88" y="674.23" width="1.04" height="1.1" fill="#FFD700"/><rect x="1426.92" y="674.23" width="5.20" height="1.1" fill="#9CDCFE"/><rect x="1432.12" y="674.23" width="1.04" height="1.1" fill="#B5CEA8"/><rect x="1433.16" y="674.23" width="5.20" height="1.1" fill="#9CDCFE"/><rect x="1438.36" y="674.23" width="1.04" height="1.1" fill="#FFD700"/><rect x="1439.40" y="674.23" width="1.04" height="1.1" fill="#B5CEA8"/><rect x="1440.44" y="674.23" width="1.04" height="1.1" fill="#FFD700"/><rect x="1441.48" y="674.23" width="1.04" height="1.1" fill="#D4D4D4"/><rect x="1443.56" y="674.23" width="6.24" height="1.1" fill="#9CDCFE"/><rect x="1450.84" y="674.23" width="1.04" height="1.1" fill="#D4D4D4"/><rect x="1452.92" y="674.23" width="10.40" height="1.1" fill="#9CDCFE"/><rect x="1463.32" y="674.23" width="1.04" height="1.1" fill="#FFD700"/><rect x="1415.48" y="680.32" width="82.16" height="1.1" fill="#6A9955"/><rect x="1415.48" y="682.35" width="3.12" height="1.1" fill="#9CDCFE"/><rect x="1419.64" y="682.35" width="1.04" height="1.1" fill="#D4D4D4"/><rect x="1421.72" y="682.35" width="3.12" height="1.1" fill="#9CDCFE"/><rect x="1424.84" y="682.35" width="1.04" height="1.1" fill="#FFD700"/><rect x="1425.88" y="682.35" width="1.04" height="1.1" fill="#D4D4D4"/><rect x="1426.92" y="682.35" width="4.16" height="1.1" fill="#9CDCFE"/><rect x="1431.08" y="682.35" width="1.04" height="1.1" fill="#D4D4D4"/><rect x="1432.12" y="682.35" width="6.24" height="1.1" fill="#9CDCFE"/><rect x="1438.36" y="682.35" width="1.04" height="1.1" fill="#D4D4D4"/><rect x="1440.44" y="682.35" width="1.04" height="1.1" fill="#D4D4D4"/><rect x="1441.48" y="682.35" width="4.16" height="1.1" fill="#9CDCFE"/><rect x="1445.64" y="682.35" width="1.04" height="1.1" fill="#D4D4D4"/><rect x="1446.68" y="682.35" width="6.24" height="1.1" fill="#9CDCFE"/><rect x="1452.92" y="682.35" width="1.04" height="1.1" fill="#FFD700"/><rect x="1415.48" y="684.38" width="11.44" height="1.1" fill="#9CDCFE"/><rect x="1427.96" y="684.38" width="1.04" height="1.1" fill="#D4D4D4"/><rect x="1430.04" y="684.38" width="5.20" height="1.1" fill="#9CDCFE"/><rect x="1435.24" y="684.38" width="1.04" height="1.1" fill="#FFD700"/><rect x="1436.28" y="684.38" width="6.24" height="1.1" fill="#9CDCFE"/><rect x="1442.52" y="684.38" width="1.04" height="1.1" fill="#D4D4D4"/><rect x="1443.56" y="684.38" width="4.16" height="1.1" fill="#9CDCFE"/><rect x="1447.72" y="684.38" width="1.04" height="1.1" fill="#D4D4D4"/><rect x="1449.80" y="684.38" width="6.24" height="1.1" fill="#9CDCFE"/><rect x="1456.04" y="684.38" width="1.04" height="1.1" fill="#D4D4D4"/><rect x="1457.08" y="684.38" width="4.16" height="1.1" fill="#9CDCFE"/><rect x="1461.24" y="684.38" width="1.04" height="1.1" fill="#FFD700"/><rect x="1415.48" y="688.44" width="57.20" height="1.1" fill="#6A9955"/><rect x="1415.48" y="690.47" width="3.12" height="1.1" fill="#C586C0"/><rect x="1419.64" y="690.47" width="1.04" height="1.1" fill="#9CDCFE"/><rect x="1421.72" y="690.47" width="2.08" height="1.1" fill="#C586C0"/><rect x="1424.84" y="690.47" width="5.20" height="1.1" fill="#DCDCAA"/><rect x="1430.04" y="690.47" width="1.04" height="1.1" fill="#FFD700"/><rect x="1431.08" y="690.47" width="1.04" height="1.1" fill="#B5CEA8"/><rect x="1432.12" y="690.47" width="1.04" height="1.1" fill="#D4D4D4"/><rect x="1434.20" y="690.47" width="1.04" height="1.1" fill="#B5CEA8"/><rect x="1435.24" y="690.47" width="1.04" height="1.1" fill="#FFD700"/><rect x="1436.28" y="690.47" width="1.04" height="1.1" fill="#D4D4D4"/><rect x="1419.64" y="692.50" width="11.44" height="1.1" fill="#9CDCFE"/><rect x="1431.08" y="692.50" width="1.04" height="1.1" fill="#FFD700"/><rect x="1432.12" y="692.50" width="1.04" height="1.1" fill="#D4D4D4"/><rect x="1433.16" y="692.50" width="1.04" height="1.1" fill="#D4D4D4"/><rect x="1435.24" y="692.50" width="1.04" height="1.1" fill="#D4D4D4"/><rect x="1436.28" y="692.50" width="1.04" height="1.1" fill="#D4D4D4"/><rect x="1438.36" y="692.50" width="1.04" height="1.1" fill="#9CDCFE"/><rect x="1439.40" y="692.50" width="1.04" height="1.1" fill="#FFD700"/><rect x="1441.48" y="692.50" width="1.04" height="1.1" fill="#D4D4D4"/><rect x="1443.56" y="692.50" width="3.12" height="1.1" fill="#9CDCFE"/><rect x="1446.68" y="692.50" width="1.04" height="1.1" fill="#FFD700"/><rect x="1447.72" y="692.50" width="1.04" height="1.1" fill="#D4D4D4"/><rect x="1448.76" y="692.50" width="1.04" height="1.1" fill="#D4D4D4"/><rect x="1450.84" y="692.50" width="1.04" height="1.1" fill="#D4D4D4"/><rect x="1451.88" y="692.50" width="1.04" height="1.1" fill="#D4D4D4"/><rect x="1453.96" y="692.50" width="1.04" height="1.1" fill="#9CDCFE"/><rect x="1455.00" y="692.50" width="1.04" height="1.1" fill="#FFD700"/><rect x="1457.08" y="692.50" width="1.04" height="1.1" fill="#D4D4D4"/><rect x="1459.16" y="692.50" width="1.04" height="1.1" fill="#FFD700"/><rect x="1460.20" y="692.50" width="3.12" height="1.1" fill="#9CDCFE"/><rect x="1463.32" y="692.50" width="1.04" height="1.1" fill="#FFD700"/><rect x="1464.36" y="692.50" width="1.04" height="1.1" fill="#D4D4D4"/><rect x="1465.40" y="692.50" width="1.04" height="1.1" fill="#D4D4D4"/><rect x="1467.48" y="692.50" width="1.04" height="1.1" fill="#D4D4D4"/><rect x="1468.52" y="692.50" width="1.04" height="1.1" fill="#D4D4D4"/><rect x="1470.60" y="692.50" width="1.04" height="1.1" fill="#B5CEA8"/><rect x="1471.64" y="692.50" width="1.04" height="1.1" fill="#FFD700"/><rect x="1473.72" y="692.50" width="1.04" height="1.1" fill="#D4D4D4"/><rect x="1475.80" y="692.50" width="5.20" height="1.1" fill="#B5CEA8"/><rect x="1481.00" y="692.50" width="1.04" height="1.1" fill="#FFD700"/><rect x="1483.08" y="692.50" width="1.04" height="1.1" fill="#D4D4D4"/><rect x="1485.16" y="692.50" width="11.44" height="1.1" fill="#9CDCFE"/><rect x="1496.60" y="692.50" width="1.04" height="1.1" fill="#FFD700"/><rect x="1497.64" y="692.50" width="1.04" height="1.1" fill="#D4D4D4"/><rect x="1498.68" y="692.50" width="1.04" height="1.1" fill="#D4D4D4"/><rect x="1500.76" y="692.50" width="1.04" height="1.1" fill="#D4D4D4"/><rect x="1501.80" y="692.50" width="1.04" height="1.1" fill="#D4D4D4"/><rect x="1503.88" y="692.50" width="1.04" height="1.1" fill="#9CDCFE"/><rect x="1504.92" y="692.50" width="1.04" height="1.1" fill="#FFD700"/><rect x="1507.00" y="692.50" width="1.04" height="1.1" fill="#D4D4D4"/><rect x="1509.08" y="692.50" width="1.04" height="1.1" fill="#FFD700"/><rect x="1510.12" y="692.50" width="3.12" height="1.1" fill="#B5CEA8"/><rect x="1514.28" y="692.50" width="1.04" height="1.1" fill="#D4D4D4"/><rect x="1516.36" y="692.50" width="3.12" height="1.1" fill="#9CDCFE"/><rect x="1519.48" y="692.50" width="0.52" height="1.1" fill="#FFD700"/><rect x="1415.48" y="700.62" width="40.56" height="1.1" fill="#6A9955"/><rect x="1415.48" y="702.65" width="72.80" height="1.1" fill="#6A9955"/><rect x="1415.48" y="714.83" width="72.80" height="1.1" fill="#6A9955"/><rect x="1411.32" y="716.86" width="71.76" height="1.1" fill="#6A9955"/><rect x="1411.32" y="718.89" width="11.44" height="1.1" fill="#9CDCFE"/><rect x="1423.80" y="718.89" width="1.04" height="1.1" fill="#D4D4D4"/><rect x="1425.88" y="718.89" width="1.04" height="1.1" fill="#FFD700"/><rect x="1411.32" y="720.92" width="1.04" height="1.1" fill="#FFD700"/><rect x="1412.36" y="720.92" width="6.24" height="1.1" fill="#CE9178"/><rect x="1418.60" y="720.92" width="1.04" height="1.1" fill="#D4D4D4"/><rect x="1420.68" y="720.92" width="7.28" height="1.1" fill="#9CDCFE"/><rect x="1427.96" y="720.92" width="1.04" height="1.1" fill="#FFD700"/><rect x="1429.00" y="720.92" width="1.04" height="1.1" fill="#D4D4D4"/><rect x="1411.32" y="722.95" width="1.04" height="1.1" fill="#FFD700"/><rect x="1412.36" y="722.95" width="7.28" height="1.1" fill="#CE9178"/><rect x="1419.64" y="722.95" width="1.04" height="1.1" fill="#D4D4D4"/><rect x="1421.72" y="722.95" width="9.36" height="1.1" fill="#9CDCFE"/><rect x="1431.08" y="722.95" width="1.04" height="1.1" fill="#FFD700"/><rect x="1432.12" y="722.95" width="1.04" height="1.1" fill="#D4D4D4"/><rect x="1411.32" y="724.98" width="1.04" height="1.1" fill="#FFD700"/><rect x="1412.36" y="724.98" width="8.32" height="1.1" fill="#CE9178"/><rect x="1420.68" y="724.98" width="1.04" height="1.1" fill="#D4D4D4"/><rect x="1422.76" y="724.98" width="6.24" height="1.1" fill="#9CDCFE"/><rect x="1429.00" y="724.98" width="1.04" height="1.1" fill="#FFD700"/><rect x="1430.04" y="724.98" width="1.04" height="1.1" fill="#D4D4D4"/><rect x="1411.32" y="727.01" width="1.04" height="1.1" fill="#FFD700"/><rect x="1411.32" y="733.10" width="10.40" height="1.1" fill="#9CDCFE"/><rect x="1422.76" y="733.10" width="1.04" height="1.1" fill="#D4D4D4"/><rect x="1424.84" y="733.10" width="1.04" height="1.1" fill="#FFD700"/><rect x="1411.32" y="735.13" width="1.04" height="1.1" fill="#FFD700"/><rect x="1412.36" y="735.13" width="21.84" height="1.1" fill="#CE9178"/><rect x="1434.20" y="735.13" width="1.04" height="1.1" fill="#D4D4D4"/><rect x="1436.28" y="735.13" width="4.16" height="1.1" fill="#CE9178"/><rect x="1440.44" y="735.13" width="1.04" height="1.1" fill="#B5CEA8"/><rect x="1441.48" y="735.13" width="4.16" height="1.1" fill="#DCDCAA"/><rect x="1445.64" y="735.13" width="1.04" height="1.1" fill="#FFD700"/><rect x="1446.68" y="735.13" width="3.12" height="1.1" fill="#DCDCAA"/><rect x="1449.80" y="735.13" width="1.04" height="1.1" fill="#FFD700"/><rect x="1450.84" y="735.13" width="3.12" height="1.1" fill="#9CDCFE"/><rect x="1453.96" y="735.13" width="1.04" height="1.1" fill="#D4D4D4"/><rect x="1456.04" y="735.13" width="5.20" height="1.1" fill="#9CDCFE"/><rect x="1461.24" y="735.13" width="1.04" height="1.1" fill="#FFD700"/><rect x="1462.28" y="735.13" width="1.04" height="1.1" fill="#FFD700"/><rect x="1463.32" y="735.13" width="1.04" height="1.1" fill="#FFD700"/><rect x="1464.36" y="735.13" width="1.04" height="1.1" fill="#D4D4D4"/><rect x="1411.32" y="737.16" width="1.04" height="1.1" fill="#FFD700"/><rect x="1411.32" y="745.28" width="20.80" height="1.1" fill="#6A9955"/><rect x="1411.32" y="747.31" width="3.12" height="1.1" fill="#C586C0"/><rect x="1415.48" y="747.31" width="1.04" height="1.1" fill="#FFD700"/><rect x="1416.52" y="747.31" width="1.04" height="1.1" fill="#9CDCFE"/><rect x="1417.56" y="747.31" width="1.04" height="1.1" fill="#D4D4D4"/><rect x="1419.64" y="747.31" width="1.04" height="1.1" fill="#FFD700"/><rect x="1420.68" y="747.31" width="1.04" height="1.1" fill="#9CDCFE"/><rect x="1421.72" y="747.31" width="1.04" height="1.1" fill="#D4D4D4"/><rect x="1423.80" y="747.31" width="1.04" height="1.1" fill="#9CDCFE"/><rect x="1424.84" y="747.31" width="1.04" height="1.1" fill="#FFD700"/><rect x="1425.88" y="747.31" width="1.04" height="1.1" fill="#FFD700"/><rect x="1427.96" y="747.31" width="2.08" height="1.1" fill="#C586C0"/><rect x="1431.08" y="747.31" width="9.36" height="1.1" fill="#DCDCAA"/><rect x="1440.44" y="747.31" width="1.04" height="1.1" fill="#FFD700"/><rect x="1441.48" y="747.31" width="11.44" height="1.1" fill="#9CDCFE"/><rect x="1452.92" y="747.31" width="1.04" height="1.1" fill="#FFD700"/><rect x="1453.96" y="747.31" width="1.04" height="1.1" fill="#D4D4D4"/><rect x="1415.48" y="749.34" width="4.16" height="1.1" fill="#9CDCFE"/><rect x="1420.68" y="749.34" width="1.04" height="1.1" fill="#D4D4D4"/><rect x="1422.76" y="749.34" width="8.32" height="1.1" fill="#CE9178"/><rect x="1431.08" y="749.34" width="1.04" height="1.1" fill="#B5CEA8"/><rect x="1432.12" y="749.34" width="6.24" height="1.1" fill="#DCDCAA"/><rect x="1438.36" y="749.34" width="1.04" height="1.1" fill="#FFD700"/><rect x="1439.40" y="749.34" width="1.04" height="1.1" fill="#9CDCFE"/><rect x="1440.44" y="749.34" width="1.04" height="1.1" fill="#D4D4D4"/><rect x="1442.52" y="749.34" width="1.04" height="1.1" fill="#9CDCFE"/><rect x="1443.56" y="749.34" width="1.04" height="1.1" fill="#FFD700"/><rect x="1415.48" y="751.37" width="3.12" height="1.1" fill="#4EC9B0"/><rect x="1418.60" y="751.37" width="1.04" height="1.1" fill="#B5CEA8"/><rect x="1419.64" y="751.37" width="7.28" height="1.1" fill="#DCDCAA"/><rect x="1426.92" y="751.37" width="1.04" height="1.1" fill="#FFD700"/><rect x="1427.96" y="751.37" width="5.20" height="1.1" fill="#9CDCFE"/><rect x="1433.16" y="751.37" width="1.04" height="1.1" fill="#D4D4D4"/><rect x="1435.24" y="751.37" width="4.16" height="1.1" fill="#9CDCFE"/><rect x="1439.40" y="751.37" width="1.04" height="1.1" fill="#D4D4D4"/><rect x="1441.48" y="751.37" width="1.04" height="1.1" fill="#FFD700"/><rect x="1442.52" y="751.37" width="2.08" height="1.1" fill="#B5CEA8"/><rect x="1444.60" y="751.37" width="1.04" height="1.1" fill="#D4D4D4"/><rect x="1446.68" y="751.37" width="1.04" height="1.1" fill="#4FC1FF"/><rect x="1448.76" y="751.37" width="1.04" height="1.1" fill="#D4D4D4"/><rect x="1450.84" y="751.37" width="1.04" height="1.1" fill="#FFD700"/><rect x="1451.88" y="751.37" width="1.04" height="1.1" fill="#FFD700"/><rect x="1452.92" y="751.37" width="1.04" height="1.1" fill="#9CDCFE"/><rect x="1455.00" y="751.37" width="1.04" height="1.1" fill="#D4D4D4"/><rect x="1457.08" y="751.37" width="2.08" height="1.1" fill="#B5CEA8"/><rect x="1459.16" y="751.37" width="1.04" height="1.1" fill="#FFD700"/><rect x="1461.24" y="751.37" width="1.04" height="1.1" fill="#D4D4D4"/><rect x="1463.32" y="751.37" width="2.08" height="1.1" fill="#B5CEA8"/><rect x="1465.40" y="751.37" width="1.04" height="1.1" fill="#FFD700"/><rect x="1466.44" y="751.37" width="1.04" height="1.1" fill="#FFD700"/><rect x="1467.48" y="751.37" width="1.04" height="1.1" fill="#D4D4D4"/><rect x="1469.56" y="751.37" width="3.12" height="1.1" fill="#4EC9B0"/><rect x="1472.68" y="751.37" width="1.04" height="1.1" fill="#B5CEA8"/><rect x="1473.72" y="751.37" width="20.80" height="1.1" fill="#4FC1FF"/><rect x="1494.52" y="751.37" width="1.04" height="1.1" fill="#D4D4D4"/><rect x="1496.60" y="751.37" width="3.12" height="1.1" fill="#B5CEA8"/><rect x="1499.72" y="751.37" width="1.04" height="1.1" fill="#D4D4D4"/><rect x="1501.80" y="751.37" width="1.04" height="1.1" fill="#FFD700"/><rect x="1502.84" y="751.37" width="1.04" height="1.1" fill="#B5CEA8"/><rect x="1503.88" y="751.37" width="1.04" height="1.1" fill="#D4D4D4"/><rect x="1505.96" y="751.37" width="1.04" height="1.1" fill="#B5CEA8"/><rect x="1507.00" y="751.37" width="1.04" height="1.1" fill="#D4D4D4"/><rect x="1509.08" y="751.37" width="1.04" height="1.1" fill="#B5CEA8"/><rect x="1510.12" y="751.37" width="1.04" height="1.1" fill="#FFD700"/><rect x="1511.16" y="751.37" width="1.04" height="1.1" fill="#D4D4D4"/><rect x="1513.24" y="751.37" width="1.04" height="1.1" fill="#B5CEA8"/><rect x="1514.28" y="751.37" width="1.04" height="1.1" fill="#FFD700"/><rect x="1411.32" y="755.43" width="20.80" height="1.1" fill="#6A9955"/><rect x="1411.32" y="759.49" width="43.68" height="1.1" fill="#6A9955"/><rect x="1411.32" y="761.52" width="34.32" height="1.1" fill="#6A9955"/><rect x="1411.32" y="763.55" width="108.68" height="1.1" fill="#6A9955"/><rect x="1411.32" y="769.64" width="50.96" height="1.1" fill="#6A9955"/><rect x="1411.32" y="771.67" width="2.08" height="1.1" fill="#C586C0"/><rect x="1414.44" y="771.67" width="6.24" height="1.1" fill="#9CDCFE"/><rect x="1420.68" y="771.67" width="1.04" height="1.1" fill="#FFD700"/><rect x="1421.72" y="771.67" width="5.20" height="1.1" fill="#CE9178"/><rect x="1426.92" y="771.67" width="1.04" height="1.1" fill="#FFD700"/><rect x="1427.96" y="771.67" width="1.04" height="1.1" fill="#D4D4D4"/><rect x="1415.48" y="773.70" width="8.32" height="1.1" fill="#DCDCAA"/><rect x="1423.80" y="773.70" width="1.04" height="1.1" fill="#FFD700"/><rect x="1424.84" y="773.70" width="7.28" height="1.1" fill="#9CDCFE"/><rect x="1432.12" y="773.70" width="1.04" height="1.1" fill="#D4D4D4"/><rect x="1434.20" y="773.70" width="7.28" height="1.1" fill="#9CDCFE"/><rect x="1441.48" y="773.70" width="1.04" height="1.1" fill="#D4D4D4"/><rect x="1443.56" y="773.70" width="8.32" height="1.1" fill="#9CDCFE"/><rect x="1451.88" y="773.70" width="1.04" height="1.1" fill="#D4D4D4"/><rect x="1453.96" y="773.70" width="8.32" height="1.1" fill="#9CDCFE"/><rect x="1462.28" y="773.70" width="1.04" height="1.1" fill="#FFD700"/></g><rect x="1521.5" y="62" width="1" height="716" fill="#161616"/><rect x="1531" y="62.6" width="4" height="33.5" fill="#d4b84a"/><rect x="1522.5" y="296.3" width="13" height="2" fill="#9a9a9a"/></svg>
  <div class="hl" style="left:354px;top:778px;width:1182px"></div>
<div class="t" style="left:374.20px;top:792.09px;font-size:11.0px;color:#9d9d9d;font-family:"Liberation Sans",sans-serif;">PROBLEMS</div>
<div class="t" style="left:486.70px;top:792.09px;font-size:11.0px;color:#9d9d9d;font-family:"Liberation Sans",sans-serif;">OUTPUT</div>
<div class="t" style="left:557.80px;top:792.09px;font-size:11.0px;color:#9d9d9d;font-family:"Liberation Sans",sans-serif;">DEBUG CONSOLE</div>
<div class="t" style="left:679.30px;top:792.09px;font-size:11.0px;color:#e7e7e7;font-family:"Liberation Sans",sans-serif;">TERMINAL</div>
<div class="t" style="left:760.20px;top:792.09px;font-size:11.0px;color:#9d9d9d;font-family:"Liberation Sans",sans-serif;">PORTS</div>
<div class="t" style="left:822.70px;top:792.09px;font-size:11.0px;color:#9d9d9d;font-family:"Liberation Sans",sans-serif;">COMMENTS</div>
<div class="badge" style="left:445.9px;top:787.6px;width:18px;height:18px;border-radius:9px;background:#616161;font-size:11px;line-height:18px;font-weight:normal">9</div>
<div class="r" style="left:676.6px;top:808.3px;width:61.3px;height:1.3px;background:#2f7bd0;"></div>
<svg style="left:1308px;top:787px;" width="18" height="18" viewBox="1308 787 18 18"><g fill="none" stroke="#c5c5c5" stroke-width="1.1"><rect x="1310.5" y="789.5" width="13.5" height="13.5" rx="1.2"/><path d="M1313.2 793.2l2.6 2.4-2.6 2.4M1317 799.2h4"/></g></svg>
<div class="t" style="left:1329.40px;top:790.30px;font-size:12.4px;color:#cccccc;font-family:"Liberation Sans",sans-serif;">zsh</div>
<svg style="left:1357px;top:788px;" width="18" height="18" viewBox="1357 788 18 18"><path d="M1366.3 789.8v13.2M1359.7 796.4h13.2" fill="none" stroke="#c5c5c5" stroke-width="1.1"/></svg>
<svg style="left:1378px;top:792px;" width="10" height="8" viewBox="1378 792 10 8"><path d="M1380 794.4l3.4 3.4 3.4-3.4" fill="none" stroke="#c5c5c5" stroke-width="1"/></svg>
<svg style="left:1398px;top:788px;" width="18" height="18" viewBox="1398 788 18 18"><g fill="none" stroke="#c5c5c5" stroke-width="1.1"><rect x="1400.4" y="790" width="13.5" height="13.3" rx="1"/><path d="M1407.1 790v13.3"/></g></svg>
<svg style="left:1424px;top:788px;" width="18" height="18" viewBox="1424 788 18 18"><g fill="none" stroke="#c5c5c5" stroke-width="1.1"><path d="M1426.8 791.5h11.4M1430.5 791.5v-1.6h4v1.6M1428.2 791.5l.8 11.3h7l.8-11.3M1431.2 794v6.5M1433.8 794v6.5"/></g></svg>
<svg style="left:1450px;top:792px;" width="20" height="8" viewBox="1450 792 20 8"><g fill="#c5c5c5"><circle cx="1453.8" cy="796.3" r="1.05"/><circle cx="1459.6" cy="796.3" r="1.05"/><circle cx="1465.4" cy="796.3" r="1.05"/></g></svg>
<svg style="left:1478px;top:790px;" width="16" height="12" viewBox="1478 790 16 12"><path d="M1480.6 799.2l5.6-5.6 5.6 5.6" fill="none" stroke="#c5c5c5" stroke-width="1.1"/></svg>
<svg style="left:1504px;top:789px;" width="16" height="16" viewBox="1504 789 16 16"><path d="M1507.6 791.6l10 10M1517.6 791.6l-10 10" fill="none" stroke="#c5c5c5" stroke-width="1.1"/></svg>
<svg style="left:359px;top:826px;" width="12" height="12" viewBox="359 826 12 12"><circle cx="365" cy="832.6" r="3.6" fill="none" stroke="#7a7a7a" stroke-width="1.1"/></svg>
<div class="t mono" style="left:374.0px;top:824.20px;height:18px;line-height:18px;font-size:11.95px;color:#cccccc">baldacchino_admin@Shanes-MacBook-Pro scripts %</div>
<div class="r" style="left:1526px;top:824.5px;width:3px;height:7px;background:#5a5a5a;"></div>
  <div class="hl" style="left:0;top:855px;width:1536px;background:#141414"></div>
  <div class="hl" style="left:0;top:856.3px;width:1536px;height:1.4px;background:#252525"></div>
<div class="r" style="left:0px;top:857px;width:29px;height:22px;background:#2f78cc;border-bottom-left-radius:4px"></div>
<svg style="left:4px;top:858px;" width="22" height="20" viewBox="4 858 22 20"><g fill="none" stroke="#ffffff" stroke-width="1.1"><path d="M7 865l3.8 3.9-3.8 3.9M15.6 861.6l-4 3.9 4 3.8"/></g></svg>
<svg style="left:34px;top:859px;" width="16" height="18" viewBox="34 859 16 18"><g fill="none" stroke="#cccccc" stroke-width="1.05"><circle cx="38.6" cy="862.6" r="1.7"/><circle cx="38.6" cy="872.5" r="1.7"/><circle cx="44.7" cy="865.2" r="1.7"/><path d="M38.6 864.3v6.5M44.7 866.9c0 2.6-2.8 3.4-6 4.4"/></g></svg>
<div class="t" style="left:52.70px;top:861.43px;font-size:13.2px;color:#cccccc;font-family:"Liberation Sans",sans-serif;">main*</div>
<svg style="left:90px;top:859px;" width="18" height="18" viewBox="90 859 18 18"><g fill="none" stroke="#cccccc" stroke-width="1.1"><path d="M93.5 866.4a5.6 5.6 0 0 1 10.3-1.6M104.6 869.4a5.6 5.6 0 0 1-10.3 1.6"/><path d="M104.2 862.2v2.9h-2.9M93.8 873.7v-2.9h2.9"/></g></svg>
<svg style="left:119px;top:860px;" width="17" height="17" viewBox="119 860 17 17"><g fill="none" stroke="#cccccc" stroke-width="1.05"><circle cx="127.5" cy="867.9" r="6.2"/><path d="M125.1 865.5l4.8 4.8M129.9 865.5l-4.8 4.8"/></g></svg>
<div class="t" style="left:138.20px;top:861.43px;font-size:13.2px;color:#cccccc;font-family:"Liberation Sans",sans-serif;">0</div>
<svg style="left:148px;top:860px;" width="17" height="16" viewBox="148 860 17 16"><g fill="none" stroke="#cccccc" stroke-width="1.05" stroke-linejoin="round"><path d="M156.4 861.4l6.4 11.7h-12.8z"/><path d="M156.4 865.6v3.8"/></g><circle cx="156.4" cy="871.2" r=".6" fill="#cccccc"/></svg>
<div class="t" style="left:167.00px;top:861.43px;font-size:13.2px;color:#cccccc;font-family:"Liberation Sans",sans-serif;">9</div>
<svg style="left:190px;top:859px;" width="17" height="17" viewBox="190 859 17 17"><g fill="none" stroke="#cccccc" stroke-width="1.05"><circle cx="198.5" cy="865.4" r="1.2"/><path d="M198.5 866.6l-2.8 6.8M198.5 866.6l2.8 6.8M196.6 870.5h3.8M194.3 862a5 5 0 0 0 0 7M202.7 862a5 5 0 0 1 0 7M192.6 860.8a7 7 0 0 0 0 9.4M204.4 860.8a7 7 0 0 1 0 9.4"/></g></svg>
<div class="t" style="left:209.00px;top:861.43px;font-size:13.2px;color:#cccccc;font-family:"Liberation Sans",sans-serif;">0</div>
<div class="t" style="left:907.00px;top:861.43px;font-size:13.2px;color:#cccccc;font-family:"Liberation Sans",sans-serif;">Ln 161, Col 9 (247 selected)</div>
<div class="t" style="left:1089.60px;top:861.43px;font-size:13.2px;color:#cccccc;font-family:"Liberation Sans",sans-serif;">Tab Size: 4</div>
<div class="t" style="left:1169.20px;top:861.43px;font-size:13.2px;color:#cccccc;font-family:"Liberation Sans",sans-serif;">UTF-8</div>
<div class="t" style="left:1223.00px;top:861.43px;font-size:13.2px;color:#cccccc;font-family:"Liberation Sans",sans-serif;">LF</div>
<svg style="left:1250px;top:860px;" width="18" height="16" viewBox="1250 860 18 16"><g fill="none" stroke="#cccccc" stroke-width="1"><path d="M1256.6 862.6c-1.6 0-2 .6-2 1.8v1.6c0 1-.5 1.6-1.5 1.6 1 0 1.5.6 1.5 1.6v1.6c0 1.2.4 1.8 2 1.8"/><path d="M1258.6 862.6c1.4 0 1.9.6 1.9 1.8v1.6c0 .9.3 1.3.9 1.5"/></g><circle cx="1262.4" cy="871.3" r="2.5" fill="#cccccc"/></svg>
<div class="t" style="left:1271.40px;top:861.43px;font-size:13.2px;color:#cccccc;font-family:"Liberation Sans",sans-serif;">Python</div>
<div class="t" style="left:1326.50px;top:861.00px;font-size:13.7px;color:#cccccc;font-family:"Liberation Sans",sans-serif;">3.12.2 64-bit</div>
<svg style="left:1420px;top:860px;" width="18" height="16" viewBox="1420 860 18 16"><path d="M1422.4 868.3l3.8 3.8 8-8" fill="none" stroke="#cccccc" stroke-width="1.2"/></svg>
<div class="t" style="left:1438.30px;top:861.43px;font-size:13.2px;color:#cccccc;font-family:"Liberation Sans",sans-serif;">Continue</div>
<svg style="left:1505px;top:859px;" width="18" height="18" viewBox="1505 859 18 18"><g fill="none" stroke="#cccccc" stroke-width="1.05"><path d="M1514 861.2c-2.6 0-4.3 2-4.3 4.6v4.2l-1.6 2.4h11.8l-1.6-2.4v-4.2c0-2.6-1.7-4.6-4.3-4.6z"/><path d="M1512.8 873.2a1.3 1.3 0 0 0 2.4 0"/></g></svg>
</div>
</body></html>
